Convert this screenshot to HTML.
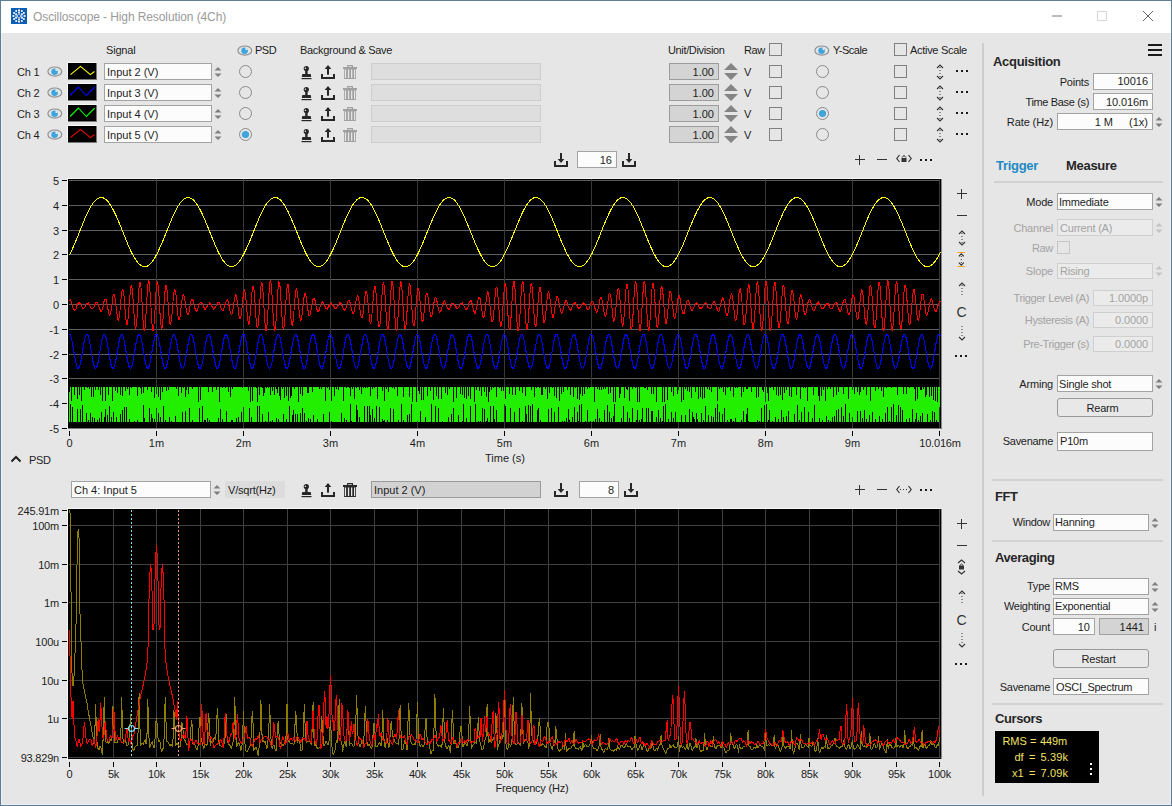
<!DOCTYPE html><html><head><meta charset="utf-8"><style>
html,body{margin:0;padding:0;}
body{width:1172px;height:806px;position:relative;overflow:hidden;background:#e6e6e6;font-family:"Liberation Sans",sans-serif;}
.t{position:absolute;white-space:pre;font-family:"Liberation Sans",sans-serif;}
svg{overflow:visible;}
</style></head><body>
<div style="position:absolute;left:0px;top:0px;width:1172px;height:33px;background:#ffffff;"></div>
<div style="position:absolute;left:1px;top:33px;width:1px;height:772px;background:#efefef;"></div>
<div style="position:absolute;left:1170px;top:33px;width:1px;height:772px;background:#efefef;"></div>
<div style="position:absolute;left:1px;top:804px;width:1170px;height:1px;background:#efefef;"></div>
<div style="position:absolute;left:0px;top:0px;width:1172px;height:806px;box-sizing:border-box;border:1px solid #5e7f9c;"></div>
<svg style="position:absolute;left:11px;top:8px;" width="16" height="16" viewBox="0 0 16 16"><rect width="16" height="16" fill="#0c5db4"/><circle cx="8" cy="2.2" r="1.0" fill="#ffffff"/><circle cx="5.2" cy="2.9" r="1.0" fill="#ffffff"/><circle cx="10.8" cy="2.9" r="1.0" fill="#ffffff"/><circle cx="3.1" cy="4.9" r="1.0" fill="#ffffff"/><circle cx="12.9" cy="4.9" r="1.0" fill="#ffffff"/><circle cx="2.3" cy="8" r="1.0" fill="#ffffff"/><circle cx="13.7" cy="8" r="1.0" fill="#ffffff"/><circle cx="3.1" cy="11.1" r="1.0" fill="#ffffff"/><circle cx="12.9" cy="11.1" r="1.0" fill="#ffffff"/><circle cx="5.2" cy="13.1" r="1.0" fill="#ffffff"/><circle cx="10.8" cy="13.1" r="1.0" fill="#ffffff"/><circle cx="8" cy="13.8" r="1.0" fill="#ffffff"/><circle cx="8" cy="4.6" r="1.0" fill="#ffffff"/><circle cx="5.1" cy="6.2" r="1.0" fill="#ffffff"/><circle cx="10.9" cy="6.2" r="1.0" fill="#ffffff"/><circle cx="5.1" cy="9.8" r="1.0" fill="#ffffff"/><circle cx="10.9" cy="9.8" r="1.0" fill="#ffffff"/><circle cx="8" cy="11.4" r="1.0" fill="#ffffff"/><circle cx="6.5" cy="8" r="1.0" fill="#ffffff"/><circle cx="9.5" cy="8" r="1.0" fill="#ffffff"/><circle cx="8" cy="6.7" r="1.0" fill="#ffffff"/><circle cx="8" cy="9.3" r="1.0" fill="#ffffff"/><path d="M8 2.2 V13.8 M2.3 8 H13.7 M3.1 4.9 L12.9 11.1 M12.9 4.9 L3.1 11.1" stroke="#cfe0f4" stroke-width="0.6"/><circle cx="8" cy="8" r="1.4" fill="#0c5db4"/></svg>
<div class="t" style="left:33px;top:10.84px;font-size:12px;line-height:12px;color:#9a9a9a;font-weight:normal;letter-spacing:-0.1px;">Oscilloscope - High Resolution (4Ch)</div>
<svg style="position:absolute;left:1052px;top:15px;" width="10" height="2" viewBox="0 0 10 2"><path d="M0 1 H10" stroke="#7a7a7a" stroke-width="1"/></svg>
<svg style="position:absolute;left:1097px;top:11px;" width="10" height="10" viewBox="0 0 10 10"><rect x="0.5" y="0.5" width="9" height="9" fill="none" stroke="#d6d6d6" stroke-width="1"/></svg>
<svg style="position:absolute;left:1143px;top:11px;" width="10" height="10" viewBox="0 0 10 10"><path d="M0 0 L10 10 M10 0 L0 10" stroke="#666" stroke-width="1"/></svg>
<div class="t" style="left:106px;top:44.69px;font-size:11px;line-height:11px;color:#1e1e1e;font-weight:normal;letter-spacing:-0.2px;">Signal</div>
<svg style="position:absolute;left:236.5px;top:44.5px;" width="16" height="11" viewBox="0 0 16 11"><ellipse cx="7.8" cy="5.6" rx="6.9" ry="4.6" fill="none" stroke="#8f8f8f" stroke-width="1.2"/><circle cx="7.6" cy="5.8" r="3.3" fill="#3ea4dc"/><path d="M8.4 2.6 A3.3 3.3 0 0 1 10.8 5.0 L8.6 5.0 Z" fill="#dfeef6"/></svg>
<div class="t" style="left:255px;top:44.69px;font-size:11px;line-height:11px;color:#1e1e1e;font-weight:normal;letter-spacing:-0.5px;">PSD</div>
<div class="t" style="left:300px;top:44.69px;font-size:11px;line-height:11px;color:#1e1e1e;font-weight:normal;letter-spacing:-0.3px;">Background &amp; Save</div>
<div class="t" style="left:668px;top:44.69px;font-size:11px;line-height:11px;color:#1e1e1e;font-weight:normal;letter-spacing:-0.35px;">Unit/Division</div>
<div class="t" style="left:744px;top:44.69px;font-size:11px;line-height:11px;color:#1e1e1e;font-weight:normal;letter-spacing:-0.4px;">Raw</div>
<div style="position:absolute;left:769px;top:43px;width:13px;height:13px;box-sizing:border-box;border:1px solid #808080;background:transparent;"></div>
<svg style="position:absolute;left:813.5px;top:44.5px;" width="16" height="11" viewBox="0 0 16 11"><ellipse cx="7.8" cy="5.6" rx="6.9" ry="4.6" fill="none" stroke="#8f8f8f" stroke-width="1.2"/><circle cx="7.6" cy="5.8" r="3.3" fill="#3ea4dc"/><path d="M8.4 2.6 A3.3 3.3 0 0 1 10.8 5.0 L8.6 5.0 Z" fill="#dfeef6"/></svg>
<div class="t" style="left:833px;top:44.69px;font-size:11px;line-height:11px;color:#1e1e1e;font-weight:normal;letter-spacing:-0.5px;">Y-Scale</div>
<div style="position:absolute;left:894px;top:43px;width:13px;height:13px;box-sizing:border-box;border:1px solid #808080;background:transparent;"></div>
<div class="t" style="left:910px;top:44.69px;font-size:11px;line-height:11px;color:#1e1e1e;font-weight:normal;letter-spacing:-0.3px;">Active Scale</div>
<div class="t" style="left:17px;top:66.69px;font-size:11px;line-height:11px;color:#1e1e1e;font-weight:normal;letter-spacing:-0.2px;">Ch 1</div>
<svg style="position:absolute;left:46.5px;top:65.7px;" width="16" height="11" viewBox="0 0 16 11"><ellipse cx="7.8" cy="5.6" rx="6.9" ry="4.6" fill="none" stroke="#8f8f8f" stroke-width="1.2"/><circle cx="7.6" cy="5.8" r="3.3" fill="#3ea4dc"/><path d="M8.4 2.6 A3.3 3.3 0 0 1 10.8 5.0 L8.6 5.0 Z" fill="#dfeef6"/></svg>
<div style="position:absolute;left:67px;top:62px;width:30px;height:17px;background:#f8f8f8;"></div>
<div style="position:absolute;left:68px;top:63px;width:29px;height:17px;background:#7a7a7a;"></div>
<div style="position:absolute;left:68px;top:63px;width:28px;height:16px;background:#000;"></div>
<svg style="position:absolute;left:68px;top:63px;" width="29" height="17" viewBox="0 0 29 17"><polyline points="2.5,11.6 12.5,3.4 22.4,11.6 26.5,8.5" fill="none" stroke="#ffff00" stroke-width="1.1"/></svg>
<div style="position:absolute;left:104px;top:63px;width:108px;height:17px;box-sizing:border-box;background:#fcfcfc;border:1px solid #a3a3a3;"></div>
<div class="t" style="left:107px;top:66.69px;font-size:11px;line-height:11px;color:#1e1e1e;font-weight:normal;letter-spacing:0px;">Input 2 (V)</div>
<svg style="position:absolute;left:214px;top:65.5px;" width="8" height="12" viewBox="0 0 8 12"><path d="M0.5 4.5 L4 1 L7.5 4.5 Z M0.5 7.5 L4 11 L7.5 7.5 Z" fill="#7f7f7f"/></svg>
<svg style="position:absolute;left:238.5px;top:64.7px;" width="13" height="13" viewBox="0 0 13 13"><circle cx="6.5" cy="6.5" r="6" fill="none" stroke="#8a8a8a" stroke-width="1"/></svg>
<svg style="position:absolute;left:301px;top:66px;" width="12" height="14" viewBox="0 0 12 14"><circle cx="5.3" cy="2.6" r="2.6" fill="#262626"/><rect x="4.2" y="4" width="2.4" height="4" fill="#262626"/><path d="M1.3 8 H9.7 L10.2 11 H0.8 Z" fill="#262626"/><rect x="0.5" y="12" width="10" height="1.2" fill="#262626"/><circle cx="4.4" cy="2.3" r="0.8" fill="#e6e6e6"/></svg>
<svg style="position:absolute;left:321px;top:65px;" width="15" height="14" viewBox="0 0 15 14"><path d="M7 0 L10.3 4 H3.7 Z" fill="#262626"/><rect x="6" y="3.5" width="2" height="6.2" fill="#262626"/><path d="M1 9 V12.9 H13 V9" fill="none" stroke="#262626" stroke-width="2"/></svg>
<svg style="position:absolute;left:343px;top:65px;" width="14" height="15" viewBox="0 0 14 15"><path d="M4.7 2 V0.6 H9.4 V2" fill="none" stroke="#a0a0a0" stroke-width="1.2"/><rect x="0" y="2" width="14" height="2" fill="#a0a0a0"/><path d="M1.1 4 V13.9 H12.9 V4 Z M1.9 4.5 V13 H3.1 V4.5 Z M4.9 4.5 V13 H6.2 V4.5 Z M8 4.5 V13 H9.3 V4.5 Z M11 4.5 V13 H12.1 V4.5 Z" fill="#a0a0a0" fill-rule="evenodd"/></svg>
<div style="position:absolute;left:371px;top:63px;width:170px;height:17px;box-sizing:border-box;background:#dedede;border:1px solid #cdcdcd;"></div>
<div style="position:absolute;left:669px;top:63px;width:50px;height:17px;box-sizing:border-box;background:#d4d4d4;border:1px solid #9c9c9c;"></div>
<div class="t" style="right:458px;text-align:right;top:66.69px;font-size:11px;line-height:11px;color:#1e1e1e;font-weight:normal;letter-spacing:0px;">1.00</div>
<svg style="position:absolute;left:724px;top:62.5px;" width="14" height="18" viewBox="0 0 14 18"><path d="M0 7 L7 0 L14 7 Z M0 10 L7 17 L14 10 Z" fill="#858585"/></svg>
<div class="t" style="left:744px;top:66.69px;font-size:11px;line-height:11px;color:#1e1e1e;font-weight:normal;letter-spacing:0px;">V</div>
<div style="position:absolute;left:769px;top:65px;width:13px;height:13px;box-sizing:border-box;border:1px solid #808080;background:transparent;"></div>
<svg style="position:absolute;left:815.5px;top:64.7px;" width="13" height="13" viewBox="0 0 13 13"><circle cx="6.5" cy="6.5" r="6" fill="none" stroke="#8a8a8a" stroke-width="1"/></svg>
<div style="position:absolute;left:894px;top:65px;width:13px;height:13px;box-sizing:border-box;border:1px solid #808080;background:transparent;"></div>
<svg style="position:absolute;left:935.5px;top:64px;" width="8" height="16" viewBox="0 0 8 16"><path d="M1 4 L4 1 L7 4 M1 12 L4 15 L7 12" fill="none" stroke="#333" stroke-width="1.1"/><path d="M4 3 V13" stroke="#333" stroke-width="1" stroke-dasharray="1 2"/></svg>
<div style="position:absolute;left:956px;top:70px;width:2px;height:2px;background:#1a1a1a;"></div>
<div style="position:absolute;left:961px;top:70px;width:2px;height:2px;background:#1a1a1a;"></div>
<div style="position:absolute;left:966px;top:70px;width:2px;height:2px;background:#1a1a1a;"></div>
<div class="t" style="left:17px;top:87.69px;font-size:11px;line-height:11px;color:#1e1e1e;font-weight:normal;letter-spacing:-0.2px;">Ch 2</div>
<svg style="position:absolute;left:46.5px;top:86.7px;" width="16" height="11" viewBox="0 0 16 11"><ellipse cx="7.8" cy="5.6" rx="6.9" ry="4.6" fill="none" stroke="#8f8f8f" stroke-width="1.2"/><circle cx="7.6" cy="5.8" r="3.3" fill="#3ea4dc"/><path d="M8.4 2.6 A3.3 3.3 0 0 1 10.8 5.0 L8.6 5.0 Z" fill="#dfeef6"/></svg>
<div style="position:absolute;left:67px;top:83px;width:30px;height:17px;background:#f8f8f8;"></div>
<div style="position:absolute;left:68px;top:84px;width:29px;height:17px;background:#7a7a7a;"></div>
<div style="position:absolute;left:68px;top:84px;width:28px;height:16px;background:#000;"></div>
<svg style="position:absolute;left:68px;top:84px;" width="29" height="17" viewBox="0 0 29 17"><polyline points="2.0,11.5 10.4,3.0 18.3,11.5 26.8,3.0" fill="none" stroke="#0000ff" stroke-width="1.1"/></svg>
<div style="position:absolute;left:104px;top:84px;width:108px;height:17px;box-sizing:border-box;background:#fcfcfc;border:1px solid #a3a3a3;"></div>
<div class="t" style="left:107px;top:87.69px;font-size:11px;line-height:11px;color:#1e1e1e;font-weight:normal;letter-spacing:0px;">Input 3 (V)</div>
<svg style="position:absolute;left:214px;top:86.5px;" width="8" height="12" viewBox="0 0 8 12"><path d="M0.5 4.5 L4 1 L7.5 4.5 Z M0.5 7.5 L4 11 L7.5 7.5 Z" fill="#7f7f7f"/></svg>
<svg style="position:absolute;left:238.5px;top:85.7px;" width="13" height="13" viewBox="0 0 13 13"><circle cx="6.5" cy="6.5" r="6" fill="none" stroke="#8a8a8a" stroke-width="1"/></svg>
<svg style="position:absolute;left:301px;top:87px;" width="12" height="14" viewBox="0 0 12 14"><circle cx="5.3" cy="2.6" r="2.6" fill="#262626"/><rect x="4.2" y="4" width="2.4" height="4" fill="#262626"/><path d="M1.3 8 H9.7 L10.2 11 H0.8 Z" fill="#262626"/><rect x="0.5" y="12" width="10" height="1.2" fill="#262626"/><circle cx="4.4" cy="2.3" r="0.8" fill="#e6e6e6"/></svg>
<svg style="position:absolute;left:321px;top:86px;" width="15" height="14" viewBox="0 0 15 14"><path d="M7 0 L10.3 4 H3.7 Z" fill="#262626"/><rect x="6" y="3.5" width="2" height="6.2" fill="#262626"/><path d="M1 9 V12.9 H13 V9" fill="none" stroke="#262626" stroke-width="2"/></svg>
<svg style="position:absolute;left:343px;top:86px;" width="14" height="15" viewBox="0 0 14 15"><path d="M4.7 2 V0.6 H9.4 V2" fill="none" stroke="#a0a0a0" stroke-width="1.2"/><rect x="0" y="2" width="14" height="2" fill="#a0a0a0"/><path d="M1.1 4 V13.9 H12.9 V4 Z M1.9 4.5 V13 H3.1 V4.5 Z M4.9 4.5 V13 H6.2 V4.5 Z M8 4.5 V13 H9.3 V4.5 Z M11 4.5 V13 H12.1 V4.5 Z" fill="#a0a0a0" fill-rule="evenodd"/></svg>
<div style="position:absolute;left:371px;top:84px;width:170px;height:17px;box-sizing:border-box;background:#dedede;border:1px solid #cdcdcd;"></div>
<div style="position:absolute;left:669px;top:84px;width:50px;height:17px;box-sizing:border-box;background:#d4d4d4;border:1px solid #9c9c9c;"></div>
<div class="t" style="right:458px;text-align:right;top:87.69px;font-size:11px;line-height:11px;color:#1e1e1e;font-weight:normal;letter-spacing:0px;">1.00</div>
<svg style="position:absolute;left:724px;top:83.5px;" width="14" height="18" viewBox="0 0 14 18"><path d="M0 7 L7 0 L14 7 Z M0 10 L7 17 L14 10 Z" fill="#858585"/></svg>
<div class="t" style="left:744px;top:87.69px;font-size:11px;line-height:11px;color:#1e1e1e;font-weight:normal;letter-spacing:0px;">V</div>
<div style="position:absolute;left:769px;top:86px;width:13px;height:13px;box-sizing:border-box;border:1px solid #808080;background:transparent;"></div>
<svg style="position:absolute;left:815.5px;top:85.7px;" width="13" height="13" viewBox="0 0 13 13"><circle cx="6.5" cy="6.5" r="6" fill="none" stroke="#8a8a8a" stroke-width="1"/></svg>
<div style="position:absolute;left:894px;top:86px;width:13px;height:13px;box-sizing:border-box;border:1px solid #808080;background:transparent;"></div>
<svg style="position:absolute;left:935.5px;top:85px;" width="8" height="16" viewBox="0 0 8 16"><path d="M1 4 L4 1 L7 4 M1 12 L4 15 L7 12" fill="none" stroke="#333" stroke-width="1.1"/><path d="M4 3 V13" stroke="#333" stroke-width="1" stroke-dasharray="1 2"/></svg>
<div style="position:absolute;left:956px;top:91px;width:2px;height:2px;background:#1a1a1a;"></div>
<div style="position:absolute;left:961px;top:91px;width:2px;height:2px;background:#1a1a1a;"></div>
<div style="position:absolute;left:966px;top:91px;width:2px;height:2px;background:#1a1a1a;"></div>
<div class="t" style="left:17px;top:108.69px;font-size:11px;line-height:11px;color:#1e1e1e;font-weight:normal;letter-spacing:-0.2px;">Ch 3</div>
<svg style="position:absolute;left:46.5px;top:107.7px;" width="16" height="11" viewBox="0 0 16 11"><ellipse cx="7.8" cy="5.6" rx="6.9" ry="4.6" fill="none" stroke="#8f8f8f" stroke-width="1.2"/><circle cx="7.6" cy="5.8" r="3.3" fill="#3ea4dc"/><path d="M8.4 2.6 A3.3 3.3 0 0 1 10.8 5.0 L8.6 5.0 Z" fill="#dfeef6"/></svg>
<div style="position:absolute;left:67px;top:104px;width:30px;height:17px;background:#f8f8f8;"></div>
<div style="position:absolute;left:68px;top:105px;width:29px;height:17px;background:#7a7a7a;"></div>
<div style="position:absolute;left:68px;top:105px;width:28px;height:16px;background:#000;"></div>
<svg style="position:absolute;left:68px;top:105px;" width="29" height="17" viewBox="0 0 29 17"><polyline points="2.0,11.5 10.4,3.0 18.3,11.5 26.8,3.0" fill="none" stroke="#00ff00" stroke-width="1.1"/></svg>
<div style="position:absolute;left:104px;top:105px;width:108px;height:17px;box-sizing:border-box;background:#fcfcfc;border:1px solid #a3a3a3;"></div>
<div class="t" style="left:107px;top:108.69px;font-size:11px;line-height:11px;color:#1e1e1e;font-weight:normal;letter-spacing:0px;">Input 4 (V)</div>
<svg style="position:absolute;left:214px;top:107.5px;" width="8" height="12" viewBox="0 0 8 12"><path d="M0.5 4.5 L4 1 L7.5 4.5 Z M0.5 7.5 L4 11 L7.5 7.5 Z" fill="#7f7f7f"/></svg>
<svg style="position:absolute;left:238.5px;top:106.7px;" width="13" height="13" viewBox="0 0 13 13"><circle cx="6.5" cy="6.5" r="6" fill="none" stroke="#8a8a8a" stroke-width="1"/></svg>
<svg style="position:absolute;left:301px;top:108px;" width="12" height="14" viewBox="0 0 12 14"><circle cx="5.3" cy="2.6" r="2.6" fill="#262626"/><rect x="4.2" y="4" width="2.4" height="4" fill="#262626"/><path d="M1.3 8 H9.7 L10.2 11 H0.8 Z" fill="#262626"/><rect x="0.5" y="12" width="10" height="1.2" fill="#262626"/><circle cx="4.4" cy="2.3" r="0.8" fill="#e6e6e6"/></svg>
<svg style="position:absolute;left:321px;top:107px;" width="15" height="14" viewBox="0 0 15 14"><path d="M7 0 L10.3 4 H3.7 Z" fill="#262626"/><rect x="6" y="3.5" width="2" height="6.2" fill="#262626"/><path d="M1 9 V12.9 H13 V9" fill="none" stroke="#262626" stroke-width="2"/></svg>
<svg style="position:absolute;left:343px;top:107px;" width="14" height="15" viewBox="0 0 14 15"><path d="M4.7 2 V0.6 H9.4 V2" fill="none" stroke="#a0a0a0" stroke-width="1.2"/><rect x="0" y="2" width="14" height="2" fill="#a0a0a0"/><path d="M1.1 4 V13.9 H12.9 V4 Z M1.9 4.5 V13 H3.1 V4.5 Z M4.9 4.5 V13 H6.2 V4.5 Z M8 4.5 V13 H9.3 V4.5 Z M11 4.5 V13 H12.1 V4.5 Z" fill="#a0a0a0" fill-rule="evenodd"/></svg>
<div style="position:absolute;left:371px;top:105px;width:170px;height:17px;box-sizing:border-box;background:#dedede;border:1px solid #cdcdcd;"></div>
<div style="position:absolute;left:669px;top:105px;width:50px;height:17px;box-sizing:border-box;background:#d4d4d4;border:1px solid #9c9c9c;"></div>
<div class="t" style="right:458px;text-align:right;top:108.69px;font-size:11px;line-height:11px;color:#1e1e1e;font-weight:normal;letter-spacing:0px;">1.00</div>
<svg style="position:absolute;left:724px;top:104.5px;" width="14" height="18" viewBox="0 0 14 18"><path d="M0 7 L7 0 L14 7 Z M0 10 L7 17 L14 10 Z" fill="#858585"/></svg>
<div class="t" style="left:744px;top:108.69px;font-size:11px;line-height:11px;color:#1e1e1e;font-weight:normal;letter-spacing:0px;">V</div>
<div style="position:absolute;left:769px;top:107px;width:13px;height:13px;box-sizing:border-box;border:1px solid #808080;background:transparent;"></div>
<svg style="position:absolute;left:815.5px;top:106.7px;" width="13" height="13" viewBox="0 0 13 13"><circle cx="6.5" cy="6.5" r="6" fill="none" stroke="#8a8a8a" stroke-width="1"/><circle cx="6.5" cy="6.5" r="3.6" fill="#3ea4dc"/></svg>
<div style="position:absolute;left:894px;top:107px;width:13px;height:13px;box-sizing:border-box;border:1px solid #808080;background:transparent;"></div>
<svg style="position:absolute;left:935.5px;top:106px;" width="8" height="16" viewBox="0 0 8 16"><path d="M1 4 L4 1 L7 4 M1 12 L4 15 L7 12" fill="none" stroke="#333" stroke-width="1.1"/><path d="M4 3 V13" stroke="#333" stroke-width="1" stroke-dasharray="1 2"/></svg>
<div style="position:absolute;left:956px;top:112px;width:2px;height:2px;background:#1a1a1a;"></div>
<div style="position:absolute;left:961px;top:112px;width:2px;height:2px;background:#1a1a1a;"></div>
<div style="position:absolute;left:966px;top:112px;width:2px;height:2px;background:#1a1a1a;"></div>
<div class="t" style="left:17px;top:129.69px;font-size:11px;line-height:11px;color:#1e1e1e;font-weight:normal;letter-spacing:-0.2px;">Ch 4</div>
<svg style="position:absolute;left:46.5px;top:128.7px;" width="16" height="11" viewBox="0 0 16 11"><ellipse cx="7.8" cy="5.6" rx="6.9" ry="4.6" fill="none" stroke="#8f8f8f" stroke-width="1.2"/><circle cx="7.6" cy="5.8" r="3.3" fill="#3ea4dc"/><path d="M8.4 2.6 A3.3 3.3 0 0 1 10.8 5.0 L8.6 5.0 Z" fill="#dfeef6"/></svg>
<div style="position:absolute;left:67px;top:125px;width:30px;height:17px;background:#f8f8f8;"></div>
<div style="position:absolute;left:68px;top:126px;width:29px;height:17px;background:#7a7a7a;"></div>
<div style="position:absolute;left:68px;top:126px;width:28px;height:16px;background:#000;"></div>
<svg style="position:absolute;left:68px;top:126px;" width="29" height="17" viewBox="0 0 29 17"><polyline points="2.5,11.6 12.5,3.4 22.4,11.6 26.5,8.5" fill="none" stroke="#ff0000" stroke-width="1.1"/></svg>
<div style="position:absolute;left:104px;top:126px;width:108px;height:17px;box-sizing:border-box;background:#fcfcfc;border:1px solid #a3a3a3;"></div>
<div class="t" style="left:107px;top:129.69px;font-size:11px;line-height:11px;color:#1e1e1e;font-weight:normal;letter-spacing:0px;">Input 5 (V)</div>
<svg style="position:absolute;left:214px;top:128.5px;" width="8" height="12" viewBox="0 0 8 12"><path d="M0.5 4.5 L4 1 L7.5 4.5 Z M0.5 7.5 L4 11 L7.5 7.5 Z" fill="#7f7f7f"/></svg>
<svg style="position:absolute;left:238.5px;top:127.69999999999999px;" width="13" height="13" viewBox="0 0 13 13"><circle cx="6.5" cy="6.5" r="6" fill="none" stroke="#8a8a8a" stroke-width="1"/><circle cx="6.5" cy="6.5" r="3.6" fill="#3ea4dc"/></svg>
<svg style="position:absolute;left:301px;top:129px;" width="12" height="14" viewBox="0 0 12 14"><circle cx="5.3" cy="2.6" r="2.6" fill="#262626"/><rect x="4.2" y="4" width="2.4" height="4" fill="#262626"/><path d="M1.3 8 H9.7 L10.2 11 H0.8 Z" fill="#262626"/><rect x="0.5" y="12" width="10" height="1.2" fill="#262626"/><circle cx="4.4" cy="2.3" r="0.8" fill="#e6e6e6"/></svg>
<svg style="position:absolute;left:321px;top:128px;" width="15" height="14" viewBox="0 0 15 14"><path d="M7 0 L10.3 4 H3.7 Z" fill="#262626"/><rect x="6" y="3.5" width="2" height="6.2" fill="#262626"/><path d="M1 9 V12.9 H13 V9" fill="none" stroke="#262626" stroke-width="2"/></svg>
<svg style="position:absolute;left:343px;top:128px;" width="14" height="15" viewBox="0 0 14 15"><path d="M4.7 2 V0.6 H9.4 V2" fill="none" stroke="#a0a0a0" stroke-width="1.2"/><rect x="0" y="2" width="14" height="2" fill="#a0a0a0"/><path d="M1.1 4 V13.9 H12.9 V4 Z M1.9 4.5 V13 H3.1 V4.5 Z M4.9 4.5 V13 H6.2 V4.5 Z M8 4.5 V13 H9.3 V4.5 Z M11 4.5 V13 H12.1 V4.5 Z" fill="#a0a0a0" fill-rule="evenodd"/></svg>
<div style="position:absolute;left:371px;top:126px;width:170px;height:17px;box-sizing:border-box;background:#dedede;border:1px solid #cdcdcd;"></div>
<div style="position:absolute;left:669px;top:126px;width:50px;height:17px;box-sizing:border-box;background:#d4d4d4;border:1px solid #9c9c9c;"></div>
<div class="t" style="right:458px;text-align:right;top:129.69px;font-size:11px;line-height:11px;color:#1e1e1e;font-weight:normal;letter-spacing:0px;">1.00</div>
<svg style="position:absolute;left:724px;top:125.5px;" width="14" height="18" viewBox="0 0 14 18"><path d="M0 7 L7 0 L14 7 Z M0 10 L7 17 L14 10 Z" fill="#858585"/></svg>
<div class="t" style="left:744px;top:129.69px;font-size:11px;line-height:11px;color:#1e1e1e;font-weight:normal;letter-spacing:0px;">V</div>
<div style="position:absolute;left:769px;top:128px;width:13px;height:13px;box-sizing:border-box;border:1px solid #808080;background:transparent;"></div>
<svg style="position:absolute;left:815.5px;top:127.69999999999999px;" width="13" height="13" viewBox="0 0 13 13"><circle cx="6.5" cy="6.5" r="6" fill="none" stroke="#8a8a8a" stroke-width="1"/></svg>
<div style="position:absolute;left:894px;top:128px;width:13px;height:13px;box-sizing:border-box;border:1px solid #808080;background:transparent;"></div>
<svg style="position:absolute;left:935.5px;top:127px;" width="8" height="16" viewBox="0 0 8 16"><path d="M1 4 L4 1 L7 4 M1 12 L4 15 L7 12" fill="none" stroke="#333" stroke-width="1.1"/><path d="M4 3 V13" stroke="#333" stroke-width="1" stroke-dasharray="1 2"/></svg>
<div style="position:absolute;left:956px;top:133px;width:2px;height:2px;background:#1a1a1a;"></div>
<div style="position:absolute;left:961px;top:133px;width:2px;height:2px;background:#1a1a1a;"></div>
<div style="position:absolute;left:966px;top:133px;width:2px;height:2px;background:#1a1a1a;"></div>
<svg style="position:absolute;left:554px;top:153px;" width="14" height="14" viewBox="0 0 14 14"><rect x="6" y="0" width="2" height="6.5" fill="#262626"/><path d="M3.7 6 H10.3 L7 10 Z" fill="#262626"/><path d="M1 8 V12.9 H13 V8" fill="none" stroke="#262626" stroke-width="2"/></svg>
<div style="position:absolute;left:577px;top:151px;width:40px;height:17px;box-sizing:border-box;background:#fcfcfc;border:1px solid #a3a3a3;"></div>
<div class="t" style="right:560px;text-align:right;top:154.69px;font-size:11px;line-height:11px;color:#1e1e1e;font-weight:normal;letter-spacing:0px;">16</div>
<svg style="position:absolute;left:622px;top:153px;" width="14" height="14" viewBox="0 0 14 14"><rect x="6" y="0" width="2" height="6.5" fill="#262626"/><path d="M3.7 6 H10.3 L7 10 Z" fill="#262626"/><path d="M1 8 V12.9 H13 V8" fill="none" stroke="#262626" stroke-width="2"/></svg>
<div style="position:absolute;left:855px;top:159px;width:10px;height:1px;background:#333;"></div>
<div style="position:absolute;left:859px;top:155px;width:1px;height:10px;background:#333;"></div>
<div style="position:absolute;left:877px;top:159px;width:10px;height:1px;background:#333;"></div>
<svg style="position:absolute;left:896px;top:154px;" width="16" height="9" viewBox="0 0 16 9"><path d="M3.5 1 L0.8 4.5 L3.5 8 M12.5 1 L15.2 4.5 L12.5 8" fill="none" stroke="#333" stroke-width="1.2"/><path d="M6 3.5 Q8 0 10 3.5" fill="none" stroke="#333" stroke-width="1"/><rect x="5.5" y="4" width="5" height="4" fill="#333"/></svg>
<div style="position:absolute;left:920px;top:159px;width:2px;height:2px;background:#1a1a1a;"></div>
<div style="position:absolute;left:925px;top:159px;width:2px;height:2px;background:#1a1a1a;"></div>
<div style="position:absolute;left:930px;top:159px;width:2px;height:2px;background:#1a1a1a;"></div>
<div style="position:absolute;left:67px;top:178px;width:875px;height:1px;background:#f6f6f6;"></div>
<div style="position:absolute;left:67px;top:178px;width:1px;height:251px;background:#f6f6f6;"></div>
<div style="position:absolute;left:68px;top:179px;width:873px;height:249px;background:#000;"></div>
<div style="position:absolute;left:68px;top:428px;width:874px;height:1px;background:#7a7a7a;"></div>
<div style="position:absolute;left:941px;top:179px;width:1px;height:250px;background:#888;"></div>
<svg style="position:absolute;left:68px;top:179px;" width="873" height="249" viewBox="0 0 873 249"><path d="M1 1.5 H872" stroke="#5e5e5e" stroke-width="1"/><path d="M1 26.5 H872" stroke="#5e5e5e" stroke-width="1"/><path d="M1 51.5 H872" stroke="#5e5e5e" stroke-width="1"/><path d="M1 75.5 H872" stroke="#5e5e5e" stroke-width="1"/><path d="M1 100.5 H872" stroke="#5e5e5e" stroke-width="1"/><path d="M1 125.5 H872" stroke="#5e5e5e" stroke-width="1"/><path d="M1 150.5 H872" stroke="#5e5e5e" stroke-width="1"/><path d="M1 175.5 H872" stroke="#5e5e5e" stroke-width="1"/><path d="M1 199.5 H872" stroke="#5e5e5e" stroke-width="1"/><path d="M1 224.5 H872" stroke="#5e5e5e" stroke-width="1"/><path d="M88.5 0 V249" stroke="#383838" stroke-width="1"/><path d="M175.5 0 V249" stroke="#383838" stroke-width="1"/><path d="M262.5 0 V249" stroke="#383838" stroke-width="1"/><path d="M349.5 0 V249" stroke="#383838" stroke-width="1"/><path d="M436.5 0 V249" stroke="#383838" stroke-width="1"/><path d="M523.5 0 V249" stroke="#383838" stroke-width="1"/><path d="M610.5 0 V249" stroke="#383838" stroke-width="1"/><path d="M697.5 0 V249" stroke="#383838" stroke-width="1"/><path d="M784.5 0 V249" stroke="#383838" stroke-width="1"/><path d="M871.5 0 V249" stroke="#383838" stroke-width="1"/><path d="M1.5 75.8 L1.8 75.2 L2.2 74.5 L2.5 73.8 L2.8 73.2 L3.2 72.5 L3.5 71.8 L3.8 71.1 L4.2 70.3 L4.5 69.6 L4.8 68.9 L5.2 68.1 L5.5 67.4 L5.9 66.6 L6.2 65.8 L6.5 65.0 L6.9 64.2 L7.2 63.4 L7.5 62.6 L7.9 61.8 L8.2 61.0 L8.5 60.2 L8.9 59.4 L9.2 58.6 L9.5 57.7 L9.9 56.9 L10.2 56.1 L10.5 55.2 L10.9 54.4 L11.2 53.6 L11.5 52.7 L11.9 51.9 L12.2 51.0 L12.6 50.2 L12.9 49.4 L13.2 48.5 L13.6 47.7 L13.9 46.9 L14.2 46.1 L14.6 45.3 L14.9 44.4 L15.2 43.6 L15.6 42.8 L15.9 42.0 L16.2 41.2 L16.6 40.5 L16.9 39.7 L17.2 38.9 L17.6 38.2 L17.9 37.4 L18.2 36.7 L18.6 35.9 L18.9 35.2 L19.3 34.5 L19.6 33.8 L19.9 33.1 L20.3 32.4 L20.6 31.8 L20.9 31.1 L21.3 30.5 L21.6 29.8 L21.9 29.2 L22.3 28.6 L22.6 28.1 L22.9 27.5 L23.3 26.9 L23.6 26.4 L23.9 25.9 L24.3 25.4 L24.6 24.9 L24.9 24.4 L25.3 23.9 L25.6 23.5 L26.0 23.1 L26.3 22.7 L26.6 22.3 L27.0 21.9 L27.3 21.5 L27.6 21.2 L28.0 20.9 L28.3 20.6 L28.6 20.3 L29.0 20.1 L29.3 19.8 L29.6 19.6 L30.0 19.4 L30.3 19.2 L30.6 19.1 L31.0 18.9 L31.3 18.8 L31.6 18.7 L32.0 18.6 L32.3 18.6 L32.7 18.5 L33.0 18.5 L33.3 18.5 L33.7 18.5 L34.0 18.6 L34.3 18.6 L34.7 18.7 L35.0 18.8 L35.3 18.9 L35.7 19.1 L36.0 19.3 L36.3 19.4 L36.7 19.6 L37.0 19.9 L37.3 20.1 L37.7 20.4 L38.0 20.6 L38.3 20.9 L38.7 21.3 L39.0 21.6 L39.4 21.9 L39.7 22.3 L40.0 22.7 L40.4 23.1 L40.7 23.5 L41.0 24.0 L41.4 24.4 L41.7 24.9 L42.0 25.4 L42.4 25.9 L42.7 26.5 L43.0 27.0 L43.4 27.6 L43.7 28.1 L44.0 28.7 L44.4 29.3 L44.7 29.9 L45.0 30.6 L45.4 31.2 L45.7 31.9 L46.1 32.5 L46.4 33.2 L46.7 33.9 L47.1 34.6 L47.4 35.3 L47.7 36.0 L48.1 36.8 L48.4 37.5 L48.7 38.3 L49.1 39.0 L49.4 39.8 L49.7 40.6 L50.1 41.3 L50.4 42.1 L50.7 42.9 L51.1 43.7 L51.4 44.5 L51.7 45.4 L52.1 46.2 L52.4 47.0 L52.8 47.8 L53.1 48.7 L53.4 49.5 L53.8 50.3 L54.1 51.2 L54.4 52.0 L54.8 52.8 L55.1 53.7 L55.4 54.5 L55.8 55.3 L56.1 56.2 L56.4 57.0 L56.8 57.8 L57.1 58.7 L57.4 59.5 L57.8 60.3 L58.1 61.1 L58.4 61.9 L58.8 62.7 L59.1 63.6 L59.5 64.3 L59.8 65.1 L60.1 65.9 L60.5 66.7 L60.8 67.5 L61.1 68.2 L61.5 69.0 L61.8 69.7 L62.1 70.4 L62.5 71.2 L62.8 71.9 L63.1 72.6 L63.5 73.2 L63.8 73.9 L64.1 74.6 L64.5 75.2 L64.8 75.9 L65.1 76.5 L65.5 77.1 L65.8 77.7 L66.2 78.3 L66.5 78.8 L66.8 79.4 L67.2 79.9 L67.5 80.5 L67.8 81.0 L68.2 81.5 L68.5 81.9 L68.8 82.4 L69.2 82.8 L69.5 83.2 L69.8 83.6 L70.2 84.0 L70.5 84.4 L70.8 84.7 L71.2 85.1 L71.5 85.4 L71.8 85.7 L72.2 85.9 L72.5 86.2 L72.9 86.4 L73.2 86.6 L73.5 86.8 L73.9 87.0 L74.2 87.2 L74.5 87.3 L74.9 87.4 L75.2 87.5 L75.5 87.6 L75.9 87.7 L76.2 87.7 L76.5 87.7 L76.9 87.7 L77.2 87.7 L77.5 87.6 L77.9 87.6 L78.2 87.5 L78.5 87.4 L78.9 87.2 L79.2 87.1 L79.6 86.9 L79.9 86.7 L80.2 86.5 L80.6 86.3 L80.9 86.1 L81.2 85.8 L81.6 85.5 L81.9 85.2 L82.2 84.9 L82.6 84.6 L82.9 84.2 L83.2 83.8 L83.6 83.4 L83.9 83.0 L84.2 82.6 L84.6 82.1 L84.9 81.7 L85.2 81.2 L85.6 80.7 L85.9 80.2 L86.3 79.6 L86.6 79.1 L86.9 78.5 L87.3 78.0 L87.6 77.4 L87.9 76.8 L88.3 76.2 L88.6 75.5 L88.9 74.9 L89.3 74.2 L89.6 73.6 L89.9 72.9 L90.3 72.2 L90.6 71.5 L90.9 70.8 L91.3 70.0 L91.6 69.3 L91.9 68.6 L92.3 67.8 L92.6 67.0 L93.0 66.3 L93.3 65.5 L93.6 64.7 L94.0 63.9 L94.3 63.1 L94.6 62.3 L95.0 61.5 L95.3 60.7 L95.6 59.9 L96.0 59.0 L96.3 58.2 L96.6 57.4 L97.0 56.6 L97.3 55.7 L97.6 54.9 L98.0 54.0 L98.3 53.2 L98.6 52.4 L99.0 51.5 L99.3 50.7 L99.7 49.9 L100.0 49.0 L100.3 48.2 L100.7 47.4 L101.0 46.6 L101.3 45.7 L101.7 44.9 L102.0 44.1 L102.3 43.3 L102.7 42.5 L103.0 41.7 L103.3 40.9 L103.7 40.1 L104.0 39.4 L104.3 38.6 L104.7 37.8 L105.0 37.1 L105.3 36.4 L105.7 35.6 L106.0 34.9 L106.4 34.2 L106.7 33.5 L107.0 32.8 L107.4 32.2 L107.7 31.5 L108.0 30.8 L108.4 30.2 L108.7 29.6 L109.0 29.0 L109.4 28.4 L109.7 27.8 L110.0 27.3 L110.4 26.7 L110.7 26.2 L111.0 25.7 L111.4 25.1 L111.7 24.7 L112.0 24.2 L112.4 23.7 L112.7 23.3 L113.1 22.9 L113.4 22.5 L113.7 22.1 L114.1 21.8 L114.4 21.4 L114.7 21.1 L115.1 20.8 L115.4 20.5 L115.7 20.2 L116.1 20.0 L116.4 19.7 L116.7 19.5 L117.1 19.3 L117.4 19.2 L117.7 19.0 L118.1 18.9 L118.4 18.8 L118.7 18.7 L119.1 18.6 L119.4 18.6 L119.8 18.5 L120.1 18.5 L120.4 18.5 L120.8 18.6 L121.1 18.6 L121.4 18.7 L121.8 18.8 L122.1 18.9 L122.4 19.0 L122.8 19.2 L123.1 19.3 L123.4 19.5 L123.8 19.7 L124.1 20.0 L124.4 20.2 L124.8 20.5 L125.1 20.8 L125.4 21.1 L125.8 21.4 L126.1 21.7 L126.5 22.1 L126.8 22.5 L127.1 22.9 L127.5 23.3 L127.8 23.7 L128.1 24.2 L128.5 24.6 L128.8 25.1 L129.1 25.6 L129.5 26.1 L129.8 26.7 L130.1 27.2 L130.5 27.8 L130.8 28.4 L131.1 29.0 L131.5 29.6 L131.8 30.2 L132.1 30.8 L132.5 31.5 L132.8 32.1 L133.2 32.8 L133.5 33.5 L133.8 34.2 L134.2 34.9 L134.5 35.6 L134.8 36.3 L135.2 37.1 L135.5 37.8 L135.8 38.6 L136.2 39.3 L136.5 40.1 L136.8 40.9 L137.2 41.7 L137.5 42.5 L137.8 43.3 L138.2 44.1 L138.5 44.9 L138.8 45.7 L139.2 46.5 L139.5 47.3 L139.9 48.2 L140.2 49.0 L140.5 49.8 L140.9 50.7 L141.2 51.5 L141.5 52.3 L141.9 53.2 L142.2 54.0 L142.5 54.9 L142.9 55.7 L143.2 56.5 L143.5 57.4 L143.9 58.2 L144.2 59.0 L144.5 59.8 L144.9 60.7 L145.2 61.5 L145.5 62.3 L145.9 63.1 L146.2 63.9 L146.6 64.7 L146.9 65.5 L147.2 66.2 L147.6 67.0 L147.9 67.8 L148.2 68.5 L148.6 69.3 L148.9 70.0 L149.2 70.7 L149.6 71.4 L149.9 72.2 L150.2 72.8 L150.6 73.5 L150.9 74.2 L151.2 74.9 L151.6 75.5 L151.9 76.1 L152.2 76.7 L152.6 77.4 L152.9 77.9 L153.3 78.5 L153.6 79.1 L153.9 79.6 L154.3 80.2 L154.6 80.7 L154.9 81.2 L155.3 81.6 L155.6 82.1 L155.9 82.6 L156.3 83.0 L156.6 83.4 L156.9 83.8 L157.3 84.2 L157.6 84.5 L157.9 84.9 L158.3 85.2 L158.6 85.5 L158.9 85.8 L159.3 86.1 L159.6 86.3 L160.0 86.5 L160.3 86.7 L160.6 86.9 L161.0 87.1 L161.3 87.2 L161.6 87.4 L162.0 87.5 L162.3 87.6 L162.6 87.6 L163.0 87.7 L163.3 87.7 L163.6 87.7 L164.0 87.7 L164.3 87.7 L164.6 87.6 L165.0 87.5 L165.3 87.4 L165.6 87.3 L166.0 87.2 L166.3 87.0 L166.7 86.9 L167.0 86.7 L167.3 86.4 L167.7 86.2 L168.0 86.0 L168.3 85.7 L168.7 85.4 L169.0 85.1 L169.3 84.8 L169.7 84.4 L170.0 84.0 L170.3 83.7 L170.7 83.3 L171.0 82.8 L171.3 82.4 L171.7 81.9 L172.0 81.5 L172.3 81.0 L172.7 80.5 L173.0 80.0 L173.4 79.4 L173.7 78.9 L174.0 78.3 L174.4 77.7 L174.7 77.1 L175.0 76.5 L175.4 75.9 L175.7 75.3 L176.0 74.6 L176.4 73.9 L176.7 73.3 L177.0 72.6 L177.4 71.9 L177.7 71.2 L178.0 70.5 L178.4 69.7 L178.7 69.0 L179.0 68.2 L179.4 67.5 L179.7 66.7 L180.1 65.9 L180.4 65.2 L180.7 64.4 L181.1 63.6 L181.4 62.8 L181.7 62.0 L182.1 61.2 L182.4 60.3 L182.7 59.5 L183.1 58.7 L183.4 57.9 L183.7 57.0 L184.1 56.2 L184.4 55.4 L184.7 54.5 L185.1 53.7 L185.4 52.9 L185.7 52.0 L186.1 51.2 L186.4 50.4 L186.8 49.5 L187.1 48.7 L187.4 47.9 L187.8 47.0 L188.1 46.2 L188.4 45.4 L188.8 44.6 L189.1 43.8 L189.4 43.0 L189.8 42.2 L190.1 41.4 L190.4 40.6 L190.8 39.8 L191.1 39.0 L191.4 38.3 L191.8 37.5 L192.1 36.8 L192.4 36.1 L192.8 35.3 L193.1 34.6 L193.5 33.9 L193.8 33.2 L194.1 32.5 L194.5 31.9 L194.8 31.2 L195.1 30.6 L195.5 30.0 L195.8 29.3 L196.1 28.7 L196.5 28.2 L196.8 27.6 L197.1 27.0 L197.5 26.5 L197.8 26.0 L198.1 25.4 L198.5 24.9 L198.8 24.5 L199.1 24.0 L199.5 23.6 L199.8 23.1 L200.2 22.7 L200.5 22.3 L200.8 22.0 L201.2 21.6 L201.5 21.3 L201.8 21.0 L202.2 20.7 L202.5 20.4 L202.8 20.1 L203.2 19.9 L203.5 19.6 L203.8 19.4 L204.2 19.3 L204.5 19.1 L204.8 19.0 L205.2 18.8 L205.5 18.7 L205.8 18.6 L206.2 18.6 L206.5 18.5 L206.9 18.5 L207.2 18.5 L207.5 18.5 L207.9 18.6 L208.2 18.6 L208.5 18.7 L208.9 18.8 L209.2 18.9 L209.5 19.1 L209.9 19.2 L210.2 19.4 L210.5 19.6 L210.9 19.8 L211.2 20.1 L211.5 20.3 L211.9 20.6 L212.2 20.9 L212.5 21.2 L212.9 21.5 L213.2 21.9 L213.6 22.3 L213.9 22.6 L214.2 23.0 L214.6 23.5 L214.9 23.9 L215.2 24.4 L215.6 24.8 L215.9 25.3 L216.2 25.8 L216.6 26.4 L216.9 26.9 L217.2 27.5 L217.6 28.0 L217.9 28.6 L218.2 29.2 L218.6 29.8 L218.9 30.5 L219.2 31.1 L219.6 31.7 L219.9 32.4 L220.3 33.1 L220.6 33.8 L220.9 34.5 L221.3 35.2 L221.6 35.9 L221.9 36.6 L222.3 37.4 L222.6 38.1 L222.9 38.9 L223.3 39.7 L223.6 40.4 L223.9 41.2 L224.3 42.0 L224.6 42.8 L224.9 43.6 L225.3 44.4 L225.6 45.2 L225.9 46.0 L226.3 46.9 L226.6 47.7 L227.0 48.5 L227.3 49.3 L227.6 50.2 L228.0 51.0 L228.3 51.9 L228.6 52.7 L229.0 53.5 L229.3 54.4 L229.6 55.2 L230.0 56.0 L230.3 56.9 L230.6 57.7 L231.0 58.5 L231.3 59.4 L231.6 60.2 L232.0 61.0 L232.3 61.8 L232.6 62.6 L233.0 63.4 L233.3 64.2 L233.7 65.0 L234.0 65.8 L234.3 66.6 L234.7 67.3 L235.0 68.1 L235.3 68.8 L235.7 69.6 L236.0 70.3 L236.3 71.0 L236.7 71.7 L237.0 72.4 L237.3 73.1 L237.7 73.8 L238.0 74.5 L238.3 75.1 L238.7 75.8 L239.0 76.4 L239.3 77.0 L239.7 77.6 L240.0 78.2 L240.4 78.8 L240.7 79.3 L241.0 79.8 L241.4 80.4 L241.7 80.9 L242.0 81.4 L242.4 81.8 L242.7 82.3 L243.0 82.7 L243.4 83.2 L243.7 83.6 L244.0 84.0 L244.4 84.3 L244.7 84.7 L245.0 85.0 L245.4 85.3 L245.7 85.6 L246.0 85.9 L246.4 86.2 L246.7 86.4 L247.1 86.6 L247.4 86.8 L247.7 87.0 L248.1 87.2 L248.4 87.3 L248.7 87.4 L249.1 87.5 L249.4 87.6 L249.7 87.6 L250.1 87.7 L250.4 87.7 L250.7 87.7 L251.1 87.7 L251.4 87.6 L251.7 87.6 L252.1 87.5 L252.4 87.4 L252.7 87.3 L253.1 87.1 L253.4 87.0 L253.8 86.8 L254.1 86.6 L254.4 86.3 L254.8 86.1 L255.1 85.8 L255.4 85.6 L255.8 85.3 L256.1 84.9 L256.4 84.6 L256.8 84.3 L257.1 83.9 L257.4 83.5 L257.8 83.1 L258.1 82.7 L258.4 82.2 L258.8 81.7 L259.1 81.3 L259.4 80.8 L259.8 80.3 L260.1 79.7 L260.5 79.2 L260.8 78.6 L261.1 78.1 L261.5 77.5 L261.8 76.9 L262.1 76.3 L262.5 75.6 L262.8 75.0 L263.1 74.3 L263.5 73.7 L263.8 73.0 L264.1 72.3 L264.5 71.6 L264.8 70.9 L265.1 70.2 L265.5 69.4 L265.8 68.7 L266.1 67.9 L266.5 67.2 L266.8 66.4 L267.2 65.6 L267.5 64.8 L267.8 64.0 L268.2 63.3 L268.5 62.4 L268.8 61.6 L269.2 60.8 L269.5 60.0 L269.8 59.2 L270.2 58.4 L270.5 57.5 L270.8 56.7 L271.2 55.9 L271.5 55.0 L271.8 54.2 L272.2 53.4 L272.5 52.5 L272.8 51.7 L273.2 50.8 L273.5 50.0 L273.9 49.2 L274.2 48.3 L274.5 47.5 L274.9 46.7 L275.2 45.9 L275.5 45.1 L275.9 44.2 L276.2 43.4 L276.5 42.6 L276.9 41.8 L277.2 41.1 L277.5 40.3 L277.9 39.5 L278.2 38.7 L278.5 38.0 L278.9 37.2 L279.2 36.5 L279.5 35.8 L279.9 35.0 L280.2 34.3 L280.6 33.6 L280.9 32.9 L281.2 32.3 L281.6 31.6 L281.9 31.0 L282.2 30.3 L282.6 29.7 L282.9 29.1 L283.2 28.5 L283.6 27.9 L283.9 27.3 L284.2 26.8 L284.6 26.3 L284.9 25.7 L285.2 25.2 L285.6 24.7 L285.9 24.3 L286.2 23.8 L286.6 23.4 L286.9 23.0 L287.3 22.6 L287.6 22.2 L287.9 21.8 L288.3 21.5 L288.6 21.1 L288.9 20.8 L289.3 20.5 L289.6 20.3 L289.9 20.0 L290.3 19.8 L290.6 19.6 L290.9 19.4 L291.3 19.2 L291.6 19.0 L291.9 18.9 L292.3 18.8 L292.6 18.7 L292.9 18.6 L293.3 18.6 L293.6 18.5 L294.0 18.5 L294.3 18.5 L294.6 18.5 L295.0 18.6 L295.3 18.7 L295.6 18.7 L296.0 18.9 L296.3 19.0 L296.6 19.1 L297.0 19.3 L297.3 19.5 L297.6 19.7 L298.0 19.9 L298.3 20.2 L298.6 20.4 L299.0 20.7 L299.3 21.0 L299.6 21.3 L300.0 21.7 L300.3 22.0 L300.7 22.4 L301.0 22.8 L301.3 23.2 L301.7 23.7 L302.0 24.1 L302.3 24.6 L302.7 25.0 L303.0 25.5 L303.3 26.1 L303.7 26.6 L304.0 27.1 L304.3 27.7 L304.7 28.3 L305.0 28.9 L305.3 29.5 L305.7 30.1 L306.0 30.7 L306.3 31.4 L306.7 32.0 L307.0 32.7 L307.4 33.4 L307.7 34.1 L308.0 34.8 L308.4 35.5 L308.7 36.2 L309.0 36.9 L309.4 37.7 L309.7 38.4 L310.0 39.2 L310.4 40.0 L310.7 40.8 L311.0 41.5 L311.4 42.3 L311.7 43.1 L312.0 43.9 L312.4 44.7 L312.7 45.6 L313.0 46.4 L313.4 47.2 L313.7 48.0 L314.1 48.9 L314.4 49.7 L314.7 50.5 L315.1 51.4 L315.4 52.2 L315.7 53.0 L316.1 53.9 L316.4 54.7 L316.7 55.5 L317.1 56.4 L317.4 57.2 L317.7 58.0 L318.1 58.9 L318.4 59.7 L318.7 60.5 L319.1 61.3 L319.4 62.1 L319.7 62.9 L320.1 63.7 L320.4 64.5 L320.8 65.3 L321.1 66.1 L321.4 66.9 L321.8 67.6 L322.1 68.4 L322.4 69.1 L322.8 69.9 L323.1 70.6 L323.4 71.3 L323.8 72.0 L324.1 72.7 L324.4 73.4 L324.8 74.1 L325.1 74.7 L325.4 75.4 L325.8 76.0 L326.1 76.6 L326.4 77.3 L326.8 77.8 L327.1 78.4 L327.5 79.0 L327.8 79.5 L328.1 80.1 L328.5 80.6 L328.8 81.1 L329.1 81.6 L329.5 82.0 L329.8 82.5 L330.1 82.9 L330.5 83.3 L330.8 83.7 L331.1 84.1 L331.5 84.5 L331.8 84.8 L332.1 85.1 L332.5 85.5 L332.8 85.7 L333.1 86.0 L333.5 86.3 L333.8 86.5 L334.2 86.7 L334.5 86.9 L334.8 87.1 L335.2 87.2 L335.5 87.3 L335.8 87.5 L336.2 87.5 L336.5 87.6 L336.8 87.7 L337.2 87.7 L337.5 87.7 L337.8 87.7 L338.2 87.7 L338.5 87.6 L338.8 87.5 L339.2 87.4 L339.5 87.3 L339.8 87.2 L340.2 87.1 L340.5 86.9 L340.9 86.7 L341.2 86.5 L341.5 86.3 L341.9 86.0 L342.2 85.7 L342.5 85.4 L342.9 85.1 L343.2 84.8 L343.5 84.5 L343.9 84.1 L344.2 83.7 L344.5 83.3 L344.9 82.9 L345.2 82.5 L345.5 82.0 L345.9 81.6 L346.2 81.1 L346.5 80.6 L346.9 80.0 L347.2 79.5 L347.6 79.0 L347.9 78.4 L348.2 77.8 L348.6 77.2 L348.9 76.6 L349.2 76.0 L349.6 75.4 L349.9 74.7 L350.2 74.1 L350.6 73.4 L350.9 72.7 L351.2 72.0 L351.6 71.3 L351.9 70.6 L352.2 69.9 L352.6 69.1 L352.9 68.4 L353.2 67.6 L353.6 66.9 L353.9 66.1 L354.3 65.3 L354.6 64.5 L354.9 63.7 L355.3 62.9 L355.6 62.1 L355.9 61.3 L356.3 60.5 L356.6 59.7 L356.9 58.8 L357.3 58.0 L357.6 57.2 L357.9 56.4 L358.3 55.5 L358.6 54.7 L358.9 53.8 L359.3 53.0 L359.6 52.2 L359.9 51.3 L360.3 50.5 L360.6 49.7 L361.0 48.8 L361.3 48.0 L361.6 47.2 L362.0 46.4 L362.3 45.5 L362.6 44.7 L363.0 43.9 L363.3 43.1 L363.6 42.3 L364.0 41.5 L364.3 40.7 L364.6 39.9 L365.0 39.2 L365.3 38.4 L365.6 37.7 L366.0 36.9 L366.3 36.2 L366.6 35.5 L367.0 34.7 L367.3 34.0 L367.7 33.3 L368.0 32.7 L368.3 32.0 L368.7 31.3 L369.0 30.7 L369.3 30.1 L369.7 29.4 L370.0 28.8 L370.3 28.2 L370.7 27.7 L371.0 27.1 L371.3 26.6 L371.7 26.0 L372.0 25.5 L372.3 25.0 L372.7 24.5 L373.0 24.1 L373.3 23.6 L373.7 23.2 L374.0 22.8 L374.4 22.4 L374.7 22.0 L375.0 21.7 L375.4 21.3 L375.7 21.0 L376.0 20.7 L376.4 20.4 L376.7 20.2 L377.0 19.9 L377.4 19.7 L377.7 19.5 L378.0 19.3 L378.4 19.1 L378.7 19.0 L379.0 18.8 L379.4 18.7 L379.7 18.7 L380.0 18.6 L380.4 18.5 L380.7 18.5 L381.1 18.5 L381.4 18.5 L381.7 18.6 L382.1 18.6 L382.4 18.7 L382.7 18.8 L383.1 18.9 L383.4 19.0 L383.7 19.2 L384.1 19.4 L384.4 19.6 L384.7 19.8 L385.1 20.0 L385.4 20.3 L385.7 20.5 L386.1 20.8 L386.4 21.1 L386.7 21.5 L387.1 21.8 L387.4 22.2 L387.8 22.6 L388.1 23.0 L388.4 23.4 L388.8 23.8 L389.1 24.3 L389.4 24.8 L389.8 25.3 L390.1 25.8 L390.4 26.3 L390.8 26.8 L391.1 27.4 L391.4 27.9 L391.8 28.5 L392.1 29.1 L392.4 29.7 L392.8 30.3 L393.1 31.0 L393.4 31.6 L393.8 32.3 L394.1 33.0 L394.5 33.7 L394.8 34.4 L395.1 35.1 L395.5 35.8 L395.8 36.5 L396.1 37.3 L396.5 38.0 L396.8 38.8 L397.1 39.5 L397.5 40.3 L397.8 41.1 L398.1 41.9 L398.5 42.7 L398.8 43.5 L399.1 44.3 L399.5 45.1 L399.8 45.9 L400.1 46.7 L400.5 47.5 L400.8 48.4 L401.2 49.2 L401.5 50.0 L401.8 50.9 L402.2 51.7 L402.5 52.5 L402.8 53.4 L403.2 54.2 L403.5 55.1 L403.8 55.9 L404.2 56.7 L404.5 57.6 L404.8 58.4 L405.2 59.2 L405.5 60.0 L405.8 60.9 L406.2 61.7 L406.5 62.5 L406.8 63.3 L407.2 64.1 L407.5 64.9 L407.9 65.7 L408.2 66.4 L408.5 67.2 L408.9 68.0 L409.2 68.7 L409.5 69.5 L409.9 70.2 L410.2 70.9 L410.5 71.6 L410.9 72.3 L411.2 73.0 L411.5 73.7 L411.9 74.4 L412.2 75.0 L412.5 75.7 L412.9 76.3 L413.2 76.9 L413.5 77.5 L413.9 78.1 L414.2 78.7 L414.6 79.2 L414.9 79.8 L415.2 80.3 L415.6 80.8 L415.9 81.3 L416.2 81.8 L416.6 82.2 L416.9 82.7 L417.2 83.1 L417.6 83.5 L417.9 83.9 L418.2 84.3 L418.6 84.6 L418.9 85.0 L419.2 85.3 L419.6 85.6 L419.9 85.9 L420.2 86.1 L420.6 86.4 L420.9 86.6 L421.3 86.8 L421.6 87.0 L421.9 87.1 L422.3 87.3 L422.6 87.4 L422.9 87.5 L423.3 87.6 L423.6 87.6 L423.9 87.7 L424.3 87.7 L424.6 87.7 L424.9 87.7 L425.3 87.6 L425.6 87.6 L425.9 87.5 L426.3 87.4 L426.6 87.3 L426.9 87.1 L427.3 87.0 L427.6 86.8 L428.0 86.6 L428.3 86.4 L428.6 86.1 L429.0 85.9 L429.3 85.6 L429.6 85.3 L430.0 85.0 L430.3 84.7 L430.6 84.3 L431.0 83.9 L431.3 83.6 L431.6 83.2 L432.0 82.7 L432.3 82.3 L432.6 81.8 L433.0 81.4 L433.3 80.9 L433.6 80.4 L434.0 79.8 L434.3 79.3 L434.7 78.7 L435.0 78.2 L435.3 77.6 L435.7 77.0 L436.0 76.4 L436.3 75.7 L436.7 75.1 L437.0 74.4 L437.3 73.8 L437.7 73.1 L438.0 72.4 L438.3 71.7 L438.7 71.0 L439.0 70.3 L439.3 69.6 L439.7 68.8 L440.0 68.1 L440.3 67.3 L440.7 66.5 L441.0 65.8 L441.4 65.0 L441.7 64.2 L442.0 63.4 L442.4 62.6 L442.7 61.8 L443.0 61.0 L443.4 60.1 L443.7 59.3 L444.0 58.5 L444.4 57.7 L444.7 56.8 L445.0 56.0 L445.4 55.2 L445.7 54.3 L446.0 53.5 L446.4 52.7 L446.7 51.8 L447.0 51.0 L447.4 50.1 L447.7 49.3 L448.1 48.5 L448.4 47.7 L448.7 46.8 L449.1 46.0 L449.4 45.2 L449.7 44.4 L450.1 43.6 L450.4 42.8 L450.7 42.0 L451.1 41.2 L451.4 40.4 L451.7 39.6 L452.1 38.9 L452.4 38.1 L452.7 37.4 L453.1 36.6 L453.4 35.9 L453.7 35.2 L454.1 34.4 L454.4 33.7 L454.8 33.1 L455.1 32.4 L455.4 31.7 L455.8 31.1 L456.1 30.4 L456.4 29.8 L456.8 29.2 L457.1 28.6 L457.4 28.0 L457.8 27.4 L458.1 26.9 L458.4 26.3 L458.8 25.8 L459.1 25.3 L459.4 24.8 L459.8 24.4 L460.1 23.9 L460.4 23.5 L460.8 23.0 L461.1 22.6 L461.5 22.2 L461.8 21.9 L462.1 21.5 L462.5 21.2 L462.8 20.9 L463.1 20.6 L463.5 20.3 L463.8 20.0 L464.1 19.8 L464.5 19.6 L464.8 19.4 L465.1 19.2 L465.5 19.1 L465.8 18.9 L466.1 18.8 L466.5 18.7 L466.8 18.6 L467.1 18.6 L467.5 18.5 L467.8 18.5 L468.2 18.5 L468.5 18.5 L468.8 18.6 L469.2 18.6 L469.5 18.7 L469.8 18.8 L470.2 19.0 L470.5 19.1 L470.8 19.3 L471.2 19.4 L471.5 19.7 L471.8 19.9 L472.2 20.1 L472.5 20.4 L472.8 20.7 L473.2 21.0 L473.5 21.3 L473.8 21.6 L474.2 22.0 L474.5 22.3 L474.9 22.7 L475.2 23.2 L475.5 23.6 L475.9 24.0 L476.2 24.5 L476.5 25.0 L476.9 25.5 L477.2 26.0 L477.5 26.5 L477.9 27.0 L478.2 27.6 L478.5 28.2 L478.9 28.8 L479.2 29.4 L479.5 30.0 L479.9 30.6 L480.2 31.2 L480.5 31.9 L480.9 32.6 L481.2 33.3 L481.6 33.9 L481.9 34.6 L482.2 35.4 L482.6 36.1 L482.9 36.8 L483.2 37.6 L483.6 38.3 L483.9 39.1 L484.2 39.8 L484.6 40.6 L484.9 41.4 L485.2 42.2 L485.6 43.0 L485.9 43.8 L486.2 44.6 L486.6 45.4 L486.9 46.2 L487.2 47.1 L487.6 47.9 L487.9 48.7 L488.3 49.6 L488.6 50.4 L488.9 51.2 L489.3 52.1 L489.6 52.9 L489.9 53.7 L490.3 54.6 L490.6 55.4 L490.9 56.2 L491.3 57.1 L491.6 57.9 L491.9 58.7 L492.3 59.6 L492.6 60.4 L492.9 61.2 L493.3 62.0 L493.6 62.8 L493.9 63.6 L494.3 64.4 L494.6 65.2 L495.0 66.0 L495.3 66.7 L495.6 67.5 L496.0 68.3 L496.3 69.0 L496.6 69.8 L497.0 70.5 L497.3 71.2 L497.6 71.9 L498.0 72.6 L498.3 73.3 L498.6 74.0 L499.0 74.6 L499.3 75.3 L499.6 75.9 L500.0 76.5 L500.3 77.2 L500.6 77.7 L501.0 78.3 L501.3 78.9 L501.7 79.4 L502.0 80.0 L502.3 80.5 L502.7 81.0 L503.0 81.5 L503.3 82.0 L503.7 82.4 L504.0 82.8 L504.3 83.3 L504.7 83.7 L505.0 84.1 L505.3 84.4 L505.7 84.8 L506.0 85.1 L506.3 85.4 L506.7 85.7 L507.0 86.0 L507.3 86.2 L507.7 86.5 L508.0 86.7 L508.3 86.9 L508.7 87.0 L509.0 87.2 L509.4 87.3 L509.7 87.4 L510.0 87.5 L510.4 87.6 L510.7 87.7 L511.0 87.7 L511.4 87.7 L511.7 87.7 L512.0 87.7 L512.4 87.6 L512.7 87.6 L513.0 87.5 L513.4 87.4 L513.7 87.2 L514.0 87.1 L514.4 86.9 L514.7 86.7 L515.0 86.5 L515.4 86.3 L515.7 86.0 L516.1 85.8 L516.4 85.5 L516.7 85.2 L517.1 84.9 L517.4 84.5 L517.7 84.2 L518.1 83.8 L518.4 83.4 L518.7 83.0 L519.1 82.5 L519.4 82.1 L519.7 81.6 L520.1 81.2 L520.4 80.7 L520.7 80.1 L521.1 79.6 L521.4 79.1 L521.7 78.5 L522.1 77.9 L522.4 77.3 L522.8 76.7 L523.1 76.1 L523.4 75.5 L523.8 74.8 L524.1 74.2 L524.4 73.5 L524.8 72.8 L525.1 72.1 L525.4 71.4 L525.8 70.7 L526.1 70.0 L526.4 69.2 L526.8 68.5 L527.1 67.7 L527.4 67.0 L527.8 66.2 L528.1 65.4 L528.4 64.6 L528.8 63.9 L529.1 63.1 L529.5 62.2 L529.8 61.4 L530.1 60.6 L530.5 59.8 L530.8 59.0 L531.1 58.2 L531.5 57.3 L531.8 56.5 L532.1 55.7 L532.5 54.8 L532.8 54.0 L533.1 53.1 L533.5 52.3 L533.8 51.5 L534.1 50.6 L534.5 49.8 L534.8 49.0 L535.1 48.1 L535.5 47.3 L535.8 46.5 L536.2 45.7 L536.5 44.9 L536.8 44.0 L537.2 43.2 L537.5 42.4 L537.8 41.6 L538.2 40.9 L538.5 40.1 L538.8 39.3 L539.2 38.5 L539.5 37.8 L539.8 37.0 L540.2 36.3 L540.5 35.6 L540.8 34.9 L541.2 34.2 L541.5 33.5 L541.8 32.8 L542.2 32.1 L542.5 31.4 L542.9 30.8 L543.2 30.2 L543.5 29.5 L543.9 28.9 L544.2 28.3 L544.5 27.8 L544.9 27.2 L545.2 26.7 L545.5 26.1 L545.9 25.6 L546.2 25.1 L546.5 24.6 L546.9 24.2 L547.2 23.7 L547.5 23.3 L547.9 22.9 L548.2 22.5 L548.5 22.1 L548.9 21.7 L549.2 21.4 L549.6 21.1 L549.9 20.8 L550.2 20.5 L550.6 20.2 L550.9 19.9 L551.2 19.7 L551.6 19.5 L551.9 19.3 L552.2 19.1 L552.6 19.0 L552.9 18.9 L553.2 18.8 L553.6 18.7 L553.9 18.6 L554.2 18.6 L554.6 18.5 L554.9 18.5 L555.2 18.5 L555.6 18.6 L555.9 18.6 L556.3 18.7 L556.6 18.8 L556.9 18.9 L557.3 19.0 L557.6 19.2 L557.9 19.3 L558.3 19.5 L558.6 19.7 L558.9 20.0 L559.3 20.2 L559.6 20.5 L559.9 20.8 L560.3 21.1 L560.6 21.4 L560.9 21.8 L561.3 22.1 L561.6 22.5 L561.9 22.9 L562.3 23.3 L562.6 23.8 L563.0 24.2 L563.3 24.7 L563.6 25.2 L564.0 25.7 L564.3 26.2 L564.6 26.7 L565.0 27.3 L565.3 27.8 L565.6 28.4 L566.0 29.0 L566.3 29.6 L566.6 30.2 L567.0 30.9 L567.3 31.5 L567.6 32.2 L568.0 32.9 L568.3 33.5 L568.6 34.2 L569.0 34.9 L569.3 35.7 L569.7 36.4 L570.0 37.1 L570.3 37.9 L570.7 38.6 L571.0 39.4 L571.3 40.2 L571.7 40.9 L572.0 41.7 L572.3 42.5 L572.7 43.3 L573.0 44.1 L573.3 44.9 L573.7 45.8 L574.0 46.6 L574.3 47.4 L574.7 48.2 L575.0 49.1 L575.3 49.9 L575.7 50.7 L576.0 51.6 L576.4 52.4 L576.7 53.2 L577.0 54.1 L577.4 54.9 L577.7 55.8 L578.0 56.6 L578.4 57.4 L578.7 58.2 L579.0 59.1 L579.4 59.9 L579.7 60.7 L580.0 61.5 L580.4 62.3 L580.7 63.1 L581.0 63.9 L581.4 64.7 L581.7 65.5 L582.0 66.3 L582.4 67.1 L582.7 67.8 L583.1 68.6 L583.4 69.3 L583.7 70.1 L584.1 70.8 L584.4 71.5 L584.7 72.2 L585.1 72.9 L585.4 73.6 L585.7 74.2 L586.1 74.9 L586.4 75.5 L586.7 76.2 L587.1 76.8 L587.4 77.4 L587.7 78.0 L588.1 78.6 L588.4 79.1 L588.7 79.7 L589.1 80.2 L589.4 80.7 L589.8 81.2 L590.1 81.7 L590.4 82.1 L590.8 82.6 L591.1 83.0 L591.4 83.4 L591.8 83.8 L592.1 84.2 L592.4 84.6 L592.8 84.9 L593.1 85.2 L593.4 85.5 L593.8 85.8 L594.1 86.1 L594.4 86.3 L594.8 86.5 L595.1 86.7 L595.4 86.9 L595.8 87.1 L596.1 87.2 L596.5 87.4 L596.8 87.5 L597.1 87.6 L597.5 87.6 L597.8 87.7 L598.1 87.7 L598.5 87.7 L598.8 87.7 L599.1 87.7 L599.5 87.6 L599.8 87.5 L600.1 87.4 L600.5 87.3 L600.8 87.2 L601.1 87.0 L601.5 86.8 L601.8 86.6 L602.1 86.4 L602.5 86.2 L602.8 85.9 L603.2 85.7 L603.5 85.4 L603.8 85.1 L604.2 84.7 L604.5 84.4 L604.8 84.0 L605.2 83.6 L605.5 83.2 L605.8 82.8 L606.2 82.4 L606.5 81.9 L606.8 81.4 L607.2 80.9 L607.5 80.4 L607.8 79.9 L608.2 79.4 L608.5 78.8 L608.8 78.3 L609.2 77.7 L609.5 77.1 L609.9 76.5 L610.2 75.8 L610.5 75.2 L610.9 74.6 L611.2 73.9 L611.5 73.2 L611.9 72.5 L612.2 71.8 L612.5 71.1 L612.9 70.4 L613.2 69.7 L613.5 68.9 L613.9 68.2 L614.2 67.4 L614.5 66.7 L614.9 65.9 L615.2 65.1 L615.5 64.3 L615.9 63.5 L616.2 62.7 L616.6 61.9 L616.9 61.1 L617.2 60.3 L617.6 59.5 L617.9 58.6 L618.2 57.8 L618.6 57.0 L618.9 56.1 L619.2 55.3 L619.6 54.5 L619.9 53.6 L620.2 52.8 L620.6 52.0 L620.9 51.1 L621.2 50.3 L621.6 49.5 L621.9 48.6 L622.2 47.8 L622.6 47.0 L622.9 46.1 L623.3 45.3 L623.6 44.5 L623.9 43.7 L624.3 42.9 L624.6 42.1 L624.9 41.3 L625.3 40.5 L625.6 39.8 L625.9 39.0 L626.3 38.2 L626.6 37.5 L626.9 36.7 L627.3 36.0 L627.6 35.3 L627.9 34.6 L628.3 33.9 L628.6 33.2 L628.9 32.5 L629.3 31.8 L629.6 31.2 L630.0 30.5 L630.3 29.9 L630.6 29.3 L631.0 28.7 L631.3 28.1 L631.6 27.5 L632.0 27.0 L632.3 26.4 L632.6 25.9 L633.0 25.4 L633.3 24.9 L633.6 24.4 L634.0 24.0 L634.3 23.5 L634.6 23.1 L635.0 22.7 L635.3 22.3 L635.6 21.9 L636.0 21.6 L636.3 21.2 L636.7 20.9 L637.0 20.6 L637.3 20.4 L637.7 20.1 L638.0 19.9 L638.3 19.6 L638.7 19.4 L639.0 19.2 L639.3 19.1 L639.7 18.9 L640.0 18.8 L640.3 18.7 L640.7 18.6 L641.0 18.6 L641.3 18.5 L641.7 18.5 L642.0 18.5 L642.3 18.5 L642.7 18.6 L643.0 18.6 L643.4 18.7 L643.7 18.8 L644.0 18.9 L644.4 19.1 L644.7 19.2 L645.0 19.4 L645.4 19.6 L645.7 19.8 L646.0 20.1 L646.4 20.3 L646.7 20.6 L647.0 20.9 L647.4 21.2 L647.7 21.6 L648.0 21.9 L648.4 22.3 L648.7 22.7 L649.0 23.1 L649.4 23.5 L649.7 23.9 L650.1 24.4 L650.4 24.9 L650.7 25.4 L651.1 25.9 L651.4 26.4 L651.7 26.9 L652.1 27.5 L652.4 28.1 L652.7 28.7 L653.1 29.3 L653.4 29.9 L653.7 30.5 L654.1 31.1 L654.4 31.8 L654.7 32.5 L655.1 33.1 L655.4 33.8 L655.7 34.5 L656.1 35.2 L656.4 36.0 L656.8 36.7 L657.1 37.4 L657.4 38.2 L657.8 38.9 L658.1 39.7 L658.4 40.5 L658.8 41.3 L659.1 42.1 L659.4 42.9 L659.8 43.7 L660.1 44.5 L660.4 45.3 L660.8 46.1 L661.1 46.9 L661.4 47.7 L661.8 48.6 L662.1 49.4 L662.4 50.2 L662.8 51.1 L663.1 51.9 L663.5 52.8 L663.8 53.6 L664.1 54.4 L664.5 55.3 L664.8 56.1 L665.1 56.9 L665.5 57.8 L665.8 58.6 L666.1 59.4 L666.5 60.2 L666.8 61.1 L667.1 61.9 L667.5 62.7 L667.8 63.5 L668.1 64.3 L668.5 65.1 L668.8 65.8 L669.1 66.6 L669.5 67.4 L669.8 68.1 L670.2 68.9 L670.5 69.6 L670.8 70.4 L671.2 71.1 L671.5 71.8 L671.8 72.5 L672.2 73.2 L672.5 73.9 L672.8 74.5 L673.2 75.2 L673.5 75.8 L673.8 76.4 L674.2 77.0 L674.5 77.6 L674.8 78.2 L675.2 78.8 L675.5 79.4 L675.8 79.9 L676.2 80.4 L676.5 80.9 L676.9 81.4 L677.2 81.9 L677.5 82.3 L677.9 82.8 L678.2 83.2 L678.5 83.6 L678.9 84.0 L679.2 84.4 L679.5 84.7 L679.9 85.0 L680.2 85.4 L680.5 85.6 L680.9 85.9 L681.2 86.2 L681.5 86.4 L681.9 86.6 L682.2 86.8 L682.5 87.0 L682.9 87.2 L683.2 87.3 L683.6 87.4 L683.9 87.5 L684.2 87.6 L684.6 87.6 L684.9 87.7 L685.2 87.7 L685.6 87.7 L685.9 87.7 L686.2 87.6 L686.6 87.6 L686.9 87.5 L687.2 87.4 L687.6 87.3 L687.9 87.1 L688.2 86.9 L688.6 86.8 L688.9 86.6 L689.2 86.3 L689.6 86.1 L689.9 85.8 L690.3 85.5 L690.6 85.2 L690.9 84.9 L691.3 84.6 L691.6 84.2 L691.9 83.9 L692.3 83.5 L692.6 83.0 L692.9 82.6 L693.3 82.2 L693.6 81.7 L693.9 81.2 L694.3 80.7 L694.6 80.2 L694.9 79.7 L695.3 79.2 L695.6 78.6 L695.9 78.0 L696.3 77.4 L696.6 76.8 L697.0 76.2 L697.3 75.6 L697.6 74.9 L698.0 74.3 L698.3 73.6 L698.6 72.9 L699.0 72.2 L699.3 71.5 L699.6 70.8 L700.0 70.1 L700.3 69.4 L700.6 68.6 L701.0 67.9 L701.3 67.1 L701.6 66.3 L702.0 65.6 L702.3 64.8 L702.6 64.0 L703.0 63.2 L703.3 62.4 L703.7 61.6 L704.0 60.8 L704.3 59.9 L704.7 59.1 L705.0 58.3 L705.3 57.5 L705.7 56.6 L706.0 55.8 L706.3 55.0 L706.7 54.1 L707.0 53.3 L707.3 52.5 L707.7 51.6 L708.0 50.8 L708.3 49.9 L708.7 49.1 L709.0 48.3 L709.3 47.5 L709.7 46.6 L710.0 45.8 L710.4 45.0 L710.7 44.2 L711.0 43.4 L711.4 42.6 L711.7 41.8 L712.0 41.0 L712.4 40.2 L712.7 39.4 L713.0 38.7 L713.4 37.9 L713.7 37.2 L714.0 36.4 L714.4 35.7 L714.7 35.0 L715.0 34.3 L715.4 33.6 L715.7 32.9 L716.0 32.2 L716.4 31.6 L716.7 30.9 L717.1 30.3 L717.4 29.7 L717.7 29.0 L718.1 28.4 L718.4 27.9 L718.7 27.3 L719.1 26.8 L719.4 26.2 L719.7 25.7 L720.1 25.2 L720.4 24.7 L720.7 24.2 L721.1 23.8 L721.4 23.4 L721.7 22.9 L722.1 22.5 L722.4 22.1 L722.7 21.8 L723.1 21.4 L723.4 21.1 L723.8 20.8 L724.1 20.5 L724.4 20.2 L724.8 20.0 L725.1 19.8 L725.4 19.5 L725.8 19.4 L726.1 19.2 L726.4 19.0 L726.8 18.9 L727.1 18.8 L727.4 18.7 L727.8 18.6 L728.1 18.6 L728.4 18.5 L728.8 18.5 L729.1 18.5 L729.4 18.5 L729.8 18.6 L730.1 18.7 L730.5 18.8 L730.8 18.9 L731.1 19.0 L731.5 19.1 L731.8 19.3 L732.1 19.5 L732.5 19.7 L732.8 19.9 L733.1 20.2 L733.5 20.4 L733.8 20.7 L734.1 21.0 L734.5 21.4 L734.8 21.7 L735.1 22.1 L735.5 22.4 L735.8 22.8 L736.1 23.3 L736.5 23.7 L736.8 24.1 L737.2 24.6 L737.5 25.1 L737.8 25.6 L738.2 26.1 L738.5 26.6 L738.8 27.2 L739.2 27.7 L739.5 28.3 L739.8 28.9 L740.2 29.5 L740.5 30.1 L740.8 30.8 L741.2 31.4 L741.5 32.1 L741.8 32.7 L742.2 33.4 L742.5 34.1 L742.8 34.8 L743.2 35.5 L743.5 36.3 L743.9 37.0 L744.2 37.7 L744.5 38.5 L744.9 39.3 L745.2 40.0 L745.5 40.8 L745.9 41.6 L746.2 42.4 L746.5 43.2 L746.9 44.0 L747.2 44.8 L747.5 45.6 L747.9 46.4 L748.2 47.3 L748.5 48.1 L748.9 48.9 L749.2 49.8 L749.5 50.6 L749.9 51.4 L750.2 52.3 L750.6 53.1 L750.9 53.9 L751.2 54.8 L751.6 55.6 L751.9 56.4 L752.2 57.3 L752.6 58.1 L752.9 58.9 L753.2 59.8 L753.6 60.6 L753.9 61.4 L754.2 62.2 L754.6 63.0 L754.9 63.8 L755.2 64.6 L755.6 65.4 L755.9 66.2 L756.2 66.9 L756.6 67.7 L756.9 68.5 L757.3 69.2 L757.6 69.9 L757.9 70.7 L758.3 71.4 L758.6 72.1 L758.9 72.8 L759.3 73.5 L759.6 74.1 L759.9 74.8 L760.3 75.4 L760.6 76.1 L760.9 76.7 L761.3 77.3 L761.6 77.9 L761.9 78.5 L762.3 79.0 L762.6 79.6 L762.9 80.1 L763.3 80.6 L763.6 81.1 L764.0 81.6 L764.3 82.1 L764.6 82.5 L765.0 83.0 L765.3 83.4 L765.6 83.8 L766.0 84.1 L766.3 84.5 L766.6 84.8 L767.0 85.2 L767.3 85.5 L767.6 85.8 L768.0 86.0 L768.3 86.3 L768.6 86.5 L769.0 86.7 L769.3 86.9 L769.6 87.1 L770.0 87.2 L770.3 87.4 L770.7 87.5 L771.0 87.5 L771.3 87.6 L771.7 87.7 L772.0 87.7 L772.3 87.7 L772.7 87.7 L773.0 87.7 L773.3 87.6 L773.7 87.5 L774.0 87.4 L774.3 87.3 L774.7 87.2 L775.0 87.0 L775.3 86.9 L775.7 86.7 L776.0 86.5 L776.3 86.2 L776.7 86.0 L777.0 85.7 L777.4 85.4 L777.7 85.1 L778.0 84.8 L778.4 84.4 L778.7 84.1 L779.0 83.7 L779.4 83.3 L779.7 82.9 L780.0 82.4 L780.4 82.0 L780.7 81.5 L781.0 81.0 L781.4 80.5 L781.7 80.0 L782.0 79.5 L782.4 78.9 L782.7 78.4 L783.0 77.8 L783.4 77.2 L783.7 76.6 L784.1 76.0 L784.4 75.3 L784.7 74.7 L785.1 74.0 L785.4 73.3 L785.7 72.7 L786.1 72.0 L786.4 71.2 L786.7 70.5 L787.1 69.8 L787.4 69.1 L787.7 68.3 L788.1 67.6 L788.4 66.8 L788.7 66.0 L789.1 65.2 L789.4 64.5 L789.7 63.7 L790.1 62.9 L790.4 62.1 L790.8 61.2 L791.1 60.4 L791.4 59.6 L791.8 58.8 L792.1 58.0 L792.4 57.1 L792.8 56.3 L793.1 55.5 L793.4 54.6 L793.8 53.8 L794.1 52.9 L794.4 52.1 L794.8 51.3 L795.1 50.4 L795.4 49.6 L795.8 48.8 L796.1 47.9 L796.4 47.1 L796.8 46.3 L797.1 45.5 L797.5 44.7 L797.8 43.8 L798.1 43.0 L798.5 42.2 L798.8 41.5 L799.1 40.7 L799.5 39.9 L799.8 39.1 L800.1 38.4 L800.5 37.6 L800.8 36.9 L801.1 36.1 L801.5 35.4 L801.8 34.7 L802.1 34.0 L802.5 33.3 L802.8 32.6 L803.1 31.9 L803.5 31.3 L803.8 30.6 L804.2 30.0 L804.5 29.4 L804.8 28.8 L805.2 28.2 L805.5 27.6 L805.8 27.1 L806.2 26.5 L806.5 26.0 L806.8 25.5 L807.2 25.0 L807.5 24.5 L807.8 24.0 L808.2 23.6 L808.5 23.2 L808.8 22.8 L809.2 22.4 L809.5 22.0 L809.8 21.6 L810.2 21.3 L810.5 21.0 L810.9 20.7 L811.2 20.4 L811.5 20.1 L811.9 19.9 L812.2 19.7 L812.5 19.5 L812.9 19.3 L813.2 19.1 L813.5 19.0 L813.9 18.8 L814.2 18.7 L814.5 18.7 L814.9 18.6 L815.2 18.5 L815.5 18.5 L815.9 18.5 L816.2 18.5 L816.5 18.6 L816.9 18.6 L817.2 18.7 L817.6 18.8 L817.9 18.9 L818.2 19.1 L818.6 19.2 L818.9 19.4 L819.2 19.6 L819.6 19.8 L819.9 20.0 L820.2 20.3 L820.6 20.6 L820.9 20.9 L821.2 21.2 L821.6 21.5 L821.9 21.9 L822.2 22.2 L822.6 22.6 L822.9 23.0 L823.2 23.4 L823.6 23.9 L823.9 24.3 L824.3 24.8 L824.6 25.3 L824.9 25.8 L825.3 26.3 L825.6 26.9 L825.9 27.4 L826.3 28.0 L826.6 28.6 L826.9 29.2 L827.3 29.8 L827.6 30.4 L827.9 31.0 L828.3 31.7 L828.6 32.3 L828.9 33.0 L829.3 33.7 L829.6 34.4 L829.9 35.1 L830.3 35.8 L830.6 36.6 L831.0 37.3 L831.3 38.1 L831.6 38.8 L832.0 39.6 L832.3 40.4 L832.6 41.1 L833.0 41.9 L833.3 42.7 L833.6 43.5 L834.0 44.3 L834.3 45.1 L834.6 46.0 L835.0 46.8 L835.3 47.6 L835.6 48.4 L836.0 49.3 L836.3 50.1 L836.6 50.9 L837.0 51.8 L837.3 52.6 L837.7 53.4 L838.0 54.3 L838.3 55.1 L838.7 56.0 L839.0 56.8 L839.3 57.6 L839.7 58.5 L840.0 59.3 L840.3 60.1 L840.7 60.9 L841.0 61.7 L841.3 62.5 L841.7 63.3 L842.0 64.1 L842.3 64.9 L842.7 65.7 L843.0 66.5 L843.3 67.3 L843.7 68.0 L844.0 68.8 L844.4 69.5 L844.7 70.2 L845.0 71.0 L845.4 71.7 L845.7 72.4 L846.0 73.1 L846.4 73.7 L846.7 74.4 L847.0 75.1 L847.4 75.7 L847.7 76.3 L848.0 76.9 L848.4 77.5 L848.7 78.1 L849.0 78.7 L849.4 79.3 L849.7 79.8 L850.0 80.3 L850.4 80.8 L850.7 81.3 L851.1 81.8 L851.4 82.3 L851.7 82.7 L852.1 83.1 L852.4 83.5 L852.7 83.9 L853.1 84.3 L853.4 84.6 L853.7 85.0 L854.1 85.3 L854.4 85.6 L854.7 85.9 L855.1 86.1 L855.4 86.4 L855.7 86.6 L856.1 86.8 L856.4 87.0 L856.7 87.1 L857.1 87.3 L857.4 87.4 L857.8 87.5 L858.1 87.6 L858.4 87.6 L858.8 87.7 L859.1 87.7 L859.4 87.7 L859.8 87.7 L860.1 87.6 L860.4 87.6 L860.8 87.5 L861.1 87.4 L861.4 87.3 L861.8 87.1 L862.1 87.0 L862.4 86.8 L862.8 86.6 L863.1 86.4 L863.4 86.1 L863.8 85.9 L864.1 85.6 L864.5 85.3 L864.8 85.0 L865.1 84.6 L865.5 84.3 L865.8 83.9 L866.1 83.5 L866.5 83.1 L866.8 82.7 L867.1 82.3 L867.5 81.8 L867.8 81.3 L868.1 80.8 L868.5 80.3 L868.8 79.8 L869.1 79.2 L869.5 78.7 L869.8 78.1 L870.1 77.5 L870.5 76.9 L870.8 76.3 L871.2 75.7 L871.5 75.1 L871.8 74.4 L872.2 73.7 L872.5 73.1" fill="none" stroke="#ffff00" stroke-width="1.0" stroke-linejoin="round" shape-rendering="crispEdges"/><path d="M1.5 122.0 L1.8 121.6 L2.0 120.7 L2.3 121.2 L2.5 120.8 L2.8 121.3 L3.0 122.1 L3.3 122.2 L3.5 123.5 L3.8 123.9 L4.1 125.3 L4.3 126.3 L4.6 126.9 L4.8 127.3 L5.1 129.1 L5.3 129.8 L5.6 130.0 L5.9 130.1 L6.1 131.0 L6.4 131.5 L6.6 130.8 L6.9 131.9 L7.1 130.7 L7.4 131.0 L7.6 130.8 L7.9 130.2 L8.2 129.3 L8.4 128.0 L8.7 128.1 L8.9 126.8 L9.2 126.1 L9.4 125.8 L9.7 124.9 L10.0 125.0 L10.2 124.6 L10.5 124.2 L10.7 123.4 L11.0 123.6 L11.2 123.8 L11.5 123.6 L11.7 124.1 L12.0 124.6 L12.3 124.4 L12.5 125.0 L12.8 126.1 L13.0 126.2 L13.3 126.8 L13.5 126.9 L13.8 127.6 L14.1 128.6 L14.3 128.1 L14.6 129.5 L14.8 129.4 L15.1 129.1 L15.3 130.0 L15.6 129.5 L15.8 130.0 L16.1 129.0 L16.4 128.6 L16.6 128.5 L16.9 127.8 L17.1 128.0 L17.4 127.1 L17.6 126.8 L17.9 126.3 L18.2 126.1 L18.4 125.2 L18.7 124.7 L18.9 124.9 L19.2 124.5 L19.4 125.0 L19.7 124.2 L19.9 124.2 L20.2 123.9 L20.5 124.2 L20.7 125.1 L21.0 125.3 L21.2 125.3 L21.5 126.5 L21.7 126.5 L22.0 127.3 L22.3 127.8 L22.5 128.4 L22.8 128.0 L23.0 129.2 L23.3 129.4 L23.5 129.5 L23.8 129.2 L24.0 130.3 L24.3 129.9 L24.6 129.7 L24.8 129.1 L25.1 128.9 L25.3 128.5 L25.6 128.8 L25.8 128.1 L26.1 127.6 L26.3 126.4 L26.6 125.7 L26.9 126.1 L27.1 125.4 L27.4 124.8 L27.6 124.3 L27.9 123.6 L28.1 123.2 L28.4 123.4 L28.7 123.7 L28.9 123.2 L29.2 123.5 L29.4 123.6 L29.7 123.6 L29.9 124.5 L30.2 125.3 L30.4 126.0 L30.7 126.7 L31.0 128.3 L31.2 128.1 L31.5 129.1 L31.7 129.7 L32.0 130.5 L32.2 131.5 L32.5 131.9 L32.8 132.5 L33.0 132.0 L33.3 132.6 L33.5 132.3 L33.8 131.7 L34.0 131.1 L34.3 130.1 L34.5 129.5 L34.8 128.5 L35.1 127.2 L35.3 126.2 L35.6 124.7 L35.8 124.0 L36.1 121.9 L36.3 121.4 L36.6 121.2 L36.9 120.6 L37.1 120.1 L37.4 120.0 L37.6 120.4 L37.9 119.9 L38.1 120.4 L38.4 121.9 L38.6 123.0 L38.9 124.7 L39.2 126.1 L39.4 127.2 L39.7 128.9 L39.9 129.7 L40.2 131.9 L40.4 133.4 L40.7 133.4 L41.0 134.9 L41.2 136.0 L41.5 135.9 L41.7 136.7 L42.0 135.8 L42.2 134.7 L42.5 134.0 L42.7 133.1 L43.0 132.2 L43.3 130.5 L43.5 128.9 L43.8 126.3 L44.0 124.7 L44.3 122.4 L44.5 121.2 L44.8 119.7 L45.0 117.5 L45.3 116.1 L45.6 115.5 L45.8 115.0 L46.1 114.9 L46.3 115.4 L46.6 116.7 L46.8 117.5 L47.1 119.1 L47.4 121.3 L47.6 123.3 L47.9 125.2 L48.1 127.6 L48.4 129.4 L48.6 131.4 L48.9 134.3 L49.1 135.7 L49.4 137.3 L49.7 138.7 L49.9 140.4 L50.2 141.2 L50.4 141.2 L50.7 140.8 L50.9 139.9 L51.2 138.0 L51.5 135.9 L51.7 133.8 L52.0 131.8 L52.2 129.0 L52.5 126.0 L52.7 124.0 L53.0 120.6 L53.2 117.7 L53.5 115.5 L53.8 113.5 L54.0 112.2 L54.3 111.5 L54.5 110.2 L54.8 110.7 L55.0 110.7 L55.3 111.5 L55.6 113.9 L55.8 116.0 L56.1 117.8 L56.3 121.0 L56.6 124.8 L56.8 128.1 L57.1 131.3 L57.3 133.5 L57.6 136.6 L57.9 140.1 L58.1 141.5 L58.4 143.1 L58.6 144.8 L58.9 145.8 L59.1 145.5 L59.4 145.3 L59.7 144.2 L59.9 141.1 L60.2 139.1 L60.4 136.4 L60.7 132.6 L60.9 129.7 L61.2 125.5 L61.4 121.9 L61.7 119.1 L62.0 115.8 L62.2 112.8 L62.5 110.4 L62.7 108.0 L63.0 107.1 L63.2 106.2 L63.5 106.7 L63.8 106.5 L64.0 108.7 L64.3 110.7 L64.5 113.2 L64.8 116.0 L65.0 120.2 L65.3 123.5 L65.5 128.0 L65.8 131.9 L66.1 135.8 L66.3 140.0 L66.6 142.7 L66.8 145.7 L67.1 148.0 L67.3 148.3 L67.6 149.8 L67.8 149.3 L68.1 148.0 L68.4 146.6 L68.6 144.6 L68.9 141.4 L69.1 137.8 L69.4 133.7 L69.6 130.4 L69.9 125.5 L70.2 121.7 L70.4 117.5 L70.7 113.1 L70.9 110.1 L71.2 107.2 L71.4 104.8 L71.7 103.2 L71.9 103.2 L72.2 103.2 L72.5 104.3 L72.7 106.1 L73.0 108.4 L73.2 111.8 L73.5 115.4 L73.7 119.5 L74.0 123.3 L74.3 128.1 L74.5 132.3 L74.8 136.5 L75.0 141.3 L75.3 144.3 L75.5 146.7 L75.8 149.0 L76.0 151.3 L76.3 151.9 L76.6 151.2 L76.8 150.6 L77.1 148.5 L77.3 146.1 L77.6 142.1 L77.8 138.2 L78.1 133.8 L78.4 130.3 L78.6 125.0 L78.9 120.6 L79.1 116.9 L79.4 112.0 L79.6 108.4 L79.9 106.5 L80.1 103.4 L80.4 102.8 L80.7 102.1 L80.9 101.8 L81.2 103.1 L81.4 105.9 L81.7 108.3 L81.9 111.5 L82.2 115.5 L82.5 119.9 L82.7 124.3 L83.0 128.3 L83.2 133.7 L83.5 137.3 L83.7 141.4 L84.0 145.3 L84.2 147.7 L84.5 149.5 L84.8 150.9 L85.0 151.9 L85.3 150.4 L85.5 149.5 L85.8 147.3 L86.0 145.7 L86.3 142.2 L86.5 138.7 L86.8 133.6 L87.1 129.8 L87.3 125.5 L87.6 120.8 L87.8 116.0 L88.1 112.4 L88.3 109.8 L88.6 107.2 L88.9 104.3 L89.1 103.5 L89.4 103.0 L89.6 104.1 L89.9 105.4 L90.1 106.5 L90.4 109.5 L90.6 113.1 L90.9 115.7 L91.2 120.1 L91.4 124.1 L91.7 129.2 L91.9 132.5 L92.2 137.4 L92.4 140.0 L92.7 143.5 L93.0 146.2 L93.2 147.7 L93.5 148.4 L93.7 149.5 L94.0 149.3 L94.2 147.6 L94.5 146.1 L94.7 143.7 L95.0 140.6 L95.3 137.3 L95.5 133.4 L95.8 129.3 L96.0 125.3 L96.3 120.9 L96.5 117.8 L96.8 114.2 L97.1 111.8 L97.3 109.3 L97.6 108.1 L97.8 106.9 L98.1 106.9 L98.3 106.4 L98.6 107.8 L98.8 110.0 L99.1 112.0 L99.4 114.2 L99.6 118.5 L99.9 121.0 L100.1 125.1 L100.4 128.7 L100.6 131.7 L100.9 135.6 L101.2 138.4 L101.4 140.7 L101.7 142.3 L101.9 144.6 L102.2 144.8 L102.4 145.1 L102.7 144.8 L102.9 144.0 L103.2 142.5 L103.5 140.7 L103.7 138.1 L104.0 135.3 L104.2 131.4 L104.5 128.8 L104.7 125.7 L105.0 122.7 L105.3 118.8 L105.5 116.2 L105.8 114.3 L106.0 113.0 L106.3 111.8 L106.5 111.1 L106.8 110.8 L107.0 111.6 L107.3 112.2 L107.6 113.8 L107.8 114.8 L108.1 117.1 L108.3 120.1 L108.6 123.2 L108.8 125.0 L109.1 128.6 L109.3 131.2 L109.6 134.1 L109.9 135.8 L110.1 137.6 L110.4 139.0 L110.6 140.4 L110.9 140.5 L111.1 141.2 L111.4 140.5 L111.7 139.9 L111.9 138.2 L112.2 137.1 L112.4 135.2 L112.7 132.7 L112.9 130.5 L113.2 127.8 L113.4 125.5 L113.7 123.1 L114.0 121.1 L114.2 119.3 L114.5 117.6 L114.7 117.0 L115.0 116.3 L115.2 115.0 L115.5 116.1 L115.8 115.7 L116.0 116.5 L116.3 118.3 L116.5 118.7 L116.8 120.2 L117.0 122.2 L117.3 124.0 L117.5 125.7 L117.8 128.4 L118.1 129.7 L118.3 131.4 L118.6 132.4 L118.8 133.6 L119.1 134.5 L119.3 135.4 L119.6 135.3 L119.9 135.6 L120.1 135.3 L120.4 135.2 L120.6 134.6 L120.9 133.4 L121.1 131.9 L121.4 130.8 L121.6 128.5 L121.9 127.4 L122.2 125.8 L122.4 124.5 L122.7 123.2 L122.9 122.3 L123.2 122.0 L123.4 120.3 L123.7 120.0 L124.0 120.0 L124.2 120.0 L124.5 120.1 L124.7 121.4 L125.0 121.2 L125.2 122.6 L125.5 123.8 L125.7 124.6 L126.0 125.1 L126.3 126.9 L126.5 127.3 L126.8 128.0 L127.0 129.5 L127.3 130.5 L127.5 131.0 L127.8 131.3 L128.0 131.5 L128.3 131.8 L128.6 131.7 L128.8 132.2 L129.1 131.8 L129.3 131.2 L129.6 129.9 L129.8 129.8 L130.1 128.7 L130.4 128.6 L130.6 127.7 L130.9 126.6 L131.1 125.4 L131.4 124.7 L131.6 124.1 L131.9 124.1 L132.1 123.5 L132.4 123.3 L132.7 123.2 L132.9 123.7 L133.2 122.9 L133.4 124.0 L133.7 123.4 L133.9 123.9 L134.2 125.6 L134.5 125.6 L134.7 125.7 L135.0 126.1 L135.2 127.4 L135.5 128.1 L135.7 128.7 L136.0 128.2 L136.2 129.5 L136.5 129.3 L136.8 130.1 L137.0 129.7 L137.3 129.1 L137.5 130.1 L137.8 129.0 L138.0 129.1 L138.3 128.3 L138.6 128.2 L138.8 128.3 L139.1 127.0 L139.3 127.0 L139.6 127.1 L139.8 126.7 L140.1 125.7 L140.3 125.3 L140.6 125.2 L140.9 125.1 L141.1 124.7 L141.4 124.7 L141.6 124.0 L141.9 125.1 L142.1 124.3 L142.4 124.4 L142.7 125.6 L142.9 125.0 L143.2 125.6 L143.4 125.8 L143.7 127.0 L143.9 127.4 L144.2 127.8 L144.4 127.5 L144.7 128.4 L145.0 129.1 L145.2 129.3 L145.5 129.7 L145.7 130.1 L146.0 130.1 L146.2 129.1 L146.5 129.7 L146.8 128.6 L147.0 129.2 L147.3 128.8 L147.5 128.0 L147.8 127.9 L148.0 127.2 L148.3 125.9 L148.5 125.4 L148.8 125.0 L149.1 124.7 L149.3 123.9 L149.6 123.5 L149.8 123.7 L150.1 123.3 L150.3 124.0 L150.6 123.2 L150.8 123.7 L151.1 123.6 L151.4 124.1 L151.6 125.1 L151.9 125.9 L152.1 125.5 L152.4 127.2 L152.6 127.5 L152.9 128.4 L153.2 129.2 L153.4 129.4 L153.7 129.7 L153.9 131.1 L154.2 131.0 L154.4 131.7 L154.7 131.5 L154.9 131.7 L155.2 131.7 L155.5 131.4 L155.7 130.8 L156.0 129.2 L156.2 128.9 L156.5 128.4 L156.7 126.5 L157.0 125.4 L157.3 125.1 L157.5 124.5 L157.8 123.5 L158.0 122.8 L158.3 121.7 L158.5 121.5 L158.8 121.0 L159.0 120.8 L159.3 120.5 L159.6 120.4 L159.8 121.1 L160.1 122.3 L160.3 123.2 L160.6 124.1 L160.8 125.5 L161.1 126.9 L161.4 128.6 L161.6 129.7 L161.9 130.2 L162.1 132.5 L162.4 133.1 L162.6 133.8 L162.9 134.2 L163.1 135.5 L163.4 135.6 L163.7 135.5 L163.9 134.9 L164.2 134.1 L164.4 132.5 L164.7 131.4 L164.9 129.9 L165.2 129.4 L165.5 127.7 L165.7 125.0 L166.0 123.0 L166.2 121.9 L166.5 120.2 L166.7 119.5 L167.0 117.9 L167.2 116.4 L167.5 116.0 L167.8 115.8 L168.0 115.8 L168.3 117.3 L168.5 118.4 L168.8 119.6 L169.0 120.7 L169.3 122.3 L169.6 124.0 L169.8 126.4 L170.1 128.7 L170.3 130.8 L170.6 133.3 L170.8 135.1 L171.1 137.4 L171.3 137.9 L171.6 139.6 L171.9 139.3 L172.1 139.8 L172.4 140.0 L172.6 139.5 L172.9 138.1 L173.1 136.1 L173.4 134.1 L173.6 132.6 L173.9 130.2 L174.2 127.0 L174.4 124.3 L174.7 121.9 L174.9 119.6 L175.2 116.8 L175.4 115.6 L175.7 113.6 L176.0 112.2 L176.2 110.9 L176.5 111.1 L176.7 111.2 L177.0 112.6 L177.2 114.3 L177.5 116.2 L177.7 117.6 L178.0 120.6 L178.3 124.0 L178.5 127.4 L178.8 129.9 L179.0 132.8 L179.3 136.0 L179.5 138.8 L179.8 140.6 L180.1 142.1 L180.3 144.3 L180.6 145.3 L180.8 145.0 L181.1 144.4 L181.3 143.0 L181.6 142.0 L181.8 139.0 L182.1 136.4 L182.4 133.7 L182.6 130.7 L182.9 126.3 L183.1 123.6 L183.4 119.5 L183.6 117.0 L183.9 114.0 L184.2 110.8 L184.4 109.4 L184.7 107.2 L184.9 106.9 L185.2 107.2 L185.4 107.8 L185.7 108.8 L185.9 110.4 L186.2 112.5 L186.5 116.5 L186.7 119.6 L187.0 123.5 L187.2 126.4 L187.5 131.3 L187.7 135.3 L188.0 138.8 L188.3 141.6 L188.5 143.7 L188.8 145.9 L189.0 147.6 L189.3 148.1 L189.5 148.2 L189.8 148.3 L190.0 147.0 L190.3 144.0 L190.6 141.5 L190.8 139.1 L191.1 134.6 L191.3 131.0 L191.6 126.8 L191.8 122.7 L192.1 118.8 L192.3 115.2 L192.6 111.4 L192.9 108.5 L193.1 105.4 L193.4 104.9 L193.6 103.0 L193.9 104.0 L194.1 104.6 L194.4 105.6 L194.7 107.8 L194.9 111.3 L195.2 115.2 L195.4 118.7 L195.7 123.0 L195.9 126.7 L196.2 132.0 L196.4 136.1 L196.7 139.4 L197.0 144.0 L197.2 146.5 L197.5 148.4 L197.7 150.0 L198.0 151.7 L198.2 151.7 L198.5 150.8 L198.8 148.0 L199.0 146.4 L199.3 142.7 L199.5 138.9 L199.8 135.5 L200.0 131.2 L200.3 125.8 L200.5 121.7 L200.8 117.8 L201.1 113.2 L201.3 110.1 L201.6 107.1 L201.8 105.1 L202.1 102.6 L202.3 101.7 L202.6 102.1 L202.9 102.7 L203.1 105.6 L203.4 107.8 L203.6 110.7 L203.9 113.8 L204.1 117.9 L204.4 123.1 L204.6 127.8 L204.9 132.2 L205.2 136.4 L205.4 139.9 L205.7 144.4 L205.9 146.6 L206.2 149.0 L206.4 150.4 L206.7 151.2 L207.0 151.2 L207.2 150.6 L207.5 148.8 L207.7 146.2 L208.0 142.5 L208.2 139.7 L208.5 135.4 L208.7 130.3 L209.0 126.5 L209.3 122.2 L209.5 118.0 L209.8 113.4 L210.0 110.2 L210.3 106.5 L210.5 104.5 L210.8 102.9 L211.1 103.2 L211.3 103.6 L211.6 104.6 L211.8 105.9 L212.1 108.1 L212.3 111.6 L212.6 115.5 L212.8 119.2 L213.1 123.2 L213.4 127.5 L213.6 131.7 L213.9 135.7 L214.1 139.7 L214.4 143.6 L214.6 145.4 L214.9 148.2 L215.1 149.1 L215.4 149.9 L215.7 149.2 L215.9 148.9 L216.2 147.1 L216.4 144.7 L216.7 141.8 L216.9 137.4 L217.2 134.0 L217.5 130.3 L217.7 126.1 L218.0 121.3 L218.2 118.1 L218.5 115.0 L218.7 111.2 L219.0 108.9 L219.2 106.6 L219.5 106.6 L219.8 105.6 L220.0 105.5 L220.3 106.5 L220.5 108.0 L220.8 111.4 L221.0 113.9 L221.3 117.3 L221.6 120.7 L221.8 123.5 L222.1 127.7 L222.3 131.0 L222.6 135.2 L222.8 137.7 L223.1 141.0 L223.3 143.4 L223.6 144.5 L223.9 145.3 L224.1 146.7 L224.4 145.8 L224.6 144.8 L224.9 143.8 L225.1 141.5 L225.4 139.2 L225.7 136.2 L225.9 133.0 L226.2 129.2 L226.4 125.8 L226.7 123.0 L226.9 120.2 L227.2 117.0 L227.4 114.1 L227.7 112.8 L228.0 111.2 L228.2 110.5 L228.5 109.5 L228.7 110.1 L229.0 111.6 L229.2 112.9 L229.5 114.4 L229.8 116.5 L230.0 118.9 L230.3 122.4 L230.5 125.3 L230.8 127.5 L231.0 130.7 L231.3 133.6 L231.5 135.9 L231.8 137.2 L232.1 139.7 L232.3 140.5 L232.6 141.5 L232.8 141.6 L233.1 140.8 L233.3 139.8 L233.6 139.4 L233.8 138.0 L234.1 135.4 L234.4 133.8 L234.6 131.6 L234.9 128.1 L235.1 126.2 L235.4 123.3 L235.6 121.6 L235.9 119.0 L236.2 117.8 L236.4 116.8 L236.7 116.0 L236.9 114.8 L237.2 114.5 L237.4 114.5 L237.7 116.2 L237.9 116.6 L238.2 118.3 L238.5 119.7 L238.7 122.0 L239.0 123.8 L239.2 125.6 L239.5 127.1 L239.7 130.0 L240.0 131.4 L240.3 132.6 L240.5 133.8 L240.8 135.8 L241.0 136.6 L241.3 136.0 L241.5 136.1 L241.8 136.4 L242.0 136.4 L242.3 134.4 L242.6 134.0 L242.8 132.0 L243.1 130.9 L243.3 129.1 L243.6 128.3 L243.8 125.9 L244.1 125.1 L244.4 123.5 L244.6 121.7 L244.9 120.6 L245.1 120.6 L245.4 120.0 L245.6 119.5 L245.9 119.3 L246.1 119.7 L246.4 120.5 L246.7 121.0 L246.9 121.3 L247.2 122.1 L247.4 124.3 L247.7 124.9 L247.9 125.8 L248.2 128.0 L248.5 128.1 L248.7 130.1 L249.0 130.4 L249.2 131.3 L249.5 131.8 L249.7 132.6 L250.0 132.6 L250.2 132.4 L250.5 132.5 L250.8 131.8 L251.0 131.5 L251.3 130.9 L251.5 130.6 L251.8 129.1 L252.0 128.3 L252.3 127.7 L252.6 126.2 L252.8 125.3 L253.1 124.9 L253.3 124.6 L253.6 123.7 L253.8 123.7 L254.1 123.4 L254.3 122.8 L254.6 123.3 L254.9 123.0 L255.1 123.1 L255.4 124.1 L255.6 123.9 L255.9 125.1 L256.1 124.9 L256.4 125.5 L256.6 126.5 L256.9 127.7 L257.2 127.8 L257.4 128.5 L257.7 128.3 L257.9 129.8 L258.2 129.2 L258.4 129.2 L258.7 129.7 L259.0 129.6 L259.2 130.3 L259.5 129.1 L259.7 129.4 L260.0 128.5 L260.2 128.1 L260.5 128.6 L260.7 127.3 L261.0 126.6 L261.3 127.2 L261.5 126.3 L261.8 125.4 L262.0 125.7 L262.3 124.5 L262.5 125.0 L262.8 124.1 L263.1 124.8 L263.3 124.3 L263.6 123.9 L263.8 124.9 L264.1 125.1 L264.3 125.0 L264.6 125.6 L264.8 126.4 L265.1 126.6 L265.4 127.1 L265.6 126.6 L265.9 127.4 L266.1 127.5 L266.4 128.8 L266.6 128.4 L266.9 129.5 L267.2 129.2 L267.4 129.2 L267.7 129.6 L267.9 128.9 L268.2 129.2 L268.4 129.0 L268.7 128.3 L268.9 129.0 L269.2 127.5 L269.5 127.4 L269.7 127.2 L270.0 126.2 L270.2 126.4 L270.5 125.0 L270.7 125.0 L271.0 124.9 L271.3 124.0 L271.5 124.1 L271.8 124.3 L272.0 123.5 L272.3 124.4 L272.5 123.5 L272.8 124.4 L273.0 124.3 L273.3 124.3 L273.6 125.3 L273.8 125.8 L274.1 126.8 L274.3 127.9 L274.6 128.5 L274.8 129.0 L275.1 129.1 L275.3 129.9 L275.6 130.3 L275.9 130.2 L276.1 131.4 L276.4 131.4 L276.6 130.9 L276.9 131.5 L277.1 131.2 L277.4 130.3 L277.7 130.1 L277.9 129.1 L278.2 128.4 L278.4 127.1 L278.7 126.2 L278.9 125.8 L279.2 124.4 L279.4 123.7 L279.7 123.3 L280.0 121.7 L280.2 122.0 L280.5 121.8 L280.7 121.7 L281.0 121.0 L281.2 121.0 L281.5 121.5 L281.8 122.6 L282.0 123.5 L282.3 124.8 L282.5 125.1 L282.8 126.4 L283.0 127.8 L283.3 128.7 L283.5 130.2 L283.8 130.7 L284.1 132.0 L284.3 133.5 L284.6 133.3 L284.8 134.9 L285.1 134.5 L285.3 134.6 L285.6 134.5 L285.9 134.1 L286.1 132.4 L286.4 132.3 L286.6 130.4 L286.9 128.4 L287.1 127.9 L287.4 126.2 L287.6 124.1 L287.9 122.6 L288.2 121.0 L288.4 119.4 L288.7 119.1 L288.9 118.1 L289.2 117.5 L289.4 117.6 L289.7 116.7 L290.0 117.2 L290.2 118.1 L290.5 120.0 L290.7 120.4 L291.0 122.1 L291.2 124.3 L291.5 125.9 L291.7 128.3 L292.0 130.7 L292.3 132.8 L292.5 134.5 L292.8 136.4 L293.0 137.3 L293.3 137.9 L293.5 138.6 L293.8 138.7 L294.1 138.7 L294.3 138.7 L294.6 137.3 L294.8 136.1 L295.1 134.0 L295.3 132.3 L295.6 130.3 L295.8 127.4 L296.1 124.5 L296.4 123.0 L296.6 119.8 L296.9 118.6 L297.1 116.4 L297.4 114.8 L297.6 112.9 L297.9 111.9 L298.1 111.9 L298.4 112.6 L298.7 112.7 L298.9 114.6 L299.2 116.4 L299.4 117.6 L299.7 120.4 L299.9 123.0 L300.2 125.9 L300.5 128.5 L300.7 132.0 L301.0 134.4 L301.2 137.1 L301.5 139.2 L301.7 141.6 L302.0 142.6 L302.2 143.6 L302.5 144.2 L302.8 144.1 L303.0 142.7 L303.3 141.9 L303.5 138.9 L303.8 137.4 L304.0 134.7 L304.3 131.5 L304.6 127.2 L304.8 124.5 L305.1 121.4 L305.3 118.4 L305.6 115.4 L305.8 112.1 L306.1 110.1 L306.3 108.5 L306.6 107.5 L306.9 108.1 L307.1 107.8 L307.4 109.1 L307.6 110.3 L307.9 112.5 L308.1 115.2 L308.4 119.4 L308.7 121.9 L308.9 125.6 L309.2 129.3 L309.4 134.1 L309.7 137.5 L309.9 140.8 L310.2 143.7 L310.4 144.9 L310.7 146.6 L311.0 147.8 L311.2 147.8 L311.5 147.6 L311.7 146.8 L312.0 145.1 L312.2 142.6 L312.5 138.7 L312.8 135.9 L313.0 131.9 L313.3 127.7 L313.5 124.1 L313.8 119.8 L314.0 116.0 L314.3 112.0 L314.5 109.5 L314.8 107.1 L315.1 104.6 L315.3 104.2 L315.6 103.6 L315.8 104.4 L316.1 106.5 L316.3 108.1 L316.6 110.8 L316.9 113.7 L317.1 118.0 L317.4 121.7 L317.6 126.2 L317.9 130.9 L318.1 134.4 L318.4 139.3 L318.6 142.0 L318.9 145.9 L319.2 148.6 L319.4 150.1 L319.7 150.4 L319.9 150.3 L320.2 150.9 L320.4 148.8 L320.7 146.6 L320.9 143.3 L321.2 140.6 L321.5 136.2 L321.7 132.1 L322.0 127.1 L322.2 123.3 L322.5 118.0 L322.7 114.7 L323.0 111.1 L323.3 107.4 L323.5 105.1 L323.8 103.8 L324.0 102.2 L324.3 102.8 L324.5 102.6 L324.8 104.3 L325.0 106.5 L325.3 109.7 L325.6 113.6 L325.8 117.6 L326.1 122.0 L326.3 125.9 L326.6 131.5 L326.8 134.9 L327.1 140.2 L327.4 143.6 L327.6 146.7 L327.9 148.4 L328.1 150.6 L328.4 151.7 L328.6 151.1 L328.9 151.1 L329.1 149.2 L329.4 146.8 L329.7 143.5 L329.9 139.9 L330.2 135.9 L330.4 131.9 L330.7 127.4 L330.9 123.1 L331.2 117.9 L331.5 114.0 L331.7 110.3 L332.0 108.0 L332.2 105.2 L332.5 103.2 L332.7 102.6 L333.0 103.1 L333.2 103.5 L333.5 104.6 L333.8 107.8 L334.0 110.9 L334.3 114.3 L334.5 117.8 L334.8 121.9 L335.0 127.1 L335.3 131.5 L335.6 135.6 L335.8 139.4 L336.1 142.7 L336.3 146.0 L336.6 148.1 L336.8 149.8 L337.1 149.6 L337.3 149.8 L337.6 149.8 L337.9 147.1 L338.1 145.9 L338.4 142.6 L338.6 138.4 L338.9 134.9 L339.1 130.9 L339.4 127.1 L339.6 123.2 L339.9 118.7 L340.2 115.6 L340.4 112.3 L340.7 109.3 L340.9 107.7 L341.2 105.8 L341.4 104.7 L341.7 104.9 L342.0 106.0 L342.2 107.3 L342.5 109.7 L342.7 112.9 L343.0 115.5 L343.2 119.4 L343.5 122.7 L343.7 126.4 L344.0 130.9 L344.3 134.3 L344.5 137.5 L344.8 140.9 L345.0 143.6 L345.3 144.8 L345.5 145.9 L345.8 146.6 L346.1 146.5 L346.3 145.5 L346.6 144.3 L346.8 142.3 L347.1 140.0 L347.3 137.2 L347.6 133.6 L347.8 130.8 L348.1 126.9 L348.4 122.9 L348.6 119.7 L348.9 116.8 L349.1 114.7 L349.4 112.3 L349.6 110.6 L349.9 109.3 L350.2 109.1 L350.4 109.0 L350.7 109.4 L350.9 111.7 L351.2 112.9 L351.4 115.1 L351.7 118.2 L351.9 120.9 L352.2 123.4 L352.5 127.7 L352.7 130.1 L353.0 133.4 L353.2 135.3 L353.5 137.4 L353.7 139.7 L354.0 141.7 L354.3 142.0 L354.5 142.4 L354.8 142.0 L355.0 141.5 L355.3 140.2 L355.5 138.3 L355.8 136.7 L356.0 134.5 L356.3 131.4 L356.6 129.7 L356.8 126.4 L357.1 124.2 L357.3 121.3 L357.6 119.9 L357.8 116.9 L358.1 116.1 L358.4 115.3 L358.6 114.4 L358.9 114.0 L359.1 114.6 L359.4 114.7 L359.6 115.8 L359.9 116.8 L360.1 118.9 L360.4 121.0 L360.7 123.1 L360.9 124.6 L361.2 126.6 L361.4 129.2 L361.7 131.6 L361.9 132.7 L362.2 134.8 L362.4 136.2 L362.7 137.2 L363.0 137.0 L363.2 137.1 L363.5 137.2 L363.7 136.8 L364.0 135.9 L364.2 135.1 L364.5 132.8 L364.8 132.0 L365.0 130.0 L365.3 128.0 L365.5 126.2 L365.8 125.0 L366.0 123.6 L366.3 121.9 L366.5 121.2 L366.8 119.3 L367.1 119.2 L367.3 118.2 L367.6 118.8 L367.8 118.9 L368.1 119.5 L368.3 119.9 L368.6 121.2 L368.9 122.5 L369.1 122.8 L369.4 124.7 L369.6 126.1 L369.9 127.4 L370.1 128.4 L370.4 129.7 L370.6 130.5 L370.9 131.4 L371.2 132.5 L371.4 132.3 L371.7 132.7 L371.9 133.8 L372.2 132.6 L372.4 132.2 L372.7 131.8 L373.0 131.9 L373.2 130.2 L373.5 129.5 L373.7 129.3 L374.0 128.3 L374.2 126.1 L374.5 125.5 L374.7 125.1 L375.0 124.5 L375.3 123.8 L375.5 123.2 L375.8 122.1 L376.0 122.5 L376.3 122.7 L376.5 121.9 L376.8 122.3 L377.1 123.4 L377.3 123.1 L377.6 124.0 L377.8 124.5 L378.1 125.4 L378.3 125.8 L378.6 126.7 L378.8 127.3 L379.1 128.8 L379.4 128.7 L379.6 129.4 L379.9 129.6 L380.1 130.2 L380.4 129.8 L380.6 130.2 L380.9 130.5 L381.1 130.4 L381.4 130.2 L381.7 129.4 L381.9 129.4 L382.2 128.4 L382.4 128.3 L382.7 127.3 L382.9 126.8 L383.2 126.2 L383.5 125.3 L383.7 125.9 L384.0 124.5 L384.2 124.6 L384.5 124.3 L384.7 124.0 L385.0 123.8 L385.2 124.4 L385.5 124.5 L385.8 124.0 L386.0 125.4 L386.3 125.1 L386.5 125.5 L386.8 126.7 L387.0 126.4 L387.3 126.8 L387.6 126.9 L387.8 128.1 L388.1 127.7 L388.3 128.6 L388.6 129.0 L388.8 128.7 L389.1 129.9 L389.3 129.1 L389.6 129.2 L389.9 129.5 L390.1 128.6 L390.4 129.0 L390.6 128.5 L390.9 128.1 L391.1 127.3 L391.4 127.6 L391.7 126.8 L391.9 126.4 L392.2 125.7 L392.4 124.9 L392.7 125.2 L392.9 124.2 L393.2 124.5 L393.4 124.1 L393.7 124.3 L394.0 124.0 L394.2 123.6 L394.5 124.1 L394.7 124.2 L395.0 125.2 L395.2 125.7 L395.5 126.2 L395.8 126.4 L396.0 126.9 L396.3 127.3 L396.5 128.9 L396.8 128.6 L397.0 128.9 L397.3 129.8 L397.5 130.8 L397.8 130.7 L398.1 131.2 L398.3 131.0 L398.6 130.0 L398.8 130.1 L399.1 129.7 L399.3 129.1 L399.6 128.3 L399.9 128.0 L400.1 127.3 L400.4 126.4 L400.6 125.5 L400.9 124.8 L401.1 124.0 L401.4 123.8 L401.6 122.7 L401.9 122.4 L402.2 121.7 L402.4 122.3 L402.7 122.2 L402.9 122.5 L403.2 121.9 L403.4 122.3 L403.7 123.2 L403.9 124.4 L404.2 124.8 L404.5 125.9 L404.7 127.2 L405.0 128.7 L405.2 129.8 L405.5 130.7 L405.7 131.8 L406.0 132.5 L406.3 132.9 L406.5 133.0 L406.8 134.3 L407.0 133.7 L407.3 134.1 L407.5 133.6 L407.8 132.0 L408.0 131.4 L408.3 129.9 L408.6 129.2 L408.8 128.3 L409.1 126.4 L409.3 124.7 L409.6 122.8 L409.8 121.4 L410.1 120.7 L410.4 119.8 L410.6 119.3 L410.9 118.0 L411.1 118.3 L411.4 118.3 L411.6 118.8 L411.9 119.5 L412.1 119.5 L412.4 121.4 L412.7 121.8 L412.9 124.6 L413.2 125.4 L413.4 128.2 L413.7 130.2 L413.9 131.2 L414.2 133.5 L414.5 134.5 L414.7 136.5 L415.0 137.7 L415.2 137.5 L415.5 138.0 L415.7 137.7 L416.0 137.5 L416.2 137.5 L416.5 135.6 L416.8 134.0 L417.0 132.4 L417.3 129.8 L417.5 128.4 L417.8 125.2 L418.0 123.2 L418.3 121.8 L418.6 119.7 L418.8 117.0 L419.1 115.2 L419.3 114.8 L419.6 113.7 L419.8 112.8 L420.1 113.6 L420.3 113.3 L420.6 114.8 L420.9 116.8 L421.1 118.3 L421.4 120.2 L421.6 122.9 L421.9 125.3 L422.1 128.7 L422.4 130.7 L422.6 133.9 L422.9 136.1 L423.2 138.3 L423.4 140.4 L423.7 141.9 L423.9 142.4 L424.2 142.6 L424.4 142.6 L424.7 142.2 L425.0 141.3 L425.2 139.8 L425.5 136.5 L425.7 134.2 L426.0 131.1 L426.2 128.6 L426.5 125.1 L426.7 121.4 L427.0 118.5 L427.3 115.9 L427.5 113.7 L427.8 111.5 L428.0 109.3 L428.3 108.9 L428.5 108.1 L428.8 108.4 L429.1 108.9 L429.3 110.5 L429.6 113.2 L429.8 116.1 L430.1 118.7 L430.3 121.8 L430.6 125.2 L430.8 128.5 L431.1 132.0 L431.4 136.5 L431.6 138.7 L431.9 141.6 L432.1 143.8 L432.4 145.9 L432.6 147.4 L432.9 147.1 L433.2 146.9 L433.4 146.0 L433.7 144.1 L433.9 142.5 L434.2 140.0 L434.4 136.1 L434.7 132.1 L434.9 128.9 L435.2 124.3 L435.5 120.1 L435.7 117.2 L436.0 113.3 L436.2 110.2 L436.5 107.9 L436.7 106.4 L437.0 105.2 L437.3 104.2 L437.5 104.5 L437.8 106.0 L438.0 108.4 L438.3 110.0 L438.5 113.1 L438.8 117.4 L439.0 120.9 L439.3 124.7 L439.6 129.0 L439.8 133.7 L440.1 137.7 L440.3 141.2 L440.6 144.9 L440.8 147.5 L441.1 149.4 L441.4 150.0 L441.6 150.8 L441.9 150.1 L442.1 149.0 L442.4 146.9 L442.6 144.6 L442.9 141.5 L443.1 136.5 L443.4 133.1 L443.7 129.0 L443.9 123.9 L444.2 119.3 L444.4 115.9 L444.7 111.6 L444.9 108.7 L445.2 105.8 L445.4 104.5 L445.7 103.3 L446.0 101.8 L446.2 102.4 L446.5 104.2 L446.7 106.3 L447.0 109.5 L447.2 112.2 L447.5 116.6 L447.8 120.3 L448.0 125.0 L448.3 129.5 L448.5 133.8 L448.8 138.9 L449.0 143.0 L449.3 146.1 L449.5 148.8 L449.8 150.8 L450.1 152.0 L450.3 151.6 L450.6 150.6 L450.8 149.8 L451.1 147.0 L451.3 144.1 L451.6 141.7 L451.9 137.1 L452.1 133.0 L452.4 128.8 L452.6 123.2 L452.9 119.6 L453.1 115.0 L453.4 111.2 L453.6 107.5 L453.9 105.3 L454.2 103.8 L454.4 102.7 L454.7 102.8 L454.9 102.4 L455.2 103.8 L455.4 107.0 L455.7 110.1 L456.0 113.3 L456.2 117.1 L456.5 120.7 L456.7 125.1 L457.0 129.7 L457.2 135.0 L457.5 138.1 L457.7 141.9 L458.0 145.1 L458.3 147.1 L458.5 150.0 L458.8 150.9 L459.0 150.3 L459.3 149.4 L459.5 148.3 L459.8 146.6 L460.1 143.4 L460.3 139.8 L460.6 136.9 L460.8 132.5 L461.1 128.3 L461.3 124.2 L461.6 119.6 L461.8 116.1 L462.1 112.6 L462.4 109.8 L462.6 106.8 L462.9 106.0 L463.1 104.3 L463.4 104.8 L463.6 105.7 L463.9 106.0 L464.2 109.0 L464.4 110.8 L464.7 114.1 L464.9 117.6 L465.2 122.4 L465.4 126.0 L465.7 130.4 L465.9 133.3 L466.2 136.9 L466.5 140.4 L466.7 143.3 L467.0 145.5 L467.2 146.4 L467.5 147.6 L467.7 147.4 L468.0 147.4 L468.2 145.9 L468.5 144.2 L468.8 140.8 L469.0 138.1 L469.3 135.3 L469.5 130.8 L469.8 127.9 L470.0 124.1 L470.3 120.9 L470.6 117.6 L470.8 114.0 L471.1 112.2 L471.3 110.6 L471.6 108.9 L471.8 108.5 L472.1 107.8 L472.3 109.4 L472.6 109.6 L472.9 112.5 L473.1 113.7 L473.4 116.7 L473.6 120.2 L473.9 123.1 L474.1 126.6 L474.4 129.8 L474.7 133.0 L474.9 135.6 L475.2 137.3 L475.4 139.4 L475.7 141.1 L475.9 143.2 L476.2 143.5 L476.4 142.7 L476.7 143.1 L477.0 141.2 L477.2 140.1 L477.5 137.2 L477.7 136.1 L478.0 132.5 L478.2 130.3 L478.5 127.8 L478.8 125.2 L479.0 121.5 L479.3 119.4 L479.5 117.7 L479.8 115.7 L480.0 113.7 L480.3 113.7 L480.5 112.9 L480.8 113.5 L481.1 114.0 L481.3 114.2 L481.6 115.7 L481.8 118.1 L482.1 120.2 L482.3 122.4 L482.6 124.1 L482.9 126.6 L483.1 129.2 L483.4 131.5 L483.6 133.0 L483.9 134.6 L484.1 135.9 L484.4 137.3 L484.6 138.4 L484.9 138.9 L485.2 138.0 L485.4 137.9 L485.7 136.7 L485.9 136.3 L486.2 134.0 L486.4 132.9 L486.7 130.5 L486.9 128.5 L487.2 127.1 L487.5 125.8 L487.7 122.9 L488.0 121.9 L488.2 120.0 L488.5 119.6 L488.7 118.9 L489.0 117.5 L489.3 117.9 L489.5 118.3 L489.8 118.4 L490.0 118.8 L490.3 120.5 L490.5 121.0 L490.8 122.4 L491.0 123.8 L491.3 125.8 L491.6 126.5 L491.8 127.9 L492.1 129.2 L492.3 131.1 L492.6 131.6 L492.8 132.9 L493.1 133.1 L493.4 134.3 L493.6 133.4 L493.9 133.2 L494.1 133.5 L494.4 132.9 L494.6 132.1 L494.9 131.2 L495.1 130.9 L495.4 128.6 L495.7 128.4 L495.9 127.3 L496.2 126.3 L496.4 125.1 L496.7 123.5 L496.9 123.7 L497.2 123.0 L497.5 121.8 L497.7 122.2 L498.0 122.3 L498.2 121.6 L498.5 121.9 L498.7 122.4 L499.0 122.7 L499.2 124.2 L499.5 124.0 L499.8 124.9 L500.0 126.6 L500.3 127.3 L500.5 127.7 L500.8 128.4 L501.0 129.4 L501.3 130.1 L501.6 130.2 L501.8 130.9 L502.1 130.5 L502.3 130.2 L502.6 131.1 L502.8 130.3 L503.1 129.8 L503.3 130.1 L503.6 128.8 L503.9 128.2 L504.1 128.2 L504.4 127.6 L504.6 126.5 L504.9 126.3 L505.1 125.9 L505.4 124.7 L505.7 124.5 L505.9 124.7 L506.2 124.5 L506.4 124.3 L506.7 124.1 L506.9 123.4 L507.2 123.8 L507.4 123.9 L507.7 124.3 L508.0 124.6 L508.2 126.0 L508.5 125.9 L508.7 125.9 L509.0 126.4 L509.2 127.7 L509.5 127.9 L509.7 128.1 L510.0 128.8 L510.3 128.9 L510.5 129.7 L510.8 129.4 L511.0 129.4 L511.3 130.0 L511.5 129.7 L511.8 128.5 L512.1 128.5 L512.3 128.0 L512.6 128.0 L512.8 127.4 L513.1 126.8 L513.3 126.4 L513.6 127.0 L513.8 125.8 L514.1 125.8 L514.4 124.9 L514.6 125.1 L514.9 124.5 L515.1 123.8 L515.4 124.1 L515.6 124.5 L515.9 124.3 L516.2 124.6 L516.4 124.2 L516.7 125.3 L516.9 125.7 L517.2 125.7 L517.4 126.9 L517.7 126.8 L517.9 126.9 L518.2 128.0 L518.5 128.8 L518.7 129.1 L519.0 129.4 L519.2 130.2 L519.5 130.5 L519.7 130.7 L520.0 130.5 L520.3 130.3 L520.5 130.3 L520.8 130.0 L521.0 129.8 L521.3 128.7 L521.5 127.7 L521.8 127.4 L522.0 126.7 L522.3 125.9 L522.6 125.7 L522.8 124.4 L523.1 124.0 L523.3 123.4 L523.6 122.8 L523.8 122.6 L524.1 122.6 L524.4 122.6 L524.6 122.8 L524.9 122.7 L525.1 123.2 L525.4 123.5 L525.6 124.9 L525.9 125.3 L526.1 125.6 L526.4 127.4 L526.7 128.0 L526.9 129.0 L527.2 130.3 L527.4 130.3 L527.7 131.9 L527.9 131.9 L528.2 133.2 L528.4 133.6 L528.7 132.6 L529.0 133.0 L529.2 133.1 L529.5 132.2 L529.7 131.3 L530.0 130.0 L530.2 129.7 L530.5 128.3 L530.8 126.1 L531.0 125.0 L531.3 124.4 L531.5 122.9 L531.8 121.7 L532.0 120.3 L532.3 119.5 L532.5 118.7 L532.8 118.3 L533.1 118.6 L533.3 118.6 L533.6 119.1 L533.8 119.8 L534.1 121.2 L534.3 122.1 L534.6 123.7 L534.9 125.0 L535.1 127.7 L535.4 128.5 L535.6 131.3 L535.9 132.0 L536.1 133.7 L536.4 135.1 L536.6 135.6 L536.9 136.8 L537.2 137.4 L537.4 137.0 L537.7 136.6 L537.9 136.3 L538.2 135.5 L538.4 134.1 L538.7 132.5 L539.0 130.3 L539.2 128.8 L539.5 126.5 L539.7 124.1 L540.0 122.2 L540.2 120.3 L540.5 117.9 L540.7 116.2 L541.0 115.4 L541.3 114.6 L541.5 114.4 L541.8 114.2 L542.0 114.8 L542.3 115.2 L542.5 116.4 L542.8 118.7 L543.1 119.7 L543.3 122.7 L543.6 124.5 L543.8 127.1 L544.1 129.6 L544.3 133.1 L544.6 135.3 L544.8 136.8 L545.1 139.8 L545.4 141.2 L545.6 141.6 L545.9 142.2 L546.1 141.7 L546.4 141.3 L546.6 140.6 L546.9 138.5 L547.2 137.1 L547.4 134.7 L547.7 131.8 L547.9 129.2 L548.2 126.2 L548.4 122.8 L548.7 120.1 L548.9 116.6 L549.2 114.4 L549.5 112.5 L549.7 111.4 L550.0 109.9 L550.2 109.3 L550.5 109.1 L550.7 109.8 L551.0 110.7 L551.2 112.4 L551.5 115.3 L551.8 118.1 L552.0 121.0 L552.3 123.9 L552.5 128.2 L552.8 131.4 L553.0 134.4 L553.3 138.4 L553.6 141.0 L553.8 142.6 L554.1 144.6 L554.3 146.2 L554.6 147.3 L554.8 146.2 L555.1 145.7 L555.3 144.1 L555.6 141.8 L555.9 139.3 L556.1 136.7 L556.4 133.6 L556.6 129.7 L556.9 125.6 L557.1 121.7 L557.4 118.4 L557.7 115.0 L557.9 111.3 L558.2 108.8 L558.4 107.2 L558.7 105.1 L558.9 104.9 L559.2 105.8 L559.4 106.3 L559.7 107.5 L560.0 110.4 L560.2 112.8 L560.5 117.0 L560.7 120.4 L561.0 123.8 L561.2 128.3 L561.5 132.4 L561.8 136.9 L562.0 140.2 L562.3 143.4 L562.5 146.5 L562.8 148.1 L563.0 149.5 L563.3 149.5 L563.5 149.8 L563.8 149.0 L564.1 147.6 L564.3 145.0 L564.6 141.2 L564.8 138.4 L565.1 134.3 L565.3 130.0 L565.6 125.1 L565.9 120.4 L566.1 116.5 L566.4 112.4 L566.6 109.9 L566.9 107.2 L567.1 104.2 L567.4 103.4 L567.6 102.4 L567.9 103.1 L568.2 104.4 L568.4 106.2 L568.7 109.1 L568.9 111.3 L569.2 115.5 L569.4 120.0 L569.7 124.3 L569.9 128.9 L570.2 133.8 L570.5 137.1 L570.7 141.4 L571.0 144.3 L571.2 147.8 L571.5 149.7 L571.7 151.5 L572.0 152.2 L572.3 150.8 L572.5 149.7 L572.8 148.3 L573.0 144.9 L573.3 141.7 L573.5 138.4 L573.8 133.8 L574.0 128.9 L574.3 124.8 L574.6 119.8 L574.8 116.4 L575.1 112.3 L575.3 108.5 L575.6 106.3 L575.8 104.1 L576.1 102.2 L576.4 102.2 L576.6 102.2 L576.9 104.2 L577.1 106.3 L577.4 108.8 L577.6 112.4 L577.9 115.2 L578.1 120.3 L578.4 124.4 L578.7 129.5 L578.9 133.4 L579.2 137.8 L579.4 141.6 L579.7 145.3 L579.9 147.9 L580.2 149.0 L580.5 150.8 L580.7 151.3 L581.0 150.9 L581.2 149.5 L581.5 147.6 L581.7 145.1 L582.0 141.1 L582.2 137.7 L582.5 133.8 L582.8 128.8 L583.0 125.2 L583.3 120.7 L583.5 116.0 L583.8 113.2 L584.0 109.7 L584.3 106.7 L584.6 104.9 L584.8 104.6 L585.1 104.1 L585.3 104.1 L585.6 105.8 L585.8 107.0 L586.1 110.6 L586.3 112.8 L586.6 117.0 L586.9 121.2 L587.1 125.0 L587.4 129.5 L587.6 132.8 L587.9 137.1 L588.1 139.7 L588.4 143.0 L588.7 145.6 L588.9 147.4 L589.2 147.9 L589.4 148.7 L589.7 147.3 L589.9 147.1 L590.2 144.7 L590.4 142.2 L590.7 139.6 L591.0 135.6 L591.2 132.5 L591.5 128.4 L591.7 124.7 L592.0 121.4 L592.2 117.8 L592.5 115.1 L592.7 112.4 L593.0 109.5 L593.3 108.7 L593.5 107.4 L593.8 107.9 L594.0 107.9 L594.3 109.2 L594.5 110.8 L594.8 113.3 L595.1 116.3 L595.3 119.0 L595.6 122.4 L595.8 125.9 L596.1 128.6 L596.3 132.4 L596.6 135.3 L596.8 137.4 L597.1 139.9 L597.4 141.6 L597.6 142.9 L597.9 144.5 L598.1 144.4 L598.4 144.2 L598.6 142.3 L598.9 140.8 L599.2 139.2 L599.4 136.7 L599.7 133.7 L599.9 130.8 L600.2 128.4 L600.4 124.7 L600.7 122.4 L600.9 119.5 L601.2 117.7 L601.5 115.8 L601.7 113.3 L602.0 112.4 L602.2 111.9 L602.5 112.7 L602.7 113.1 L603.0 113.9 L603.3 115.2 L603.5 116.9 L603.8 118.8 L604.0 121.6 L604.3 123.7 L604.5 125.8 L604.8 128.9 L605.0 130.4 L605.3 133.0 L605.6 134.8 L605.8 137.0 L606.1 138.0 L606.3 138.5 L606.6 139.4 L606.8 139.8 L607.1 138.4 L607.4 137.6 L607.6 137.1 L607.9 135.9 L608.1 133.2 L608.4 131.6 L608.6 130.2 L608.9 127.9 L609.1 126.0 L609.4 123.2 L609.7 122.2 L609.9 119.7 L610.2 118.6 L610.4 118.4 L610.7 117.0 L610.9 117.1 L611.2 116.7 L611.5 116.9 L611.7 118.3 L612.0 119.5 L612.2 119.6 L612.5 121.7 L612.7 122.6 L613.0 124.5 L613.2 126.1 L613.5 127.6 L613.8 129.4 L614.0 131.0 L614.3 132.7 L614.5 132.9 L614.8 134.0 L615.0 134.4 L615.3 134.1 L615.5 135.0 L615.8 133.9 L616.1 134.3 L616.3 132.7 L616.6 131.6 L616.8 131.2 L617.1 129.7 L617.3 127.9 L617.6 127.1 L617.9 126.0 L618.1 125.2 L618.4 124.3 L618.6 123.1 L618.9 122.3 L619.1 122.0 L619.4 121.5 L619.6 121.5 L619.9 120.9 L620.2 121.2 L620.4 122.1 L620.7 122.7 L620.9 123.1 L621.2 124.0 L621.4 124.3 L621.7 125.9 L622.0 126.9 L622.2 127.1 L622.5 128.9 L622.7 129.1 L623.0 130.1 L623.2 130.0 L623.5 130.7 L623.7 130.7 L624.0 131.6 L624.3 130.9 L624.5 130.8 L624.8 130.6 L625.0 129.8 L625.3 129.2 L625.5 129.5 L625.8 128.7 L626.1 127.9 L626.3 127.4 L626.6 126.9 L626.8 126.0 L627.1 125.6 L627.3 124.5 L627.6 124.4 L627.8 124.5 L628.1 124.0 L628.4 123.8 L628.6 123.9 L628.9 124.3 L629.1 124.7 L629.4 125.0 L629.6 124.2 L629.9 125.0 L630.2 126.3 L630.4 126.0 L630.7 126.2 L630.9 127.2 L631.2 128.3 L631.4 128.2 L631.7 128.7 L631.9 129.3 L632.2 129.1 L632.5 130.0 L632.7 128.9 L633.0 129.3 L633.2 129.2 L633.5 128.7 L633.7 128.8 L634.0 128.9 L634.2 128.6 L634.5 128.3 L634.8 128.0 L635.0 126.6 L635.3 126.1 L635.5 126.3 L635.8 126.0 L636.0 125.1 L636.3 124.5 L636.6 124.2 L636.8 124.9 L637.1 124.0 L637.3 123.9 L637.6 124.1 L637.8 124.8 L638.1 125.2 L638.3 124.7 L638.6 125.7 L638.9 126.0 L639.1 126.3 L639.4 127.0 L639.6 126.9 L639.9 128.1 L640.1 128.9 L640.4 128.7 L640.7 129.0 L640.9 129.1 L641.2 129.5 L641.4 129.4 L641.7 129.4 L641.9 129.9 L642.2 129.7 L642.4 129.9 L642.7 129.4 L643.0 128.6 L643.2 128.7 L643.5 127.4 L643.7 127.4 L644.0 126.4 L644.2 125.1 L644.5 125.5 L644.8 125.0 L645.0 124.0 L645.3 123.8 L645.5 122.8 L645.8 123.5 L646.0 122.4 L646.3 122.4 L646.5 122.7 L646.8 123.5 L647.1 124.1 L647.3 124.3 L647.6 125.1 L647.8 126.1 L648.1 127.0 L648.3 127.8 L648.6 128.4 L648.9 129.1 L649.1 129.8 L649.4 131.4 L649.6 131.9 L649.9 132.1 L650.1 132.3 L650.4 132.7 L650.6 132.8 L650.9 132.6 L651.2 131.9 L651.4 131.0 L651.7 129.6 L651.9 128.7 L652.2 127.7 L652.4 126.4 L652.7 125.2 L653.0 124.4 L653.2 123.0 L653.5 122.8 L653.7 121.1 L654.0 120.4 L654.2 120.2 L654.5 119.5 L654.7 118.9 L655.0 119.6 L655.3 119.7 L655.5 120.8 L655.8 121.6 L656.0 122.1 L656.3 124.4 L656.5 125.7 L656.8 126.6 L657.0 128.5 L657.3 130.5 L657.6 131.3 L657.8 133.1 L658.1 134.1 L658.3 135.3 L658.6 135.9 L658.8 136.3 L659.1 136.7 L659.4 136.8 L659.6 136.2 L659.9 134.5 L660.1 133.8 L660.4 132.9 L660.6 130.3 L660.9 129.2 L661.1 127.4 L661.4 124.9 L661.7 123.2 L661.9 121.0 L662.2 119.2 L662.4 118.0 L662.7 116.4 L662.9 116.0 L663.2 115.0 L663.5 114.7 L663.7 115.6 L664.0 115.9 L664.2 117.4 L664.5 118.4 L664.7 119.7 L665.0 122.2 L665.2 124.3 L665.5 126.6 L665.8 129.9 L666.0 131.2 L666.3 133.9 L666.5 136.7 L666.8 137.7 L667.0 139.7 L667.3 141.0 L667.6 140.7 L667.8 141.3 L668.1 140.7 L668.3 140.6 L668.6 138.5 L668.8 137.6 L669.1 135.2 L669.3 132.5 L669.6 130.2 L669.9 126.6 L670.1 124.2 L670.4 121.2 L670.6 118.0 L670.9 115.9 L671.1 113.2 L671.4 111.8 L671.7 110.3 L671.9 110.0 L672.2 109.5 L672.4 110.0 L672.7 111.9 L672.9 112.8 L673.2 115.4 L673.4 117.4 L673.7 120.4 L674.0 123.4 L674.2 127.6 L674.5 130.6 L674.7 133.5 L675.0 136.3 L675.2 139.3 L675.5 142.6 L675.7 143.8 L676.0 145.7 L676.3 145.9 L676.5 145.7 L676.8 145.9 L677.0 143.7 L677.3 142.1 L677.5 140.2 L677.8 137.4 L678.1 133.8 L678.3 129.8 L678.6 126.4 L678.8 123.3 L679.1 119.7 L679.3 116.2 L679.6 112.3 L679.8 110.4 L680.1 107.9 L680.4 106.8 L680.6 105.6 L680.9 105.9 L681.1 106.9 L681.4 107.4 L681.6 109.9 L681.9 112.4 L682.2 115.5 L682.4 118.9 L682.7 124.0 L682.9 127.6 L683.2 131.9 L683.4 135.4 L683.7 138.6 L683.9 142.0 L684.2 145.8 L684.5 147.8 L684.7 148.5 L685.0 149.4 L685.2 149.7 L685.5 148.8 L685.7 147.6 L686.0 144.5 L686.3 142.2 L686.5 138.1 L686.8 134.6 L687.0 131.1 L687.3 126.4 L687.5 122.3 L687.8 117.2 L688.0 113.7 L688.3 111.0 L688.6 107.9 L688.8 105.4 L689.1 103.8 L689.3 102.9 L689.6 103.2 L689.8 104.1 L690.1 106.3 L690.4 108.0 L690.6 111.4 L690.9 115.4 L691.1 118.9 L691.4 122.6 L691.6 128.3 L691.9 132.6 L692.1 136.3 L692.4 140.8 L692.7 144.3 L692.9 147.0 L693.2 149.6 L693.4 150.7 L693.7 151.5 L693.9 150.8 L694.2 149.8 L694.5 149.2 L694.7 146.0 L695.0 142.5 L695.2 138.7 L695.5 134.6 L695.7 130.3 L696.0 125.8 L696.2 121.6 L696.5 117.3 L696.8 112.6 L697.0 109.0 L697.3 106.0 L697.5 104.0 L697.8 103.0 L698.0 101.8 L698.3 102.0 L698.5 103.4 L698.8 105.0 L699.1 108.0 L699.3 111.0 L699.6 114.9 L699.8 119.5 L700.1 123.6 L700.3 128.2 L700.6 131.9 L700.9 136.8 L701.1 140.9 L701.4 144.5 L701.6 147.4 L701.9 149.4 L702.1 151.1 L702.4 151.9 L702.6 150.5 L702.9 150.0 L703.2 148.1 L703.4 145.4 L703.7 142.5 L703.9 139.0 L704.2 135.0 L704.4 130.4 L704.7 126.0 L705.0 121.1 L705.2 117.1 L705.5 112.8 L705.7 110.3 L706.0 106.8 L706.2 105.2 L706.5 104.5 L706.7 103.9 L707.0 103.6 L707.3 104.2 L707.5 106.8 L707.8 108.8 L708.0 112.3 L708.3 115.4 L708.5 120.3 L708.8 123.9 L709.1 127.6 L709.3 132.5 L709.6 136.5 L709.8 140.3 L710.1 143.3 L710.3 145.7 L710.6 147.1 L710.8 148.8 L711.1 149.0 L711.4 149.0 L711.6 147.4 L711.9 145.3 L712.1 143.2 L712.4 140.8 L712.6 136.8 L712.9 132.9 L713.2 129.4 L713.4 126.2 L713.7 121.4 L713.9 117.7 L714.2 115.1 L714.4 112.5 L714.7 110.1 L714.9 108.0 L715.2 106.6 L715.5 106.5 L715.7 106.5 L716.0 108.4 L716.2 109.9 L716.5 111.6 L716.7 114.4 L717.0 117.8 L717.2 120.8 L717.5 124.8 L717.8 128.7 L718.0 131.7 L718.3 135.4 L718.5 137.6 L718.8 140.5 L719.0 142.3 L719.3 143.7 L719.6 145.0 L719.8 145.0 L720.1 145.2 L720.3 143.1 L720.6 142.1 L720.8 139.5 L721.1 138.3 L721.3 134.8 L721.6 131.7 L721.9 129.1 L722.1 126.2 L722.4 123.1 L722.6 120.3 L722.9 117.0 L723.1 115.6 L723.4 113.0 L723.7 112.2 L723.9 111.3 L724.2 111.1 L724.4 111.5 L724.7 112.2 L724.9 113.6 L725.2 115.7 L725.4 117.3 L725.7 120.3 L726.0 122.3 L726.2 124.9 L726.5 127.6 L726.7 130.8 L727.0 132.6 L727.2 134.5 L727.5 137.0 L727.8 138.7 L728.0 139.4 L728.3 139.5 L728.5 140.6 L728.8 140.4 L729.0 139.1 L729.3 137.7 L729.5 136.0 L729.8 134.8 L730.1 132.0 L730.3 130.7 L730.6 127.9 L730.8 126.5 L731.1 124.4 L731.3 122.3 L731.6 120.6 L731.9 118.6 L732.1 117.3 L732.4 117.0 L732.6 115.6 L732.9 116.3 L733.1 116.8 L733.4 117.4 L733.6 117.7 L733.9 118.7 L734.2 121.1 L734.4 122.9 L734.7 123.8 L734.9 126.2 L735.2 127.1 L735.4 129.4 L735.7 130.8 L736.0 132.5 L736.2 133.1 L736.5 134.5 L736.7 135.3 L737.0 134.9 L737.2 135.9 L737.5 134.8 L737.7 135.1 L738.0 133.6 L738.3 132.9 L738.5 131.2 L738.8 130.9 L739.0 128.9 L739.3 127.7 L739.5 125.7 L739.8 124.4 L740.0 123.6 L740.3 123.0 L740.6 122.1 L740.8 121.4 L741.1 120.8 L741.3 120.8 L741.6 120.8 L741.8 120.3 L742.1 120.9 L742.4 121.9 L742.6 121.8 L742.9 123.7 L743.1 124.2 L743.4 125.8 L743.6 125.9 L743.9 126.9 L744.1 128.7 L744.4 128.9 L744.7 129.6 L744.9 130.9 L745.2 131.4 L745.4 131.5 L745.7 131.2 L745.9 132.1 L746.2 131.2 L746.5 131.0 L746.7 130.7 L747.0 130.0 L747.2 129.0 L747.5 129.1 L747.7 127.5 L748.0 127.4 L748.2 126.1 L748.5 125.3 L748.8 125.5 L749.0 124.1 L749.3 123.5 L749.5 124.0 L749.8 124.1 L750.0 123.9 L750.3 122.8 L750.6 124.1 L750.8 123.3 L751.1 124.5 L751.3 124.2 L751.6 125.5 L751.8 125.9 L752.1 125.8 L752.3 127.1 L752.6 127.4 L752.9 127.2 L753.1 128.0 L753.4 128.2 L753.6 128.4 L753.9 129.9 L754.1 129.8 L754.4 129.2 L754.7 129.4 L754.9 130.1 L755.2 129.3 L755.4 129.4 L755.7 128.9 L755.9 128.9 L756.2 128.6 L756.4 126.9 L756.7 127.3 L757.0 126.1 L757.2 126.6 L757.5 125.8 L757.7 125.8 L758.0 125.1 L758.2 125.2 L758.5 124.3 L758.8 124.9 L759.0 124.1 L759.3 124.5 L759.5 125.1 L759.8 125.0 L760.0 125.1 L760.3 124.9 L760.5 126.0 L760.8 126.6 L761.1 126.1 L761.3 126.7 L761.6 127.4 L761.8 128.4 L762.1 128.9 L762.3 129.2 L762.6 129.8 L762.8 130.0 L763.1 129.6 L763.4 129.8 L763.6 129.6 L763.9 129.7 L764.1 129.9 L764.4 128.8 L764.6 128.4 L764.9 128.1 L765.2 127.6 L765.4 126.9 L765.7 125.9 L765.9 125.5 L766.2 125.1 L766.4 124.9 L766.7 124.5 L766.9 124.0 L767.2 123.0 L767.5 123.5 L767.7 123.4 L768.0 123.4 L768.2 123.8 L768.5 123.1 L768.7 124.7 L769.0 124.4 L769.3 124.7 L769.5 126.2 L769.8 126.5 L770.0 127.6 L770.3 128.5 L770.5 129.4 L770.8 130.2 L771.0 130.0 L771.3 130.6 L771.6 130.9 L771.8 132.3 L772.1 131.6 L772.3 132.1 L772.6 131.5 L772.8 131.2 L773.1 131.0 L773.4 129.4 L773.6 129.8 L773.9 127.9 L774.1 126.8 L774.4 126.1 L774.6 124.9 L774.9 123.4 L775.1 123.3 L775.4 121.9 L775.7 121.0 L775.9 120.9 L776.2 120.1 L776.4 120.3 L776.7 120.2 L776.9 120.3 L777.2 120.8 L777.5 122.0 L777.7 122.5 L778.0 123.8 L778.2 125.5 L778.5 126.4 L778.7 128.2 L779.0 128.9 L779.2 130.8 L779.5 131.8 L779.8 133.3 L780.0 134.3 L780.3 135.4 L780.5 136.0 L780.8 135.2 L781.0 135.6 L781.3 135.2 L781.5 134.5 L781.8 133.1 L782.1 132.6 L782.3 131.2 L782.6 128.7 L782.8 127.4 L783.1 125.3 L783.3 123.2 L783.6 121.4 L783.9 119.7 L784.1 119.3 L784.4 117.6 L784.6 116.1 L784.9 115.6 L785.1 116.2 L785.4 116.3 L785.6 116.7 L785.9 117.8 L786.2 118.8 L786.4 119.8 L786.7 122.0 L786.9 124.2 L787.2 126.9 L787.4 128.8 L787.7 130.4 L788.0 132.9 L788.2 135.3 L788.5 137.0 L788.7 138.1 L789.0 139.3 L789.2 140.7 L789.5 140.3 L789.7 140.4 L790.0 139.6 L790.3 138.8 L790.5 137.0 L790.8 135.1 L791.0 132.8 L791.3 130.7 L791.5 127.8 L791.8 124.6 L792.1 122.5 L792.3 119.7 L792.6 116.7 L792.8 115.1 L793.1 113.3 L793.3 112.2 L793.6 110.6 L793.8 111.3 L794.1 111.0 L794.4 111.5 L794.6 113.8 L794.9 115.4 L795.1 117.2 L795.4 120.1 L795.6 123.4 L795.9 126.9 L796.2 129.6 L796.4 132.9 L796.7 135.4 L796.9 138.7 L797.2 141.0 L797.4 142.6 L797.7 143.8 L797.9 145.2 L798.2 145.4 L798.5 144.8 L798.7 143.3 L799.0 142.6 L799.2 139.4 L799.5 137.1 L799.7 134.5 L800.0 130.7 L800.3 127.6 L800.5 124.3 L800.8 119.9 L801.0 117.0 L801.3 113.8 L801.5 111.2 L801.8 108.5 L802.0 107.2 L802.3 107.2 L802.6 106.3 L802.8 106.9 L803.1 108.1 L803.3 109.5 L803.6 112.5 L803.8 115.4 L804.1 118.3 L804.3 122.6 L804.6 126.4 L804.9 130.4 L805.1 133.9 L805.4 137.7 L805.6 141.0 L805.9 144.2 L806.1 147.0 L806.4 147.8 L806.7 148.9 L806.9 148.8 L807.2 148.2 L807.4 147.7 L807.7 145.5 L807.9 143.0 L808.2 138.8 L808.4 136.0 L808.7 132.0 L809.0 126.9 L809.2 122.9 L809.5 119.4 L809.7 114.7 L810.0 111.2 L810.2 108.5 L810.5 106.6 L810.8 104.1 L811.0 103.6 L811.3 103.2 L811.5 103.4 L811.8 105.1 L812.0 107.2 L812.3 111.0 L812.5 114.3 L812.8 117.9 L813.1 122.8 L813.3 126.0 L813.6 131.4 L813.8 135.7 L814.1 139.7 L814.3 143.4 L814.6 145.7 L814.9 148.5 L815.1 150.3 L815.4 151.3 L815.6 151.8 L815.9 150.8 L816.1 148.5 L816.4 146.2 L816.6 143.2 L816.9 140.3 L817.2 136.3 L817.4 132.1 L817.7 127.0 L817.9 122.6 L818.2 118.1 L818.4 114.0 L818.7 110.2 L819.0 107.4 L819.2 104.4 L819.5 103.4 L819.7 101.7 L820.0 102.1 L820.2 103.6 L820.5 104.9 L820.7 107.0 L821.0 110.3 L821.3 113.7 L821.5 118.1 L821.8 122.6 L822.0 126.5 L822.3 131.7 L822.5 135.6 L822.8 139.5 L823.0 143.4 L823.3 146.6 L823.6 148.4 L823.8 150.6 L824.1 150.9 L824.3 151.9 L824.6 150.6 L824.8 148.6 L825.1 146.9 L825.4 142.8 L825.6 140.2 L825.9 135.5 L826.1 131.7 L826.4 126.3 L826.6 122.3 L826.9 117.7 L827.1 114.1 L827.4 110.4 L827.7 107.4 L827.9 105.6 L828.2 104.2 L828.4 102.7 L828.7 103.6 L828.9 103.6 L829.2 106.1 L829.5 108.6 L829.7 111.7 L830.0 114.3 L830.2 118.1 L830.5 122.9 L830.7 126.9 L831.0 131.7 L831.2 134.9 L831.5 139.0 L831.8 143.0 L832.0 145.8 L832.3 147.2 L832.5 149.4 L832.8 149.0 L833.0 149.6 L833.3 148.7 L833.6 146.7 L833.8 144.7 L834.1 141.5 L834.3 138.7 L834.6 134.0 L834.8 130.8 L835.1 126.2 L835.3 123.0 L835.6 118.4 L835.9 114.7 L836.1 112.4 L836.4 110.3 L836.6 107.9 L836.9 106.4 L837.1 106.3 L837.4 106.1 L837.7 107.6 L837.9 108.6 L838.2 110.5 L838.4 113.5 L838.7 116.3 L838.9 120.4 L839.2 123.2 L839.4 127.7 L839.7 130.4 L840.0 133.7 L840.2 137.0 L840.5 140.2 L840.7 142.8 L841.0 144.4 L841.2 145.0 L841.5 145.8 L841.8 145.0 L842.0 145.2 L842.3 143.3 L842.5 140.9 L842.8 138.8 L843.0 136.0 L843.3 133.5 L843.5 130.2 L843.8 126.7 L844.1 122.7 L844.3 119.8 L844.6 117.7 L844.8 114.5 L845.1 113.6 L845.3 111.5 L845.6 110.1 L845.8 110.5 L846.1 110.0 L846.4 111.1 L846.6 113.2 L846.9 114.6 L847.1 116.6 L847.4 119.3 L847.6 121.4 L847.9 124.9 L848.2 127.0 L848.4 130.4 L848.7 133.3 L848.9 135.0 L849.2 137.7 L849.4 138.7 L849.7 139.7 L849.9 140.7 L850.2 141.1 L850.5 141.4 L850.7 140.1 L851.0 139.5 L851.2 137.3 L851.5 136.1 L851.7 133.4 L852.0 131.4 L852.3 129.0 L852.5 126.2 L852.8 124.5 L853.0 122.4 L853.3 119.4 L853.5 118.5 L853.8 116.5 L854.0 115.5 L854.3 115.4 L854.6 115.6 L854.8 115.9 L855.1 115.6 L855.3 117.5 L855.6 118.3 L855.8 119.8 L856.1 122.0 L856.4 123.4 L856.6 125.8 L856.9 127.3 L857.1 129.2 L857.4 131.1 L857.6 132.9 L857.9 134.0 L858.1 135.3 L858.4 136.1 L858.7 136.4 L858.9 135.8 L859.2 136.0 L859.4 135.0 L859.7 135.3 L859.9 133.1 L860.2 132.5 L860.5 130.7 L860.7 129.5 L861.0 127.8 L861.2 126.9 L861.5 124.8 L861.7 124.1 L862.0 122.8 L862.2 122.1 L862.5 120.8 L862.8 120.1 L863.0 120.0 L863.3 119.2 L863.5 120.4 L863.8 120.2 L864.0 121.3 L864.3 121.6 L864.5 122.3 L864.8 123.5 L865.1 125.4 L865.3 126.4 L865.6 127.1 L865.8 127.7 L866.1 129.9 L866.3 130.1 L866.6 130.7 L866.9 131.2 L867.1 132.2 L867.4 131.8 L867.6 132.3 L867.9 131.5 L868.1 132.4 L868.4 130.7 L868.6 130.8 L868.9 130.1 L869.2 129.7 L869.4 128.7 L869.7 127.2 L869.9 126.4 L870.2 126.3 L870.4 125.3 L870.7 124.9 L871.0 124.3 L871.2 123.8 L871.5 123.4 L871.7 122.4 L872.0 122.4 L872.2 122.7 L872.5 123.4" fill="none" stroke="#ff0000" stroke-width="1.0" stroke-linejoin="round" shape-rendering="crispEdges"/><path d="M1.5 155.3 L1.8 155.4 L2.2 155.8 L2.5 156.4 L2.8 157.3 L3.2 158.3 L3.5 159.6 L3.8 161.1 L4.2 162.7 L4.5 164.5 L4.8 166.3 L5.2 168.3 L5.5 170.3 L5.9 172.4 L6.2 174.4 L6.5 176.5 L6.9 178.4 L7.2 180.3 L7.5 182.1 L7.9 183.7 L8.2 185.1 L8.5 186.4 L8.9 187.5 L9.2 188.3 L9.5 188.9 L9.9 189.3 L10.2 189.4 L10.5 189.2 L10.9 188.9 L11.2 188.2 L11.5 187.4 L11.9 186.3 L12.2 185.0 L12.6 183.6 L12.9 181.9 L13.2 180.2 L13.6 178.3 L13.9 176.3 L14.2 174.3 L14.6 172.2 L14.9 170.2 L15.2 168.1 L15.6 166.2 L15.9 164.3 L16.2 162.5 L16.6 160.9 L16.9 159.5 L17.2 158.2 L17.6 157.2 L17.9 156.4 L18.2 155.8 L18.6 155.4 L18.9 155.3 L19.3 155.5 L19.6 155.8 L19.9 156.5 L20.3 157.3 L20.6 158.4 L20.9 159.7 L21.3 161.2 L21.6 162.8 L21.9 164.6 L22.3 166.5 L22.6 168.5 L22.9 170.5 L23.3 172.6 L23.6 174.6 L23.9 176.6 L24.3 178.6 L24.6 180.5 L24.9 182.2 L25.3 183.8 L25.6 185.3 L26.0 186.5 L26.3 187.5 L26.6 188.4 L27.0 188.9 L27.3 189.3 L27.6 189.4 L28.0 189.2 L28.3 188.8 L28.6 188.2 L29.0 187.3 L29.3 186.2 L29.6 184.9 L30.0 183.4 L30.3 181.8 L30.6 180.0 L31.0 178.1 L31.3 176.1 L31.6 174.1 L32.0 172.0 L32.3 170.0 L32.7 168.0 L33.0 166.0 L33.3 164.2 L33.7 162.4 L34.0 160.8 L34.3 159.4 L34.7 158.1 L35.0 157.1 L35.3 156.3 L35.7 155.7 L36.0 155.4 L36.3 155.3 L36.7 155.5 L37.0 155.9 L37.3 156.5 L37.7 157.4 L38.0 158.5 L38.3 159.8 L38.7 161.3 L39.0 163.0 L39.4 164.8 L39.7 166.7 L40.0 168.6 L40.4 170.7 L40.7 172.7 L41.0 174.8 L41.4 176.8 L41.7 178.8 L42.0 180.6 L42.4 182.4 L42.7 183.9 L43.0 185.4 L43.4 186.6 L43.7 187.6 L44.0 188.4 L44.4 189.0 L44.7 189.3 L45.0 189.4 L45.4 189.2 L45.7 188.8 L46.1 188.1 L46.4 187.2 L46.7 186.1 L47.1 184.8 L47.4 183.3 L47.7 181.6 L48.1 179.9 L48.4 178.0 L48.7 176.0 L49.1 173.9 L49.4 171.9 L49.7 169.8 L50.1 167.8 L50.4 165.9 L50.7 164.0 L51.1 162.3 L51.4 160.7 L51.7 159.3 L52.1 158.0 L52.4 157.0 L52.8 156.2 L53.1 155.7 L53.4 155.4 L53.8 155.3 L54.1 155.5 L54.4 155.9 L54.8 156.6 L55.1 157.5 L55.4 158.6 L55.8 160.0 L56.1 161.5 L56.4 163.1 L56.8 164.9 L57.1 166.8 L57.4 168.8 L57.8 170.8 L58.1 172.9 L58.4 175.0 L58.8 177.0 L59.1 178.9 L59.5 180.8 L59.8 182.5 L60.1 184.1 L60.5 185.5 L60.8 186.7 L61.1 187.7 L61.5 188.5 L61.8 189.0 L62.1 189.3 L62.5 189.4 L62.8 189.2 L63.1 188.7 L63.5 188.1 L63.8 187.1 L64.1 186.0 L64.5 184.7 L64.8 183.2 L65.1 181.5 L65.5 179.7 L65.8 177.8 L66.2 175.8 L66.5 173.8 L66.8 171.7 L67.2 169.7 L67.5 167.6 L67.8 165.7 L68.2 163.9 L68.5 162.1 L68.8 160.6 L69.2 159.2 L69.5 158.0 L69.8 157.0 L70.2 156.2 L70.5 155.7 L70.8 155.4 L71.2 155.3 L71.5 155.5 L71.8 156.0 L72.2 156.7 L72.5 157.6 L72.9 158.7 L73.2 160.1 L73.5 161.6 L73.9 163.3 L74.2 165.1 L74.5 167.0 L74.9 169.0 L75.2 171.0 L75.5 173.1 L75.9 175.1 L76.2 177.1 L76.5 179.1 L76.9 180.9 L77.2 182.6 L77.5 184.2 L77.9 185.6 L78.2 186.8 L78.5 187.8 L78.9 188.5 L79.2 189.1 L79.6 189.3 L79.9 189.4 L80.2 189.1 L80.6 188.7 L80.9 188.0 L81.2 187.1 L81.6 185.9 L81.9 184.6 L82.2 183.0 L82.6 181.4 L82.9 179.5 L83.2 177.6 L83.6 175.6 L83.9 173.6 L84.2 171.5 L84.6 169.5 L84.9 167.5 L85.2 165.5 L85.6 163.7 L85.9 162.0 L86.3 160.4 L86.6 159.1 L86.9 157.9 L87.3 156.9 L87.6 156.1 L87.9 155.6 L88.3 155.4 L88.6 155.3 L88.9 155.6 L89.3 156.0 L89.6 156.7 L89.9 157.7 L90.3 158.8 L90.6 160.2 L90.9 161.7 L91.3 163.4 L91.6 165.2 L91.9 167.1 L92.3 169.1 L92.6 171.2 L93.0 173.2 L93.3 175.3 L93.6 177.3 L94.0 179.2 L94.3 181.1 L94.6 182.8 L95.0 184.3 L95.3 185.7 L95.6 186.9 L96.0 187.8 L96.3 188.6 L96.6 189.1 L97.0 189.3 L97.3 189.4 L97.6 189.1 L98.0 188.6 L98.3 187.9 L98.6 187.0 L99.0 185.8 L99.3 184.4 L99.7 182.9 L100.0 181.2 L100.3 179.4 L100.7 177.5 L101.0 175.5 L101.3 173.4 L101.7 171.4 L102.0 169.3 L102.3 167.3 L102.7 165.4 L103.0 163.6 L103.3 161.9 L103.7 160.3 L104.0 158.9 L104.3 157.8 L104.7 156.8 L105.0 156.1 L105.3 155.6 L105.7 155.3 L106.0 155.3 L106.4 155.6 L106.7 156.1 L107.0 156.8 L107.4 157.8 L107.7 158.9 L108.0 160.3 L108.4 161.9 L108.7 163.6 L109.0 165.4 L109.4 167.3 L109.7 169.3 L110.0 171.4 L110.4 173.4 L110.7 175.5 L111.0 177.5 L111.4 179.4 L111.7 181.2 L112.0 182.9 L112.4 184.4 L112.7 185.8 L113.1 187.0 L113.4 187.9 L113.7 188.6 L114.1 189.1 L114.4 189.4 L114.7 189.3 L115.1 189.1 L115.4 188.6 L115.7 187.8 L116.1 186.9 L116.4 185.7 L116.7 184.3 L117.1 182.8 L117.4 181.1 L117.7 179.2 L118.1 177.3 L118.4 175.3 L118.7 173.3 L119.1 171.2 L119.4 169.1 L119.8 167.2 L120.1 165.2 L120.4 163.4 L120.8 161.7 L121.1 160.2 L121.4 158.8 L121.8 157.7 L122.1 156.7 L122.4 156.0 L122.8 155.6 L123.1 155.3 L123.4 155.4 L123.8 155.6 L124.1 156.1 L124.4 156.9 L124.8 157.9 L125.1 159.1 L125.4 160.4 L125.8 162.0 L126.1 163.7 L126.5 165.5 L126.8 167.5 L127.1 169.5 L127.5 171.5 L127.8 173.6 L128.1 175.6 L128.5 177.6 L128.8 179.5 L129.1 181.4 L129.5 183.0 L129.8 184.6 L130.1 185.9 L130.5 187.0 L130.8 188.0 L131.1 188.7 L131.5 189.1 L131.8 189.4 L132.1 189.3 L132.5 189.1 L132.8 188.5 L133.2 187.8 L133.5 186.8 L133.8 185.6 L134.2 184.2 L134.5 182.6 L134.8 180.9 L135.2 179.1 L135.5 177.1 L135.8 175.1 L136.2 173.1 L136.5 171.0 L136.8 169.0 L137.2 167.0 L137.5 165.1 L137.8 163.3 L138.2 161.6 L138.5 160.1 L138.8 158.7 L139.2 157.6 L139.5 156.7 L139.9 156.0 L140.2 155.5 L140.5 155.3 L140.9 155.4 L141.2 155.7 L141.5 156.2 L141.9 157.0 L142.2 158.0 L142.5 159.2 L142.9 160.6 L143.2 162.1 L143.5 163.8 L143.9 165.7 L144.2 167.6 L144.5 169.6 L144.9 171.7 L145.2 173.8 L145.5 175.8 L145.9 177.8 L146.2 179.7 L146.6 181.5 L146.9 183.2 L147.2 184.7 L147.6 186.0 L147.9 187.1 L148.2 188.0 L148.6 188.7 L148.9 189.2 L149.2 189.4 L149.6 189.3 L149.9 189.0 L150.2 188.5 L150.6 187.7 L150.9 186.7 L151.2 185.5 L151.6 184.1 L151.9 182.5 L152.2 180.8 L152.6 178.9 L152.9 177.0 L153.3 175.0 L153.6 172.9 L153.9 170.8 L154.3 168.8 L154.6 166.8 L154.9 164.9 L155.3 163.1 L155.6 161.5 L155.9 160.0 L156.3 158.6 L156.6 157.5 L156.9 156.6 L157.3 155.9 L157.6 155.5 L157.9 155.3 L158.3 155.4 L158.6 155.7 L158.9 156.2 L159.3 157.0 L159.6 158.0 L160.0 159.3 L160.3 160.7 L160.6 162.3 L161.0 164.0 L161.3 165.9 L161.6 167.8 L162.0 169.8 L162.3 171.9 L162.6 173.9 L163.0 176.0 L163.3 177.9 L163.6 179.9 L164.0 181.6 L164.3 183.3 L164.6 184.8 L165.0 186.1 L165.3 187.2 L165.6 188.1 L166.0 188.8 L166.3 189.2 L166.7 189.4 L167.0 189.3 L167.3 189.0 L167.7 188.4 L168.0 187.6 L168.3 186.6 L168.7 185.4 L169.0 183.9 L169.3 182.4 L169.7 180.6 L170.0 178.8 L170.3 176.8 L170.7 174.8 L171.0 172.7 L171.3 170.7 L171.7 168.6 L172.0 166.7 L172.3 164.8 L172.7 163.0 L173.0 161.3 L173.4 159.8 L173.7 158.5 L174.0 157.4 L174.4 156.5 L174.7 155.9 L175.0 155.5 L175.4 155.3 L175.7 155.4 L176.0 155.7 L176.4 156.3 L176.7 157.1 L177.0 158.1 L177.4 159.4 L177.7 160.8 L178.0 162.4 L178.4 164.1 L178.7 166.0 L179.0 168.0 L179.4 170.0 L179.7 172.0 L180.1 174.1 L180.4 176.1 L180.7 178.1 L181.1 180.0 L181.4 181.8 L181.7 183.4 L182.1 184.9 L182.4 186.2 L182.7 187.3 L183.1 188.2 L183.4 188.8 L183.7 189.2 L184.1 189.4 L184.4 189.3 L184.7 188.9 L185.1 188.4 L185.4 187.5 L185.7 186.5 L186.1 185.3 L186.4 183.8 L186.8 182.2 L187.1 180.5 L187.4 178.6 L187.8 176.6 L188.1 174.6 L188.4 172.6 L188.8 170.5 L189.1 168.5 L189.4 166.5 L189.8 164.6 L190.1 162.8 L190.4 161.2 L190.8 159.7 L191.1 158.4 L191.4 157.4 L191.8 156.5 L192.1 155.8 L192.4 155.5 L192.8 155.3 L193.1 155.4 L193.5 155.8 L193.8 156.4 L194.1 157.2 L194.5 158.2 L194.8 159.5 L195.1 160.9 L195.5 162.5 L195.8 164.3 L196.1 166.2 L196.5 168.1 L196.8 170.2 L197.1 172.2 L197.5 174.3 L197.8 176.3 L198.1 178.3 L198.5 180.2 L198.8 181.9 L199.1 183.6 L199.5 185.0 L199.8 186.3 L200.2 187.4 L200.5 188.2 L200.8 188.9 L201.2 189.2 L201.5 189.4 L201.8 189.3 L202.2 188.9 L202.5 188.3 L202.8 187.5 L203.2 186.4 L203.5 185.1 L203.8 183.7 L204.2 182.1 L204.5 180.3 L204.8 178.4 L205.2 176.5 L205.5 174.5 L205.8 172.4 L206.2 170.3 L206.5 168.3 L206.9 166.3 L207.2 164.5 L207.5 162.7 L207.9 161.1 L208.2 159.6 L208.5 158.3 L208.9 157.3 L209.2 156.4 L209.5 155.8 L209.9 155.4 L210.2 155.3 L210.5 155.4 L210.9 155.8 L211.2 156.4 L211.5 157.3 L211.9 158.3 L212.2 159.6 L212.5 161.1 L212.9 162.7 L213.2 164.4 L213.6 166.3 L213.9 168.3 L214.2 170.3 L214.6 172.4 L214.9 174.4 L215.2 176.5 L215.6 178.4 L215.9 180.3 L216.2 182.1 L216.6 183.7 L216.9 185.1 L217.2 186.4 L217.6 187.5 L217.9 188.3 L218.2 188.9 L218.6 189.3 L218.9 189.4 L219.2 189.2 L219.6 188.9 L219.9 188.2 L220.3 187.4 L220.6 186.3 L220.9 185.0 L221.3 183.6 L221.6 181.9 L221.9 180.2 L222.3 178.3 L222.6 176.3 L222.9 174.3 L223.3 172.2 L223.6 170.2 L223.9 168.1 L224.3 166.2 L224.6 164.3 L224.9 162.6 L225.3 160.9 L225.6 159.5 L225.9 158.2 L226.3 157.2 L226.6 156.4 L227.0 155.8 L227.3 155.4 L227.6 155.3 L228.0 155.5 L228.3 155.8 L228.6 156.5 L229.0 157.3 L229.3 158.4 L229.6 159.7 L230.0 161.2 L230.3 162.8 L230.6 164.6 L231.0 166.5 L231.3 168.5 L231.6 170.5 L232.0 172.6 L232.3 174.6 L232.6 176.6 L233.0 178.6 L233.3 180.5 L233.7 182.2 L234.0 183.8 L234.3 185.3 L234.7 186.5 L235.0 187.5 L235.3 188.4 L235.7 188.9 L236.0 189.3 L236.3 189.4 L236.7 189.2 L237.0 188.8 L237.3 188.2 L237.7 187.3 L238.0 186.2 L238.3 184.9 L238.7 183.4 L239.0 181.8 L239.3 180.0 L239.7 178.1 L240.0 176.1 L240.4 174.1 L240.7 172.1 L241.0 170.0 L241.4 168.0 L241.7 166.0 L242.0 164.2 L242.4 162.4 L242.7 160.8 L243.0 159.4 L243.4 158.1 L243.7 157.1 L244.0 156.3 L244.4 155.7 L244.7 155.4 L245.0 155.3 L245.4 155.5 L245.7 155.9 L246.0 156.5 L246.4 157.4 L246.7 158.5 L247.1 159.8 L247.4 161.3 L247.7 163.0 L248.1 164.8 L248.4 166.7 L248.7 168.6 L249.1 170.7 L249.4 172.7 L249.7 174.8 L250.1 176.8 L250.4 178.7 L250.7 180.6 L251.1 182.3 L251.4 183.9 L251.7 185.4 L252.1 186.6 L252.4 187.6 L252.7 188.4 L253.1 189.0 L253.4 189.3 L253.8 189.4 L254.1 189.2 L254.4 188.8 L254.8 188.1 L255.1 187.2 L255.4 186.1 L255.8 184.8 L256.1 183.3 L256.4 181.7 L256.8 179.9 L257.1 178.0 L257.4 176.0 L257.8 173.9 L258.1 171.9 L258.4 169.8 L258.8 167.8 L259.1 165.9 L259.4 164.0 L259.8 162.3 L260.1 160.7 L260.5 159.3 L260.8 158.1 L261.1 157.0 L261.5 156.2 L261.8 155.7 L262.1 155.4 L262.5 155.3 L262.8 155.5 L263.1 155.9 L263.5 156.6 L263.8 157.5 L264.1 158.6 L264.5 159.9 L264.8 161.5 L265.1 163.1 L265.5 164.9 L265.8 166.8 L266.1 168.8 L266.5 170.8 L266.8 172.9 L267.2 174.9 L267.5 177.0 L267.8 178.9 L268.2 180.8 L268.5 182.5 L268.8 184.1 L269.2 185.5 L269.5 186.7 L269.8 187.7 L270.2 188.5 L270.5 189.0 L270.8 189.3 L271.2 189.4 L271.5 189.2 L271.8 188.7 L272.2 188.1 L272.5 187.1 L272.8 186.0 L273.2 184.7 L273.5 183.2 L273.9 181.5 L274.2 179.7 L274.5 177.8 L274.9 175.8 L275.2 173.8 L275.5 171.7 L275.9 169.7 L276.2 167.6 L276.5 165.7 L276.9 163.9 L277.2 162.1 L277.5 160.6 L277.9 159.2 L278.2 158.0 L278.5 157.0 L278.9 156.2 L279.2 155.7 L279.5 155.4 L279.9 155.3 L280.2 155.5 L280.6 156.0 L280.9 156.7 L281.2 157.6 L281.6 158.7 L281.9 160.1 L282.2 161.6 L282.6 163.3 L282.9 165.1 L283.2 167.0 L283.6 169.0 L283.9 171.0 L284.2 173.1 L284.6 175.1 L284.9 177.1 L285.2 179.1 L285.6 180.9 L285.9 182.6 L286.2 184.2 L286.6 185.6 L286.9 186.8 L287.3 187.8 L287.6 188.5 L287.9 189.1 L288.3 189.3 L288.6 189.4 L288.9 189.2 L289.3 188.7 L289.6 188.0 L289.9 187.1 L290.3 185.9 L290.6 184.6 L290.9 183.0 L291.3 181.4 L291.6 179.6 L291.9 177.6 L292.3 175.6 L292.6 173.6 L292.9 171.5 L293.3 169.5 L293.6 167.5 L294.0 165.5 L294.3 163.7 L294.6 162.0 L295.0 160.4 L295.3 159.1 L295.6 157.9 L296.0 156.9 L296.3 156.1 L296.6 155.6 L297.0 155.4 L297.3 155.3 L297.6 155.6 L298.0 156.0 L298.3 156.7 L298.6 157.7 L299.0 158.8 L299.3 160.2 L299.6 161.7 L300.0 163.4 L300.3 165.2 L300.7 167.1 L301.0 169.1 L301.3 171.2 L301.7 173.2 L302.0 175.3 L302.3 177.3 L302.7 179.2 L303.0 181.1 L303.3 182.8 L303.7 184.3 L304.0 185.7 L304.3 186.9 L304.7 187.8 L305.0 188.6 L305.3 189.1 L305.7 189.3 L306.0 189.4 L306.3 189.1 L306.7 188.6 L307.0 187.9 L307.4 187.0 L307.7 185.8 L308.0 184.4 L308.4 182.9 L308.7 181.2 L309.0 179.4 L309.4 177.5 L309.7 175.5 L310.0 173.4 L310.4 171.4 L310.7 169.3 L311.0 167.3 L311.4 165.4 L311.7 163.6 L312.0 161.9 L312.4 160.3 L312.7 159.0 L313.0 157.8 L313.4 156.8 L313.7 156.1 L314.1 155.6 L314.4 155.3 L314.7 155.3 L315.1 155.6 L315.4 156.1 L315.7 156.8 L316.1 157.8 L316.4 158.9 L316.7 160.3 L317.1 161.9 L317.4 163.5 L317.7 165.4 L318.1 167.3 L318.4 169.3 L318.7 171.3 L319.1 173.4 L319.4 175.5 L319.7 177.5 L320.1 179.4 L320.4 181.2 L320.8 182.9 L321.1 184.4 L321.4 185.8 L321.8 187.0 L322.1 187.9 L322.4 188.6 L322.8 189.1 L323.1 189.4 L323.4 189.3 L323.8 189.1 L324.1 188.6 L324.4 187.8 L324.8 186.9 L325.1 185.7 L325.4 184.3 L325.8 182.8 L326.1 181.1 L326.4 179.2 L326.8 177.3 L327.1 175.3 L327.5 173.3 L327.8 171.2 L328.1 169.2 L328.5 167.2 L328.8 165.2 L329.1 163.4 L329.5 161.7 L329.8 160.2 L330.1 158.8 L330.5 157.7 L330.8 156.7 L331.1 156.0 L331.5 155.6 L331.8 155.3 L332.1 155.4 L332.5 155.6 L332.8 156.1 L333.1 156.9 L333.5 157.9 L333.8 159.0 L334.2 160.4 L334.5 162.0 L334.8 163.7 L335.2 165.5 L335.5 167.5 L335.8 169.5 L336.2 171.5 L336.5 173.6 L336.8 175.6 L337.2 177.6 L337.5 179.5 L337.8 181.3 L338.2 183.0 L338.5 184.6 L338.8 185.9 L339.2 187.0 L339.5 188.0 L339.8 188.7 L340.2 189.1 L340.5 189.4 L340.9 189.3 L341.2 189.1 L341.5 188.5 L341.9 187.8 L342.2 186.8 L342.5 185.6 L342.9 184.2 L343.2 182.6 L343.5 180.9 L343.9 179.1 L344.2 177.1 L344.5 175.1 L344.9 173.1 L345.2 171.0 L345.5 169.0 L345.9 167.0 L346.2 165.1 L346.5 163.3 L346.9 161.6 L347.2 160.1 L347.6 158.7 L347.9 157.6 L348.2 156.7 L348.6 156.0 L348.9 155.5 L349.2 155.3 L349.6 155.4 L349.9 155.7 L350.2 156.2 L350.6 157.0 L350.9 157.9 L351.2 159.2 L351.6 160.6 L351.9 162.1 L352.2 163.8 L352.6 165.7 L352.9 167.6 L353.2 169.6 L353.6 171.7 L353.9 173.8 L354.3 175.8 L354.6 177.8 L354.9 179.7 L355.3 181.5 L355.6 183.2 L355.9 184.7 L356.3 186.0 L356.6 187.1 L356.9 188.0 L357.3 188.7 L357.6 189.2 L357.9 189.4 L358.3 189.3 L358.6 189.0 L358.9 188.5 L359.3 187.7 L359.6 186.7 L359.9 185.5 L360.3 184.1 L360.6 182.5 L361.0 180.8 L361.3 178.9 L361.6 177.0 L362.0 175.0 L362.3 172.9 L362.6 170.9 L363.0 168.8 L363.3 166.8 L363.6 164.9 L364.0 163.1 L364.3 161.5 L364.6 160.0 L365.0 158.6 L365.3 157.5 L365.6 156.6 L366.0 155.9 L366.3 155.5 L366.6 155.3 L367.0 155.4 L367.3 155.7 L367.7 156.2 L368.0 157.0 L368.3 158.0 L368.7 159.3 L369.0 160.7 L369.3 162.3 L369.7 164.0 L370.0 165.8 L370.3 167.8 L370.7 169.8 L371.0 171.9 L371.3 173.9 L371.7 176.0 L372.0 177.9 L372.3 179.8 L372.7 181.6 L373.0 183.3 L373.3 184.8 L373.7 186.1 L374.0 187.2 L374.4 188.1 L374.7 188.8 L375.0 189.2 L375.4 189.4 L375.7 189.3 L376.0 189.0 L376.4 188.4 L376.7 187.6 L377.0 186.6 L377.4 185.4 L377.7 184.0 L378.0 182.4 L378.4 180.6 L378.7 178.8 L379.0 176.8 L379.4 174.8 L379.7 172.7 L380.0 170.7 L380.4 168.7 L380.7 166.7 L381.1 164.8 L381.4 163.0 L381.7 161.3 L382.1 159.8 L382.4 158.5 L382.7 157.4 L383.1 156.5 L383.4 155.9 L383.7 155.5 L384.1 155.3 L384.4 155.4 L384.7 155.7 L385.1 156.3 L385.4 157.1 L385.7 158.1 L386.1 159.4 L386.4 160.8 L386.7 162.4 L387.1 164.1 L387.4 166.0 L387.8 168.0 L388.1 170.0 L388.4 172.0 L388.8 174.1 L389.1 176.1 L389.4 178.1 L389.8 180.0 L390.1 181.8 L390.4 183.4 L390.8 184.9 L391.1 186.2 L391.4 187.3 L391.8 188.2 L392.1 188.8 L392.4 189.2 L392.8 189.4 L393.1 189.3 L393.4 188.9 L393.8 188.4 L394.1 187.6 L394.5 186.5 L394.8 185.3 L395.1 183.8 L395.5 182.2 L395.8 180.5 L396.1 178.6 L396.5 176.7 L396.8 174.6 L397.1 172.6 L397.5 170.5 L397.8 168.5 L398.1 166.5 L398.5 164.6 L398.8 162.8 L399.1 161.2 L399.5 159.7 L399.8 158.4 L400.1 157.4 L400.5 156.5 L400.8 155.9 L401.2 155.5 L401.5 155.3 L401.8 155.4 L402.2 155.8 L402.5 156.4 L402.8 157.2 L403.2 158.2 L403.5 159.5 L403.8 160.9 L404.2 162.5 L404.5 164.3 L404.8 166.2 L405.2 168.1 L405.5 170.1 L405.8 172.2 L406.2 174.3 L406.5 176.3 L406.8 178.3 L407.2 180.2 L407.5 181.9 L407.9 183.6 L408.2 185.0 L408.5 186.3 L408.9 187.4 L409.2 188.2 L409.5 188.9 L409.9 189.2 L410.2 189.4 L410.5 189.3 L410.9 188.9 L411.2 188.3 L411.5 187.5 L411.9 186.4 L412.2 185.2 L412.5 183.7 L412.9 182.1 L413.2 180.3 L413.5 178.4 L413.9 176.5 L414.2 174.5 L414.6 172.4 L414.9 170.3 L415.2 168.3 L415.6 166.3 L415.9 164.5 L416.2 162.7 L416.6 161.1 L416.9 159.6 L417.2 158.3 L417.6 157.3 L417.9 156.4 L418.2 155.8 L418.6 155.4 L418.9 155.3 L419.2 155.4 L419.6 155.8 L419.9 156.4 L420.2 157.3 L420.6 158.3 L420.9 159.6 L421.3 161.1 L421.6 162.7 L421.9 164.4 L422.3 166.3 L422.6 168.3 L422.9 170.3 L423.3 172.4 L423.6 174.4 L423.9 176.5 L424.3 178.4 L424.6 180.3 L424.9 182.1 L425.3 183.7 L425.6 185.1 L425.9 186.4 L426.3 187.5 L426.6 188.3 L426.9 188.9 L427.3 189.3 L427.6 189.4 L428.0 189.3 L428.3 188.9 L428.6 188.2 L429.0 187.4 L429.3 186.3 L429.6 185.0 L430.0 183.6 L430.3 181.9 L430.6 180.2 L431.0 178.3 L431.3 176.3 L431.6 174.3 L432.0 172.2 L432.3 170.2 L432.6 168.2 L433.0 166.2 L433.3 164.3 L433.6 162.6 L434.0 160.9 L434.3 159.5 L434.7 158.2 L435.0 157.2 L435.3 156.4 L435.7 155.8 L436.0 155.4 L436.3 155.3 L436.7 155.5 L437.0 155.8 L437.3 156.5 L437.7 157.3 L438.0 158.4 L438.3 159.7 L438.7 161.2 L439.0 162.8 L439.3 164.6 L439.7 166.5 L440.0 168.5 L440.3 170.5 L440.7 172.5 L441.0 174.6 L441.4 176.6 L441.7 178.6 L442.0 180.5 L442.4 182.2 L442.7 183.8 L443.0 185.2 L443.4 186.5 L443.7 187.5 L444.0 188.4 L444.4 188.9 L444.7 189.3 L445.0 189.4 L445.4 189.2 L445.7 188.8 L446.0 188.2 L446.4 187.3 L446.7 186.2 L447.0 184.9 L447.4 183.4 L447.7 181.8 L448.1 180.0 L448.4 178.1 L448.7 176.2 L449.1 174.1 L449.4 172.1 L449.7 170.0 L450.1 168.0 L450.4 166.0 L450.7 164.2 L451.1 162.4 L451.4 160.8 L451.7 159.4 L452.1 158.1 L452.4 157.1 L452.7 156.3 L453.1 155.7 L453.4 155.4 L453.7 155.3 L454.1 155.5 L454.4 155.9 L454.8 156.5 L455.1 157.4 L455.4 158.5 L455.8 159.8 L456.1 161.3 L456.4 163.0 L456.8 164.7 L457.1 166.6 L457.4 168.6 L457.8 170.7 L458.1 172.7 L458.4 174.8 L458.8 176.8 L459.1 178.7 L459.4 180.6 L459.8 182.3 L460.1 183.9 L460.4 185.4 L460.8 186.6 L461.1 187.6 L461.5 188.4 L461.8 189.0 L462.1 189.3 L462.5 189.4 L462.8 189.2 L463.1 188.8 L463.5 188.1 L463.8 187.2 L464.1 186.1 L464.5 184.8 L464.8 183.3 L465.1 181.7 L465.5 179.9 L465.8 178.0 L466.1 176.0 L466.5 173.9 L466.8 171.9 L467.1 169.8 L467.5 167.8 L467.8 165.9 L468.2 164.0 L468.5 162.3 L468.8 160.7 L469.2 159.3 L469.5 158.1 L469.8 157.0 L470.2 156.2 L470.5 155.7 L470.8 155.4 L471.2 155.3 L471.5 155.5 L471.8 155.9 L472.2 156.6 L472.5 157.5 L472.8 158.6 L473.2 159.9 L473.5 161.4 L473.8 163.1 L474.2 164.9 L474.5 166.8 L474.9 168.8 L475.2 170.8 L475.5 172.9 L475.9 174.9 L476.2 177.0 L476.5 178.9 L476.9 180.8 L477.2 182.5 L477.5 184.1 L477.9 185.5 L478.2 186.7 L478.5 187.7 L478.9 188.5 L479.2 189.0 L479.5 189.3 L479.9 189.4 L480.2 189.2 L480.5 188.7 L480.9 188.1 L481.2 187.1 L481.6 186.0 L481.9 184.7 L482.2 183.2 L482.6 181.5 L482.9 179.7 L483.2 177.8 L483.6 175.8 L483.9 173.8 L484.2 171.7 L484.6 169.7 L484.9 167.7 L485.2 165.7 L485.6 163.9 L485.9 162.1 L486.2 160.6 L486.6 159.2 L486.9 158.0 L487.2 157.0 L487.6 156.2 L487.9 155.7 L488.3 155.4 L488.6 155.3 L488.9 155.5 L489.3 156.0 L489.6 156.7 L489.9 157.6 L490.3 158.7 L490.6 160.1 L490.9 161.6 L491.3 163.3 L491.6 165.1 L491.9 167.0 L492.3 169.0 L492.6 171.0 L492.9 173.1 L493.3 175.1 L493.6 177.1 L493.9 179.1 L494.3 180.9 L494.6 182.6 L495.0 184.2 L495.3 185.6 L495.6 186.8 L496.0 187.8 L496.3 188.5 L496.6 189.1 L497.0 189.3 L497.3 189.4 L497.6 189.2 L498.0 188.7 L498.3 188.0 L498.6 187.1 L499.0 185.9 L499.3 184.6 L499.6 183.0 L500.0 181.4 L500.3 179.6 L500.6 177.6 L501.0 175.6 L501.3 173.6 L501.7 171.5 L502.0 169.5 L502.3 167.5 L502.7 165.6 L503.0 163.7 L503.3 162.0 L503.7 160.4 L504.0 159.1 L504.3 157.9 L504.7 156.9 L505.0 156.1 L505.3 155.6 L505.7 155.4 L506.0 155.3 L506.3 155.6 L506.7 156.0 L507.0 156.7 L507.3 157.7 L507.7 158.8 L508.0 160.2 L508.3 161.7 L508.7 163.4 L509.0 165.2 L509.4 167.1 L509.7 169.1 L510.0 171.2 L510.4 173.2 L510.7 175.3 L511.0 177.3 L511.4 179.2 L511.7 181.0 L512.0 182.8 L512.4 184.3 L512.7 185.7 L513.0 186.9 L513.4 187.8 L513.7 188.6 L514.0 189.1 L514.4 189.3 L514.7 189.4 L515.0 189.1 L515.4 188.6 L515.7 187.9 L516.1 187.0 L516.4 185.8 L516.7 184.5 L517.1 182.9 L517.4 181.2 L517.7 179.4 L518.1 177.5 L518.4 175.5 L518.7 173.4 L519.1 171.4 L519.4 169.3 L519.7 167.3 L520.1 165.4 L520.4 163.6 L520.7 161.9 L521.1 160.3 L521.4 159.0 L521.7 157.8 L522.1 156.8 L522.4 156.1 L522.8 155.6 L523.1 155.3 L523.4 155.3 L523.8 155.6 L524.1 156.1 L524.4 156.8 L524.8 157.8 L525.1 158.9 L525.4 160.3 L525.8 161.8 L526.1 163.5 L526.4 165.4 L526.8 167.3 L527.1 169.3 L527.4 171.3 L527.8 173.4 L528.1 175.4 L528.4 177.4 L528.8 179.4 L529.1 181.2 L529.5 182.9 L529.8 184.4 L530.1 185.8 L530.5 187.0 L530.8 187.9 L531.1 188.6 L531.5 189.1 L531.8 189.4 L532.1 189.3 L532.5 189.1 L532.8 188.6 L533.1 187.8 L533.5 186.9 L533.8 185.7 L534.1 184.3 L534.5 182.8 L534.8 181.1 L535.1 179.2 L535.5 177.3 L535.8 175.3 L536.2 173.3 L536.5 171.2 L536.8 169.2 L537.2 167.2 L537.5 165.2 L537.8 163.4 L538.2 161.7 L538.5 160.2 L538.8 158.9 L539.2 157.7 L539.5 156.8 L539.8 156.0 L540.2 155.6 L540.5 155.3 L540.8 155.4 L541.2 155.6 L541.5 156.1 L541.8 156.9 L542.2 157.9 L542.5 159.0 L542.9 160.4 L543.2 162.0 L543.5 163.7 L543.9 165.5 L544.2 167.5 L544.5 169.5 L544.9 171.5 L545.2 173.6 L545.5 175.6 L545.9 177.6 L546.2 179.5 L546.5 181.3 L546.9 183.0 L547.2 184.5 L547.5 185.9 L547.9 187.0 L548.2 188.0 L548.5 188.7 L548.9 189.1 L549.2 189.4 L549.6 189.3 L549.9 189.1 L550.2 188.5 L550.6 187.8 L550.9 186.8 L551.2 185.6 L551.6 184.2 L551.9 182.6 L552.2 180.9 L552.6 179.1 L552.9 177.2 L553.2 175.1 L553.6 173.1 L553.9 171.0 L554.2 169.0 L554.6 167.0 L554.9 165.1 L555.2 163.3 L555.6 161.6 L555.9 160.1 L556.3 158.7 L556.6 157.6 L556.9 156.7 L557.3 156.0 L557.6 155.5 L557.9 155.3 L558.3 155.4 L558.6 155.7 L558.9 156.2 L559.3 157.0 L559.6 157.9 L559.9 159.1 L560.3 160.5 L560.6 162.1 L560.9 163.8 L561.3 165.7 L561.6 167.6 L561.9 169.6 L562.3 171.7 L562.6 173.7 L563.0 175.8 L563.3 177.8 L563.6 179.7 L564.0 181.5 L564.3 183.2 L564.6 184.7 L565.0 186.0 L565.3 187.1 L565.6 188.0 L566.0 188.7 L566.3 189.2 L566.6 189.4 L567.0 189.3 L567.3 189.0 L567.6 188.5 L568.0 187.7 L568.3 186.7 L568.6 185.5 L569.0 184.1 L569.3 182.5 L569.7 180.8 L570.0 178.9 L570.3 177.0 L570.7 175.0 L571.0 172.9 L571.3 170.9 L571.7 168.8 L572.0 166.8 L572.3 164.9 L572.7 163.1 L573.0 161.5 L573.3 160.0 L573.7 158.6 L574.0 157.5 L574.3 156.6 L574.7 155.9 L575.0 155.5 L575.3 155.3 L575.7 155.4 L576.0 155.7 L576.4 156.2 L576.7 157.0 L577.0 158.0 L577.4 159.3 L577.7 160.7 L578.0 162.3 L578.4 164.0 L578.7 165.8 L579.0 167.8 L579.4 169.8 L579.7 171.9 L580.0 173.9 L580.4 176.0 L580.7 177.9 L581.0 179.8 L581.4 181.6 L581.7 183.3 L582.0 184.8 L582.4 186.1 L582.7 187.2 L583.1 188.1 L583.4 188.8 L583.7 189.2 L584.1 189.4 L584.4 189.3 L584.7 189.0 L585.1 188.4 L585.4 187.6 L585.7 186.6 L586.1 185.4 L586.4 184.0 L586.7 182.4 L587.1 180.6 L587.4 178.8 L587.7 176.8 L588.1 174.8 L588.4 172.8 L588.7 170.7 L589.1 168.7 L589.4 166.7 L589.8 164.8 L590.1 163.0 L590.4 161.3 L590.8 159.9 L591.1 158.5 L591.4 157.4 L591.8 156.6 L592.1 155.9 L592.4 155.5 L592.8 155.3 L593.1 155.4 L593.4 155.7 L593.8 156.3 L594.1 157.1 L594.4 158.1 L594.8 159.4 L595.1 160.8 L595.4 162.4 L595.8 164.1 L596.1 166.0 L596.5 168.0 L596.8 170.0 L597.1 172.0 L597.5 174.1 L597.8 176.1 L598.1 178.1 L598.5 180.0 L598.8 181.8 L599.1 183.4 L599.5 184.9 L599.8 186.2 L600.1 187.3 L600.5 188.2 L600.8 188.8 L601.1 189.2 L601.5 189.4 L601.8 189.3 L602.1 189.0 L602.5 188.4 L602.8 187.6 L603.2 186.5 L603.5 185.3 L603.8 183.8 L604.2 182.2 L604.5 180.5 L604.8 178.6 L605.2 176.7 L605.5 174.6 L605.8 172.6 L606.2 170.5 L606.5 168.5 L606.8 166.5 L607.2 164.6 L607.5 162.8 L607.8 161.2 L608.2 159.7 L608.5 158.4 L608.8 157.4 L609.2 156.5 L609.5 155.9 L609.9 155.5 L610.2 155.3 L610.5 155.4 L610.9 155.8 L611.2 156.4 L611.5 157.2 L611.9 158.2 L612.2 159.5 L612.5 160.9 L612.9 162.5 L613.2 164.3 L613.5 166.2 L613.9 168.1 L614.2 170.1 L614.5 172.2 L614.9 174.3 L615.2 176.3 L615.5 178.3 L615.9 180.1 L616.2 181.9 L616.6 183.5 L616.9 185.0 L617.2 186.3 L617.6 187.4 L617.9 188.2 L618.2 188.9 L618.6 189.2 L618.9 189.4 L619.2 189.3 L619.6 188.9 L619.9 188.3 L620.2 187.5 L620.6 186.4 L620.9 185.2 L621.2 183.7 L621.6 182.1 L621.9 180.3 L622.2 178.5 L622.6 176.5 L622.9 174.5 L623.3 172.4 L623.6 170.4 L623.9 168.3 L624.3 166.4 L624.6 164.5 L624.9 162.7 L625.3 161.1 L625.6 159.6 L625.9 158.3 L626.3 157.3 L626.6 156.4 L626.9 155.8 L627.3 155.4 L627.6 155.3 L627.9 155.4 L628.3 155.8 L628.6 156.4 L628.9 157.3 L629.3 158.3 L629.6 159.6 L630.0 161.1 L630.3 162.7 L630.6 164.4 L631.0 166.3 L631.3 168.3 L631.6 170.3 L632.0 172.4 L632.3 174.4 L632.6 176.5 L633.0 178.4 L633.3 180.3 L633.6 182.1 L634.0 183.7 L634.3 185.1 L634.6 186.4 L635.0 187.5 L635.3 188.3 L635.6 188.9 L636.0 189.3 L636.3 189.4 L636.7 189.3 L637.0 188.9 L637.3 188.2 L637.7 187.4 L638.0 186.3 L638.3 185.0 L638.7 183.6 L639.0 181.9 L639.3 180.2 L639.7 178.3 L640.0 176.3 L640.3 174.3 L640.7 172.2 L641.0 170.2 L641.3 168.2 L641.7 166.2 L642.0 164.3 L642.3 162.6 L642.7 161.0 L643.0 159.5 L643.4 158.2 L643.7 157.2 L644.0 156.4 L644.4 155.8 L644.7 155.4 L645.0 155.3 L645.4 155.5 L645.7 155.8 L646.0 156.5 L646.4 157.3 L646.7 158.4 L647.0 159.7 L647.4 161.2 L647.7 162.8 L648.0 164.6 L648.4 166.5 L648.7 168.5 L649.0 170.5 L649.4 172.5 L649.7 174.6 L650.1 176.6 L650.4 178.6 L650.7 180.4 L651.1 182.2 L651.4 183.8 L651.7 185.2 L652.1 186.5 L652.4 187.5 L652.7 188.4 L653.1 188.9 L653.4 189.3 L653.7 189.4 L654.1 189.2 L654.4 188.8 L654.7 188.2 L655.1 187.3 L655.4 186.2 L655.7 184.9 L656.1 183.4 L656.4 181.8 L656.8 180.0 L657.1 178.1 L657.4 176.2 L657.8 174.1 L658.1 172.1 L658.4 170.0 L658.8 168.0 L659.1 166.0 L659.4 164.2 L659.8 162.4 L660.1 160.8 L660.4 159.4 L660.8 158.2 L661.1 157.1 L661.4 156.3 L661.8 155.7 L662.1 155.4 L662.4 155.3 L662.8 155.5 L663.1 155.9 L663.5 156.5 L663.8 157.4 L664.1 158.5 L664.5 159.8 L664.8 161.3 L665.1 163.0 L665.5 164.7 L665.8 166.6 L666.1 168.6 L666.5 170.7 L666.8 172.7 L667.1 174.8 L667.5 176.8 L667.8 178.7 L668.1 180.6 L668.5 182.3 L668.8 183.9 L669.1 185.4 L669.5 186.6 L669.8 187.6 L670.2 188.4 L670.5 189.0 L670.8 189.3 L671.2 189.4 L671.5 189.2 L671.8 188.8 L672.2 188.1 L672.5 187.2 L672.8 186.1 L673.2 184.8 L673.5 183.3 L673.8 181.7 L674.2 179.9 L674.5 178.0 L674.8 176.0 L675.2 174.0 L675.5 171.9 L675.8 169.8 L676.2 167.8 L676.5 165.9 L676.9 164.0 L677.2 162.3 L677.5 160.7 L677.9 159.3 L678.2 158.1 L678.5 157.0 L678.9 156.3 L679.2 155.7 L679.5 155.4 L679.9 155.3 L680.2 155.5 L680.5 155.9 L680.9 156.6 L681.2 157.5 L681.5 158.6 L681.9 159.9 L682.2 161.4 L682.5 163.1 L682.9 164.9 L683.2 166.8 L683.6 168.8 L683.9 170.8 L684.2 172.9 L684.6 174.9 L684.9 176.9 L685.2 178.9 L685.6 180.7 L685.9 182.5 L686.2 184.1 L686.6 185.5 L686.9 186.7 L687.2 187.7 L687.6 188.5 L687.9 189.0 L688.2 189.3 L688.6 189.4 L688.9 189.2 L689.2 188.7 L689.6 188.1 L689.9 187.1 L690.3 186.0 L690.6 184.7 L690.9 183.2 L691.3 181.5 L691.6 179.7 L691.9 177.8 L692.3 175.8 L692.6 173.8 L692.9 171.7 L693.3 169.7 L693.6 167.7 L693.9 165.7 L694.3 163.9 L694.6 162.1 L694.9 160.6 L695.3 159.2 L695.6 158.0 L695.9 157.0 L696.3 156.2 L696.6 155.7 L697.0 155.4 L697.3 155.3 L697.6 155.5 L698.0 156.0 L698.3 156.7 L698.6 157.6 L699.0 158.7 L699.3 160.1 L699.6 161.6 L700.0 163.2 L700.3 165.1 L700.6 167.0 L701.0 169.0 L701.3 171.0 L701.6 173.1 L702.0 175.1 L702.3 177.1 L702.6 179.1 L703.0 180.9 L703.3 182.6 L703.7 184.2 L704.0 185.6 L704.3 186.8 L704.7 187.8 L705.0 188.5 L705.3 189.1 L705.7 189.3 L706.0 189.4 L706.3 189.2 L706.7 188.7 L707.0 188.0 L707.3 187.1 L707.7 185.9 L708.0 184.6 L708.3 183.1 L708.7 181.4 L709.0 179.6 L709.3 177.6 L709.7 175.7 L710.0 173.6 L710.4 171.6 L710.7 169.5 L711.0 167.5 L711.4 165.6 L711.7 163.7 L712.0 162.0 L712.4 160.5 L712.7 159.1 L713.0 157.9 L713.4 156.9 L713.7 156.1 L714.0 155.6 L714.4 155.4 L714.7 155.3 L715.0 155.6 L715.4 156.0 L715.7 156.7 L716.0 157.7 L716.4 158.8 L716.7 160.2 L717.1 161.7 L717.4 163.4 L717.7 165.2 L718.1 167.1 L718.4 169.1 L718.7 171.2 L719.1 173.2 L719.4 175.3 L719.7 177.3 L720.1 179.2 L720.4 181.0 L720.7 182.7 L721.1 184.3 L721.4 185.7 L721.7 186.9 L722.1 187.8 L722.4 188.6 L722.7 189.1 L723.1 189.3 L723.4 189.4 L723.8 189.1 L724.1 188.6 L724.4 187.9 L724.8 187.0 L725.1 185.8 L725.4 184.5 L725.8 182.9 L726.1 181.2 L726.4 179.4 L726.8 177.5 L727.1 175.5 L727.4 173.4 L727.8 171.4 L728.1 169.3 L728.4 167.3 L728.8 165.4 L729.1 163.6 L729.4 161.9 L729.8 160.3 L730.1 159.0 L730.5 157.8 L730.8 156.8 L731.1 156.1 L731.5 155.6 L731.8 155.3 L732.1 155.3 L732.5 155.6 L732.8 156.1 L733.1 156.8 L733.5 157.8 L733.8 158.9 L734.1 160.3 L734.5 161.8 L734.8 163.5 L735.1 165.4 L735.5 167.3 L735.8 169.3 L736.1 171.3 L736.5 173.4 L736.8 175.4 L737.2 177.4 L737.5 179.4 L737.8 181.2 L738.2 182.9 L738.5 184.4 L738.8 185.8 L739.2 187.0 L739.5 187.9 L739.8 188.6 L740.2 189.1 L740.5 189.4 L740.8 189.3 L741.2 189.1 L741.5 188.6 L741.8 187.9 L742.2 186.9 L742.5 185.7 L742.8 184.3 L743.2 182.8 L743.5 181.1 L743.9 179.3 L744.2 177.3 L744.5 175.3 L744.9 173.3 L745.2 171.2 L745.5 169.2 L745.9 167.2 L746.2 165.2 L746.5 163.4 L746.9 161.7 L747.2 160.2 L747.5 158.9 L747.9 157.7 L748.2 156.8 L748.5 156.0 L748.9 155.6 L749.2 155.3 L749.5 155.3 L749.9 155.6 L750.2 156.1 L750.6 156.9 L750.9 157.9 L751.2 159.0 L751.6 160.4 L751.9 162.0 L752.2 163.7 L752.6 165.5 L752.9 167.5 L753.2 169.5 L753.6 171.5 L753.9 173.6 L754.2 175.6 L754.6 177.6 L754.9 179.5 L755.2 181.3 L755.6 183.0 L755.9 184.5 L756.2 185.9 L756.6 187.0 L756.9 188.0 L757.3 188.7 L757.6 189.1 L757.9 189.4 L758.3 189.3 L758.6 189.1 L758.9 188.5 L759.3 187.8 L759.6 186.8 L759.9 185.6 L760.3 184.2 L760.6 182.6 L760.9 180.9 L761.3 179.1 L761.6 177.2 L761.9 175.1 L762.3 173.1 L762.6 171.0 L762.9 169.0 L763.3 167.0 L763.6 165.1 L764.0 163.3 L764.3 161.6 L764.6 160.1 L765.0 158.8 L765.3 157.6 L765.6 156.7 L766.0 156.0 L766.3 155.5 L766.6 155.3 L767.0 155.4 L767.3 155.6 L767.6 156.2 L768.0 156.9 L768.3 157.9 L768.6 159.1 L769.0 160.5 L769.3 162.1 L769.6 163.8 L770.0 165.7 L770.3 167.6 L770.7 169.6 L771.0 171.7 L771.3 173.7 L771.7 175.8 L772.0 177.8 L772.3 179.7 L772.7 181.5 L773.0 183.2 L773.3 184.7 L773.7 186.0 L774.0 187.1 L774.3 188.0 L774.7 188.7 L775.0 189.2 L775.3 189.4 L775.7 189.3 L776.0 189.0 L776.3 188.5 L776.7 187.7 L777.0 186.7 L777.4 185.5 L777.7 184.1 L778.0 182.5 L778.4 180.8 L778.7 178.9 L779.0 177.0 L779.4 175.0 L779.7 172.9 L780.0 170.9 L780.4 168.8 L780.7 166.8 L781.0 164.9 L781.4 163.1 L781.7 161.5 L782.0 160.0 L782.4 158.6 L782.7 157.5 L783.0 156.6 L783.4 155.9 L783.7 155.5 L784.1 155.3 L784.4 155.4 L784.7 155.7 L785.1 156.2 L785.4 157.0 L785.7 158.0 L786.1 159.3 L786.4 160.7 L786.7 162.2 L787.1 164.0 L787.4 165.8 L787.7 167.8 L788.1 169.8 L788.4 171.8 L788.7 173.9 L789.1 175.9 L789.4 177.9 L789.7 179.8 L790.1 181.6 L790.4 183.3 L790.8 184.8 L791.1 186.1 L791.4 187.2 L791.8 188.1 L792.1 188.8 L792.4 189.2 L792.8 189.4 L793.1 189.3 L793.4 189.0 L793.8 188.4 L794.1 187.6 L794.4 186.6 L794.8 185.4 L795.1 184.0 L795.4 182.4 L795.8 180.6 L796.1 178.8 L796.4 176.8 L796.8 174.8 L797.1 172.8 L797.5 170.7 L797.8 168.7 L798.1 166.7 L798.5 164.8 L798.8 163.0 L799.1 161.3 L799.5 159.9 L799.8 158.5 L800.1 157.4 L800.5 156.6 L800.8 155.9 L801.1 155.5 L801.5 155.3 L801.8 155.4 L802.1 155.7 L802.5 156.3 L802.8 157.1 L803.1 158.1 L803.5 159.4 L803.8 160.8 L804.2 162.4 L804.5 164.1 L804.8 166.0 L805.2 167.9 L805.5 170.0 L805.8 172.0 L806.2 174.1 L806.5 176.1 L806.8 178.1 L807.2 180.0 L807.5 181.8 L807.8 183.4 L808.2 184.9 L808.5 186.2 L808.8 187.3 L809.2 188.2 L809.5 188.8 L809.8 189.2 L810.2 189.4 L810.5 189.3 L810.9 189.0 L811.2 188.4 L811.5 187.6 L811.9 186.5 L812.2 185.3 L812.5 183.8 L812.9 182.2 L813.2 180.5 L813.5 178.6 L813.9 176.7 L814.2 174.6 L814.5 172.6 L814.9 170.5 L815.2 168.5 L815.5 166.5 L815.9 164.6 L816.2 162.9 L816.5 161.2 L816.9 159.7 L817.2 158.4 L817.6 157.4 L817.9 156.5 L818.2 155.9 L818.6 155.5 L818.9 155.3 L819.2 155.4 L819.6 155.8 L819.9 156.4 L820.2 157.2 L820.6 158.2 L820.9 159.5 L821.2 160.9 L821.6 162.5 L821.9 164.3 L822.2 166.2 L822.6 168.1 L822.9 170.1 L823.2 172.2 L823.6 174.2 L823.9 176.3 L824.3 178.3 L824.6 180.1 L824.9 181.9 L825.3 183.5 L825.6 185.0 L825.9 186.3 L826.3 187.4 L826.6 188.2 L826.9 188.9 L827.3 189.2 L827.6 189.4 L827.9 189.3 L828.3 188.9 L828.6 188.3 L828.9 187.5 L829.3 186.4 L829.6 185.2 L829.9 183.7 L830.3 182.1 L830.6 180.3 L831.0 178.5 L831.3 176.5 L831.6 174.5 L832.0 172.4 L832.3 170.4 L832.6 168.3 L833.0 166.4 L833.3 164.5 L833.6 162.7 L834.0 161.1 L834.3 159.6 L834.6 158.3 L835.0 157.3 L835.3 156.4 L835.6 155.8 L836.0 155.4 L836.3 155.3 L836.6 155.4 L837.0 155.8 L837.3 156.4 L837.7 157.3 L838.0 158.3 L838.3 159.6 L838.7 161.0 L839.0 162.7 L839.3 164.4 L839.7 166.3 L840.0 168.3 L840.3 170.3 L840.7 172.4 L841.0 174.4 L841.3 176.4 L841.7 178.4 L842.0 180.3 L842.3 182.1 L842.7 183.7 L843.0 185.1 L843.3 186.4 L843.7 187.5 L844.0 188.3 L844.4 188.9 L844.7 189.3 L845.0 189.4 L845.4 189.3 L845.7 188.9 L846.0 188.3 L846.4 187.4 L846.7 186.3 L847.0 185.0 L847.4 183.6 L847.7 182.0 L848.0 180.2 L848.4 178.3 L848.7 176.3 L849.0 174.3 L849.4 172.2 L849.7 170.2 L850.0 168.2 L850.4 166.2 L850.7 164.3 L851.1 162.6 L851.4 161.0 L851.7 159.5 L852.1 158.3 L852.4 157.2 L852.7 156.4 L853.1 155.8 L853.4 155.4 L853.7 155.3 L854.1 155.5 L854.4 155.8 L854.7 156.5 L855.1 157.3 L855.4 158.4 L855.7 159.7 L856.1 161.2 L856.4 162.8 L856.7 164.6 L857.1 166.5 L857.4 168.4 L857.8 170.5 L858.1 172.5 L858.4 174.6 L858.8 176.6 L859.1 178.6 L859.4 180.4 L859.8 182.2 L860.1 183.8 L860.4 185.2 L860.8 186.5 L861.1 187.5 L861.4 188.4 L861.8 188.9 L862.1 189.3 L862.4 189.4 L862.8 189.2 L863.1 188.8 L863.4 188.2 L863.8 187.3 L864.1 186.2 L864.5 184.9 L864.8 183.5 L865.1 181.8 L865.5 180.0 L865.8 178.1 L866.1 176.2 L866.5 174.1 L866.8 172.1 L867.1 170.0 L867.5 168.0 L867.8 166.0 L868.1 164.2 L868.5 162.4 L868.8 160.8 L869.1 159.4 L869.5 158.2 L869.8 157.1 L870.1 156.3 L870.5 155.7 L870.8 155.4 L871.2 155.3 L871.5 155.5 L871.8 155.9 L872.2 156.5 L872.5 157.4" fill="none" stroke="#0000ff" stroke-width="1.1" stroke-linejoin="round" shape-rendering="crispEdges"/><path d="M1 213V243M2 208V225M3 222V243M4 208V228M5 208V243M6 216V243M7 208V243M8 208V243M9 220V230M10 208V243M11 216V243M12 208V230M13 222V243M14 208V226M15 208V243M16 211V243M17 208V243M18 208V234M19 209V243M20 208V241M21 210V243M22 208V234M23 218V243M24 208V238M25 218V243M26 208V239M27 211V243M28 208V243M29 208V241M30 211V243M31 208V239M32 216V243M33 208V233M34 222V243M35 208V243M36 208V238M37 222V230M38 208V243M39 208V236M40 216V243M41 208V227M42 208V243M43 208V238M44 222V243M45 208V233M46 208V243M47 212V243M48 208V238M49 214V243M50 208V243M51 208V243M52 216V235M53 208V243M54 217V231M55 208V243M56 208V228M57 212V243M58 208V228M59 210V243M60 208V243M61 216V240M62 208V243M63 209V243M64 208V243M65 208V243M66 208V242M67 208V243M68 208V243M69 217V241M70 208V243M71 208V243M72 209V243M73 215V243M74 208V243M75 214V226M76 208V239M77 208V243M78 208V243M79 211V243M80 208V243M81 208V229M82 208V243M83 213V235M84 208V239M85 208V243M86 219V240M87 208V243M88 215V229M89 208V243M90 218V234M91 208V243M92 221V238M93 208V243M94 213V243M95 208V227M96 208V243M97 208V241M98 212V243M99 208V243M100 211V243M101 208V238M102 208V243M103 208V242M104 208V243M105 208V243M106 208V243M107 208V237M108 210V243M109 208V243M110 217V243M111 208V243M112 208V243M113 214V243M114 208V233M115 209V243M116 208V243M117 218V232M118 211V243M119 208V243M120 215V243M121 208V229M122 208V243M123 208V243M124 210V241M125 208V243M126 208V243M127 208V243M128 208V243M129 208V243M130 223V243M131 208V229M132 221V243M133 208V243M134 208V227M135 208V243M136 208V241M137 208V241M138 208V243M139 208V239M140 213V243M141 208V241M142 208V243M143 208V243M144 213V243M145 208V243M146 208V243M147 208V243M148 211V243M149 208V243M150 208V239M151 223V243M152 208V230M153 208V243M154 209V240M155 208V243M156 208V243M157 209V243M158 208V232M159 208V243M160 213V243M161 208V243M162 218V243M163 208V241M164 210V241M165 208V243M166 208V243M167 208V243M168 208V239M169 208V243M170 208V238M171 208V243M172 208V243M173 208V233M174 209V243M175 208V228M176 208V243M177 208V243M178 208V243M179 208V243M180 212V243M181 208V229M182 223V243M183 208V238M184 222V243M185 208V243M186 208V243M187 208V243M188 209V243M189 223V227M190 208V243M191 216V227M192 208V243M193 208V243M194 209V235M195 217V243M196 214V243M197 208V242M198 209V243M199 208V243M200 209V233M201 208V243M202 216V242M203 208V243M204 212V241M205 208V243M206 216V243M207 208V243M208 210V239M209 214V243M210 208V240M211 217V243M212 221V243M213 208V243M214 210V243M215 208V235M216 219V243M217 208V243M218 217V240M219 208V243M220 222V243M221 208V227M222 219V243M223 217V243M224 208V236M225 208V231M226 210V243M227 208V235M228 208V243M229 208V235M230 223V243M231 208V243M232 215V234M233 208V243M234 217V229M235 208V243M236 208V234M237 208V243M238 208V242M239 214V243M240 214V239M241 208V243M242 208V240M243 208V243M244 213V243M245 208V236M246 208V243M247 208V243M248 208V243M249 208V240M250 208V243M251 210V243M252 208V243M253 210V243M254 208V243M255 208V235M256 208V243M257 222V243M258 208V243M259 209V243M260 208V243M261 211V233M262 208V243M263 222V242M264 208V243M265 208V243M266 217V243M267 208V243M268 210V243M269 208V243M270 211V243M271 208V243M272 208V243M273 208V234M274 208V243M275 222V243M276 208V239M277 208V243M278 209V241M279 208V243M280 208V243M281 209V243M282 217V225M283 208V242M284 210V243M285 208V243M286 220V243M287 208V243M288 209V226M289 208V231M290 208V243M291 211V238M292 208V243M293 215V243M294 208V243M295 209V243M296 208V227M297 209V243M298 208V243M299 209V227M300 208V243M301 208V227M302 217V236M303 208V243M304 210V230M305 208V243M306 209V239M307 208V243M308 208V227M309 220V243M310 208V243M311 208V228M312 208V243M313 208V243M314 212V240M315 208V242M316 222V241M317 208V243M318 210V243M319 208V241M320 213V243M321 208V243M322 208V229M323 208V243M324 209V243M325 208V230M326 210V243M327 208V243M328 208V243M329 217V243M330 208V241M331 208V243M332 208V243M333 208V225M334 208V243M335 218V241M336 208V243M337 208V243M338 208V243M339 208V236M340 208V243M341 218V235M342 208V243M343 208V225M344 223V243M345 208V243M346 208V243M347 208V243M348 223V243M349 208V242M350 212V243M351 215V243M352 208V232M353 221V243M354 208V243M355 221V243M356 208V243M357 208V238M358 208V243M359 217V243M360 208V243M361 208V243M362 212V243M363 208V225M364 208V243M365 221V243M366 208V243M367 208V227M368 217V243M369 208V243M370 220V229M371 208V243M372 208V243M373 220V243M374 208V242M375 208V243M376 208V243M377 214V243M378 208V243M379 216V243M380 208V238M381 210V243M382 208V243M383 208V235M384 208V243M385 223V229M386 208V243M387 208V243M388 219V243M389 208V243M390 208V236M391 208V243M392 215V243M393 208V243M394 216V242M395 208V225M396 219V243M397 208V243M398 220V239M399 208V243M400 217V243M401 208V243M402 220V227M403 208V243M404 208V243M405 208V243M406 223V243M407 208V225M408 211V243M409 208V243M410 208V242M411 212V243M412 208V242M413 217V243M414 208V229M415 208V243M416 213V230M417 208V243M418 218V242M419 208V239M420 223V243M421 213V243M422 208V227M423 211V243M424 208V243M425 209V227M426 208V240M427 208V243M428 218V231M429 208V243M430 208V243M431 209V243M432 208V243M433 212V243M434 208V243M435 212V243M436 208V225M437 220V227M438 208V243M439 208V243M440 208V243M441 215V243M442 208V229M443 208V243M444 216V243M445 208V243M446 208V233M447 216V243M448 208V243M449 208V243M450 208V243M451 212V229M452 208V243M453 208V243M454 214V242M455 208V243M456 208V243M457 217V227M458 208V235M459 208V243M460 208V226M461 208V243M462 208V227M463 211V243M464 208V225M465 208V243M466 218V243M467 208V243M468 209V243M469 208V231M470 208V229M471 209V243M472 208V241M473 216V243M474 216V243M475 208V243M476 208V243M477 210V243M478 208V243M479 220V243M480 208V230M481 214V243M482 208V243M483 208V229M484 209V243M485 208V243M486 217V233M487 208V243M488 219V243M489 208V243M490 208V228M491 222V243M492 208V243M493 215V243M494 208V242M495 213V243M496 208V242M497 208V243M498 208V239M499 211V243M500 208V230M501 208V241M502 216V243M503 208V243M504 208V238M505 218V243M506 208V228M507 209V243M508 208V243M509 220V233M510 208V242M511 221V226M512 215V243M513 208V225M514 217V243M515 208V243M516 215V243M517 208V242M518 208V243M519 210V231M520 208V243M521 209V243M522 208V242M523 208V243M524 208V243M525 208V242M526 223V243M527 208V240M528 208V243M529 210V230M530 208V243M531 211V239M532 208V243M533 211V242M534 208V243M535 210V243M536 208V231M537 210V243M538 208V243M539 208V226M540 215V243M541 208V233M542 214V243M543 208V239M544 208V243M545 223V237M546 208V225M547 223V243M548 208V243M549 208V243M550 208V243M551 219V243M552 215V243M553 208V239M554 208V243M555 208V227M556 219V243M557 208V243M558 210V243M559 211V233M560 208V243M561 222V239M562 208V243M563 208V243M564 210V229M565 208V243M566 208V243M567 209V243M568 208V241M569 223V231M570 208V243M571 223V241M572 208V243M573 208V240M574 208V229M575 208V243M576 209V243M577 209V243M578 208V229M579 211V243M580 208V229M581 208V243M582 208V243M583 215V232M584 208V232M585 215V243M586 208V243M587 208V243M588 223V238M589 208V243M590 208V231M591 208V243M592 208V239M593 208V243M594 223V242M595 208V227M596 223V243M597 208V225M598 208V243M599 221V243M600 208V240M601 208V243M602 208V243M603 213V233M604 208V243M605 217V239M606 208V243M607 208V233M608 208V243M609 215V243M610 211V243M611 208V243M612 208V243M613 223V236M614 208V243M615 221V243M616 208V243M617 210V236M618 208V243M619 212V243M620 208V243M621 213V230M622 208V243M623 219V243M624 208V233M625 208V238M626 208V240M627 213V243M628 208V234M629 208V240M630 220V243M631 208V243M632 218V243M633 208V234M634 220V243M635 208V241M636 219V243M637 208V227M638 208V243M639 210V243M640 208V236M641 211V243M642 208V243M643 213V237M644 208V243M645 208V238M646 208V243M647 208V229M648 208V243M649 222V225M650 208V243M651 210V233M652 208V243M653 209V243M654 208V235M655 213V243M656 208V229M657 216V243M658 208V243M659 209V241M660 208V243M661 208V243M662 212V240M663 208V240M664 208V243M665 218V242M666 208V243M667 209V239M668 208V243M669 209V243M670 208V243M671 208V243M672 208V243M673 218V241M674 208V243M675 213V232M676 208V243M677 208V243M678 210V235M679 210V229M680 208V242M681 208V243M682 208V243M683 213V243M684 208V243M685 208V243M686 208V243M687 208V243M688 219V243M689 208V241M690 218V243M691 208V242M692 208V243M693 208V229M694 211V243M695 213V243M696 208V226M697 223V243M698 208V225M699 214V243M700 222V241M701 208V231M702 209V243M703 208V243M704 208V242M705 211V243M706 208V243M707 208V238M708 216V243M709 208V243M710 217V240M711 208V243M712 216V243M713 208V231M714 221V243M715 208V238M716 214V243M717 208V243M718 211V237M719 208V243M720 208V232M721 217V243M722 208V243M723 218V243M724 208V243M725 208V243M726 208V235M727 208V243M728 216V243M729 208V226M730 208V243M731 208V241M732 220V243M733 208V233M734 208V243M735 209V243M736 208V228M737 209V243M738 208V243M739 222V243M740 208V233M741 208V243M742 208V243M743 208V243M744 208V239M745 216V243M746 208V226M747 208V243M748 208V243M749 208V243M750 217V243M751 222V239M752 208V243M753 217V243M754 208V241M755 211V243M756 208V243M757 222V243M758 208V237M759 210V243M760 208V241M761 208V243M762 210V242M763 208V243M764 208V238M765 218V243M766 208V237M767 208V243M768 216V231M769 208V243M770 213V230M771 208V243M772 208V243M773 208V228M774 208V243M775 215V237M776 208V243M777 208V225M778 208V243M779 208V243M780 220V243M781 208V234M782 208V243M783 208V243M784 211V238M785 208V243M786 215V243M787 208V243M788 208V243M789 213V232M790 208V243M791 216V243M792 213V232M793 208V243M794 208V239M795 211V243M796 208V231M797 208V243M798 216V240M799 208V243M800 208V243M801 208V236M802 222V243M803 208V243M804 208V233M805 208V243M806 208V243M807 212V240M808 208V243M809 208V243M810 210V243M811 208V237M812 208V243M813 212V243M814 208V240M815 218V243M816 208V243M817 208V234M818 209V243M819 208V228M820 208V243M821 208V242M822 208V243M823 209V228M824 208V243M825 208V225M826 208V243M827 208V243M828 208V236M829 216V243M830 208V226M831 208V243M832 208V228M833 208V243M834 208V231M835 215V243M836 208V243M837 208V243M838 215V240M839 208V243M840 208V243M841 209V239M842 208V243M843 208V243M844 208V230M845 208V243M846 210V243M847 222V240M848 208V234M849 220V243M850 208V241M851 208V243M852 211V237M853 211V243M854 208V234M855 210V243M856 208V243M857 218V243M858 216V243M859 208V235M860 208V243M861 218V243M862 208V241M863 217V243M864 208V232M865 221V243M866 208V233M867 222V243M868 208V241M869 223V243M870 208V243M871 208V228" stroke="#22ee00" stroke-width="1" transform="translate(0.5 0)" shape-rendering="crispEdges"/></svg>
<div style="position:absolute;left:62px;top:180px;width:5px;height:1px;background:#000;"></div>
<div class="t" style="right:1113px;text-align:right;top:175.69px;font-size:11px;line-height:11px;color:#1e1e1e;font-weight:normal;letter-spacing:0px;">5</div>
<div style="position:absolute;left:62px;top:205px;width:5px;height:1px;background:#000;"></div>
<div class="t" style="right:1113px;text-align:right;top:200.69px;font-size:11px;line-height:11px;color:#1e1e1e;font-weight:normal;letter-spacing:0px;">4</div>
<div style="position:absolute;left:62px;top:230px;width:5px;height:1px;background:#000;"></div>
<div class="t" style="right:1113px;text-align:right;top:225.69px;font-size:11px;line-height:11px;color:#1e1e1e;font-weight:normal;letter-spacing:0px;">3</div>
<div style="position:absolute;left:62px;top:254px;width:5px;height:1px;background:#000;"></div>
<div class="t" style="right:1113px;text-align:right;top:249.69px;font-size:11px;line-height:11px;color:#1e1e1e;font-weight:normal;letter-spacing:0px;">2</div>
<div style="position:absolute;left:62px;top:279px;width:5px;height:1px;background:#000;"></div>
<div class="t" style="right:1113px;text-align:right;top:274.69px;font-size:11px;line-height:11px;color:#1e1e1e;font-weight:normal;letter-spacing:0px;">1</div>
<div style="position:absolute;left:62px;top:304px;width:5px;height:1px;background:#000;"></div>
<div class="t" style="right:1113px;text-align:right;top:299.69px;font-size:11px;line-height:11px;color:#1e1e1e;font-weight:normal;letter-spacing:0px;">0</div>
<div style="position:absolute;left:62px;top:329px;width:5px;height:1px;background:#000;"></div>
<div class="t" style="right:1113px;text-align:right;top:324.69px;font-size:11px;line-height:11px;color:#1e1e1e;font-weight:normal;letter-spacing:0px;">-1</div>
<div style="position:absolute;left:62px;top:354px;width:5px;height:1px;background:#000;"></div>
<div class="t" style="right:1113px;text-align:right;top:349.69px;font-size:11px;line-height:11px;color:#1e1e1e;font-weight:normal;letter-spacing:0px;">-2</div>
<div style="position:absolute;left:62px;top:378px;width:5px;height:1px;background:#000;"></div>
<div class="t" style="right:1113px;text-align:right;top:373.69px;font-size:11px;line-height:11px;color:#1e1e1e;font-weight:normal;letter-spacing:0px;">-3</div>
<div style="position:absolute;left:62px;top:403px;width:5px;height:1px;background:#000;"></div>
<div class="t" style="right:1113px;text-align:right;top:398.69px;font-size:11px;line-height:11px;color:#1e1e1e;font-weight:normal;letter-spacing:0px;">-4</div>
<div style="position:absolute;left:62px;top:428px;width:5px;height:1px;background:#000;"></div>
<div class="t" style="right:1113px;text-align:right;top:423.69px;font-size:11px;line-height:11px;color:#1e1e1e;font-weight:normal;letter-spacing:0px;">-5</div>
<div style="position:absolute;left:69px;top:431px;width:1px;height:5px;background:#000;"></div>
<div class="t" style="left:-30.5px;width:200px;text-align:center;top:437.69px;font-size:11px;line-height:11px;color:#1e1e1e;font-weight:normal;letter-spacing:0px;">0</div>
<div style="position:absolute;left:156px;top:431px;width:1px;height:5px;background:#000;"></div>
<div class="t" style="left:56.5px;width:200px;text-align:center;top:437.69px;font-size:11px;line-height:11px;color:#1e1e1e;font-weight:normal;letter-spacing:0px;">1m</div>
<div style="position:absolute;left:243px;top:431px;width:1px;height:5px;background:#000;"></div>
<div class="t" style="left:143.5px;width:200px;text-align:center;top:437.69px;font-size:11px;line-height:11px;color:#1e1e1e;font-weight:normal;letter-spacing:0px;">2m</div>
<div style="position:absolute;left:330px;top:431px;width:1px;height:5px;background:#000;"></div>
<div class="t" style="left:230.5px;width:200px;text-align:center;top:437.69px;font-size:11px;line-height:11px;color:#1e1e1e;font-weight:normal;letter-spacing:0px;">3m</div>
<div style="position:absolute;left:417px;top:431px;width:1px;height:5px;background:#000;"></div>
<div class="t" style="left:317.5px;width:200px;text-align:center;top:437.69px;font-size:11px;line-height:11px;color:#1e1e1e;font-weight:normal;letter-spacing:0px;">4m</div>
<div style="position:absolute;left:504px;top:431px;width:1px;height:5px;background:#000;"></div>
<div class="t" style="left:404.5px;width:200px;text-align:center;top:437.69px;font-size:11px;line-height:11px;color:#1e1e1e;font-weight:normal;letter-spacing:0px;">5m</div>
<div style="position:absolute;left:591px;top:431px;width:1px;height:5px;background:#000;"></div>
<div class="t" style="left:491.5px;width:200px;text-align:center;top:437.69px;font-size:11px;line-height:11px;color:#1e1e1e;font-weight:normal;letter-spacing:0px;">6m</div>
<div style="position:absolute;left:678px;top:431px;width:1px;height:5px;background:#000;"></div>
<div class="t" style="left:578.5px;width:200px;text-align:center;top:437.69px;font-size:11px;line-height:11px;color:#1e1e1e;font-weight:normal;letter-spacing:0px;">7m</div>
<div style="position:absolute;left:765px;top:431px;width:1px;height:5px;background:#000;"></div>
<div class="t" style="left:665.5px;width:200px;text-align:center;top:437.69px;font-size:11px;line-height:11px;color:#1e1e1e;font-weight:normal;letter-spacing:0px;">8m</div>
<div style="position:absolute;left:852px;top:431px;width:1px;height:5px;background:#000;"></div>
<div class="t" style="left:752.5px;width:200px;text-align:center;top:437.69px;font-size:11px;line-height:11px;color:#1e1e1e;font-weight:normal;letter-spacing:0px;">9m</div>
<div style="position:absolute;left:939px;top:431px;width:1px;height:5px;background:#000;"></div>
<div class="t" style="left:840px;width:200px;text-align:center;top:437.69px;font-size:11px;line-height:11px;color:#1e1e1e;font-weight:normal;letter-spacing:-0.2px;">10.016m</div>
<div class="t" style="left:405px;width:200px;text-align:center;top:452.69px;font-size:11px;line-height:11px;color:#1e1e1e;font-weight:normal;letter-spacing:0px;">Time (s)</div>
<div style="position:absolute;left:957px;top:193px;width:10px;height:1px;background:#333;"></div>
<div style="position:absolute;left:961px;top:189px;width:1px;height:10px;background:#333;"></div>
<div style="position:absolute;left:957px;top:215px;width:10px;height:1px;background:#333;"></div>
<svg style="position:absolute;left:957.5px;top:230px;" width="8" height="16" viewBox="0 0 8 16"><path d="M1 4 L4 1 L7 4 M1 12 L4 15 L7 12" fill="none" stroke="#333" stroke-width="1.1"/><path d="M4 3 V13" stroke="#333" stroke-width="1" stroke-dasharray="1 2"/></svg>
<svg style="position:absolute;left:956px;top:251px;" width="10" height="17" viewBox="0 0 10 17"><path d="M1.5 1.5 H9 M1.5 15.5 H9" stroke="#f5a623" stroke-width="1.2"/><path d="M2.8 5.3 L5.3 2.8 L7.8 5.3 M2.8 11.7 L5.3 14.2 L7.8 11.7" fill="none" stroke="#333" stroke-width="1.2"/><path d="M5.3 5 V12" stroke="#333" stroke-width="1" stroke-dasharray="1 2"/></svg>
<svg style="position:absolute;left:957.5px;top:282px;" width="8" height="16" viewBox="0 0 8 16"><path d="M1 4 L4 1 L7 4" fill="none" stroke="#333" stroke-width="1.1"/><path d="M4 3 V15" stroke="#333" stroke-width="1" stroke-dasharray="1 2"/></svg>
<div class="t" style="left:861.5px;width:200px;text-align:center;top:305.15px;font-size:14px;line-height:14px;color:#333;font-weight:normal;letter-spacing:0px;">C</div>
<svg style="position:absolute;left:957.5px;top:326px;" width="8" height="16" viewBox="0 0 8 16"><path d="M1 11 L4 14 L7 11" fill="none" stroke="#333" stroke-width="1.1"/><path d="M4 0 V12" stroke="#333" stroke-width="1" stroke-dasharray="1 2"/></svg>
<div style="position:absolute;left:955px;top:355px;width:2px;height:2px;background:#1a1a1a;"></div>
<div style="position:absolute;left:960px;top:355px;width:2px;height:2px;background:#1a1a1a;"></div>
<div style="position:absolute;left:965px;top:355px;width:2px;height:2px;background:#1a1a1a;"></div>
<svg style="position:absolute;left:10px;top:455px;" width="12" height="8" viewBox="0 0 12 8"><path d="M1.5 6.5 L6 2 L10.5 6.5" fill="none" stroke="#222" stroke-width="2"/></svg>
<div class="t" style="left:29px;top:454.69px;font-size:11px;line-height:11px;color:#1e1e1e;font-weight:normal;letter-spacing:-0.3px;">PSD</div>
<div style="position:absolute;left:71px;top:481px;width:140px;height:17px;box-sizing:border-box;background:#fcfcfc;border:1px solid #a3a3a3;"></div>
<div class="t" style="left:74px;top:484.69px;font-size:11px;line-height:11px;color:#1e1e1e;font-weight:normal;letter-spacing:0px;">Ch 4: Input 5</div>
<svg style="position:absolute;left:213px;top:483.5px;" width="8" height="12" viewBox="0 0 8 12"><path d="M0.5 4.5 L4 1 L7.5 4.5 Z M0.5 7.5 L4 11 L7.5 7.5 Z" fill="#7f7f7f"/></svg>
<div style="position:absolute;left:225px;top:481px;width:60px;height:17px;background:#dcdcdc;"></div>
<div class="t" style="left:228px;top:484.69px;font-size:11px;line-height:11px;color:#1e1e1e;font-weight:normal;letter-spacing:-0.2px;">V/sqrt(Hz)</div>
<svg style="position:absolute;left:301px;top:484px;" width="12" height="14" viewBox="0 0 12 14"><circle cx="5.3" cy="2.6" r="2.6" fill="#262626"/><rect x="4.2" y="4" width="2.4" height="4" fill="#262626"/><path d="M1.3 8 H9.7 L10.2 11 H0.8 Z" fill="#262626"/><rect x="0.5" y="12" width="10" height="1.2" fill="#262626"/><circle cx="4.4" cy="2.3" r="0.8" fill="#e6e6e6"/></svg>
<svg style="position:absolute;left:321px;top:483px;" width="15" height="14" viewBox="0 0 15 14"><path d="M7 0 L10.3 4 H3.7 Z" fill="#262626"/><rect x="6" y="3.5" width="2" height="6.2" fill="#262626"/><path d="M1 9 V12.9 H13 V9" fill="none" stroke="#262626" stroke-width="2"/></svg>
<svg style="position:absolute;left:343px;top:483px;" width="14" height="15" viewBox="0 0 14 15"><path d="M4.7 2 V0.6 H9.4 V2" fill="none" stroke="#2a2a2a" stroke-width="1.2"/><rect x="0" y="2" width="14" height="2" fill="#2a2a2a"/><path d="M1.1 4 V13.9 H12.9 V4 Z M1.9 4.5 V13 H3.1 V4.5 Z M4.9 4.5 V13 H6.2 V4.5 Z M8 4.5 V13 H9.3 V4.5 Z M11 4.5 V13 H12.1 V4.5 Z" fill="#2a2a2a" fill-rule="evenodd"/></svg>
<div style="position:absolute;left:371px;top:481px;width:170px;height:17px;box-sizing:border-box;background:#d2d2d2;border:1px solid #9a9a9a;"></div>
<div class="t" style="left:374px;top:484.69px;font-size:11px;line-height:11px;color:#1e1e1e;font-weight:normal;letter-spacing:0px;">Input 2 (V)</div>
<svg style="position:absolute;left:554px;top:483px;" width="14" height="14" viewBox="0 0 14 14"><rect x="6" y="0" width="2" height="6.5" fill="#262626"/><path d="M3.7 6 H10.3 L7 10 Z" fill="#262626"/><path d="M1 8 V12.9 H13 V8" fill="none" stroke="#262626" stroke-width="2"/></svg>
<div style="position:absolute;left:579px;top:481px;width:40px;height:17px;box-sizing:border-box;background:#fcfcfc;border:1px solid #a3a3a3;"></div>
<div class="t" style="right:558px;text-align:right;top:484.69px;font-size:11px;line-height:11px;color:#1e1e1e;font-weight:normal;letter-spacing:0px;">8</div>
<svg style="position:absolute;left:624px;top:483px;" width="14" height="14" viewBox="0 0 14 14"><rect x="6" y="0" width="2" height="6.5" fill="#262626"/><path d="M3.7 6 H10.3 L7 10 Z" fill="#262626"/><path d="M1 8 V12.9 H13 V8" fill="none" stroke="#262626" stroke-width="2"/></svg>
<div style="position:absolute;left:855px;top:489px;width:10px;height:1px;background:#333;"></div>
<div style="position:absolute;left:859px;top:485px;width:1px;height:10px;background:#333;"></div>
<div style="position:absolute;left:877px;top:489px;width:10px;height:1px;background:#333;"></div>
<svg style="position:absolute;left:896px;top:485px;" width="16" height="9" viewBox="0 0 16 9"><path d="M3.5 1 L0.8 4.5 L3.5 8 M12.5 1 L15.2 4.5 L12.5 8" fill="none" stroke="#333" stroke-width="1.2"/><path d="M4 4.5 H12" stroke="#333" stroke-width="1" stroke-dasharray="1 2"/></svg>
<div style="position:absolute;left:920px;top:489px;width:2px;height:2px;background:#1a1a1a;"></div>
<div style="position:absolute;left:925px;top:489px;width:2px;height:2px;background:#1a1a1a;"></div>
<div style="position:absolute;left:930px;top:489px;width:2px;height:2px;background:#1a1a1a;"></div>
<div style="position:absolute;left:67px;top:508px;width:875px;height:1px;background:#f6f6f6;"></div>
<div style="position:absolute;left:67px;top:508px;width:1px;height:252px;background:#f6f6f6;"></div>
<div style="position:absolute;left:68px;top:509px;width:873px;height:250px;background:#000;"></div>
<div style="position:absolute;left:68px;top:757px;width:873px;height:1px;background:#404040;"></div>
<div style="position:absolute;left:941px;top:509px;width:1px;height:250px;background:#888;"></div>
<svg style="position:absolute;left:68px;top:509px;" width="873" height="250" viewBox="0 0 873 250"><path d="M1 16.5 H872" stroke="#404040" stroke-width="1"/><path d="M1 55.5 H872" stroke="#404040" stroke-width="1"/><path d="M1 93.5 H872" stroke="#404040" stroke-width="1"/><path d="M1 132.5 H872" stroke="#404040" stroke-width="1"/><path d="M1 171.5 H872" stroke="#404040" stroke-width="1"/><path d="M1 209.5 H872" stroke="#404040" stroke-width="1"/><path d="M45.5 0 V249" stroke="#404040" stroke-width="1"/><path d="M88.5 0 V249" stroke="#404040" stroke-width="1"/><path d="M132.5 0 V249" stroke="#404040" stroke-width="1"/><path d="M175.5 0 V249" stroke="#404040" stroke-width="1"/><path d="M219.5 0 V249" stroke="#404040" stroke-width="1"/><path d="M262.5 0 V249" stroke="#404040" stroke-width="1"/><path d="M306.5 0 V249" stroke="#404040" stroke-width="1"/><path d="M349.5 0 V249" stroke="#404040" stroke-width="1"/><path d="M393.5 0 V249" stroke="#404040" stroke-width="1"/><path d="M436.5 0 V249" stroke="#404040" stroke-width="1"/><path d="M480.5 0 V249" stroke="#404040" stroke-width="1"/><path d="M523.5 0 V249" stroke="#404040" stroke-width="1"/><path d="M567.5 0 V249" stroke="#404040" stroke-width="1"/><path d="M610.5 0 V249" stroke="#404040" stroke-width="1"/><path d="M654.5 0 V249" stroke="#404040" stroke-width="1"/><path d="M697.5 0 V249" stroke="#404040" stroke-width="1"/><path d="M741.5 0 V249" stroke="#404040" stroke-width="1"/><path d="M784.5 0 V249" stroke="#404040" stroke-width="1"/><path d="M828.5 0 V249" stroke="#404040" stroke-width="1"/><path d="M871.5 0 V249" stroke="#404040" stroke-width="1"/><path d="M1.5 1.3 L2.4 5.6 L3.2 105.2 L4.1 170.8 L5.0 176.6 L5.8 172.1 L6.7 152.8 L7.6 127.1 L8.5 101.3 L9.3 29.9 L10.2 20.3 L11.1 29.9 L11.9 101.3 L12.8 127.1 L13.7 152.8 L14.5 172.1 L15.4 176.6 L16.3 181.1 L17.2 185.6 L18.0 190.1 L18.9 193.1 L19.8 199.5 L20.6 204.3 L21.5 209.0 L22.4 213.7 L23.2 218.4 L24.1 223.1 L25.0 227.8 L25.9 235.0 L26.7 228.4 L27.6 195.5 L28.5 222.4 L29.3 239.1 L30.2 239.4 L31.1 240.7 L31.9 237.4 L32.8 237.9 L33.7 243.2 L34.6 245.7 L35.4 218.5 L36.3 188.4 L37.2 220.6 L38.0 232.8 L38.9 233.7 L39.8 232.3 L40.7 234.1 L41.5 233.5 L42.4 230.6 L43.3 231.7 L44.1 226.8 L45.0 197.2 L45.9 218.0 L46.7 233.9 L47.6 234.0 L48.5 233.4 L49.3 233.2 L50.2 230.9 L51.1 229.3 L52.0 231.3 L52.8 229.3 L53.7 188.4 L54.6 225.5 L55.4 234.2 L56.3 231.6 L57.2 231.7 L58.0 233.5 L58.9 236.9 L59.8 236.1 L60.7 234.2 L61.5 227.9 L62.4 205.9 L63.3 221.7 L64.1 236.0 L65.0 240.4 L65.9 241.8 L66.8 238.3 L67.6 237.0 L68.5 236.9 L69.4 236.9 L70.2 220.4 L71.1 184.4 L72.0 219.7 L72.8 236.8 L73.7 234.7 L74.6 234.7 L75.4 235.8 L76.3 232.3 L77.2 230.8 L78.1 235.0 L78.9 229.7 L79.8 190.5 L80.7 222.8 L81.5 238.5 L82.4 237.9 L83.3 234.1 L84.1 232.6 L85.0 236.1 L85.9 239.2 L86.8 236.4 L87.6 213.8 L88.5 209.6 L89.4 216.7 L90.2 233.1 L91.1 231.3 L92.0 232.5 L92.8 239.4 L93.7 242.8 L94.6 239.9 L95.5 240.0 L96.3 223.9 L97.2 188.5 L98.1 216.1 L98.9 232.5 L99.8 232.5 L100.7 234.3 L101.6 236.1 L102.4 236.1 L103.3 235.0 L104.2 238.0 L105.0 230.2 L105.9 201.6 L106.8 214.3 L107.6 236.8 L108.5 234.3 L109.4 234.6 L110.2 235.9 L111.1 237.9 L112.0 238.1 L112.9 233.4 L113.7 213.5 L114.6 214.4 L115.5 228.6 L116.3 230.9 L117.2 231.3 L118.1 233.9 L118.9 235.5 L119.8 235.4 L120.7 234.8 L121.6 233.8 L122.4 230.3 L123.3 211.6 L124.2 215.9 L125.0 234.5 L125.9 234.8 L126.8 235.4 L127.6 237.6 L128.5 240.6 L129.4 240.7 L130.3 235.0 L131.1 216.9 L132.0 208.1 L132.9 229.1 L133.7 232.4 L134.6 235.4 L135.5 239.4 L136.3 238.2 L137.2 235.2 L138.1 235.1 L139.0 236.5 L139.8 217.0 L140.7 204.6 L141.6 217.3 L142.4 236.3 L143.3 232.3 L144.2 233.7 L145.0 233.1 L145.9 229.8 L146.8 228.3 L147.7 231.0 L148.5 215.7 L149.4 199.1 L150.3 215.4 L151.1 235.7 L152.0 236.4 L152.9 236.8 L153.8 237.2 L154.6 236.2 L155.5 236.9 L156.4 233.6 L157.2 227.4 L158.1 204.9 L159.0 227.3 L159.8 233.8 L160.7 235.9 L161.6 235.7 L162.4 237.2 L163.3 239.2 L164.2 236.0 L165.1 233.1 L165.9 220.2 L166.8 188.9 L167.7 222.4 L168.5 237.2 L169.4 236.2 L170.3 233.8 L171.1 234.0 L172.0 236.8 L172.9 241.3 L173.8 239.6 L174.6 227.3 L175.5 202.6 L176.4 227.6 L177.2 236.6 L178.1 242.1 L179.0 242.7 L179.8 241.2 L180.7 240.3 L181.6 237.7 L182.5 236.7 L183.3 224.5 L184.2 202.6 L185.1 215.0 L185.9 241.3 L186.8 239.9 L187.7 238.0 L188.5 238.2 L189.4 243.1 L190.3 246.8 L191.2 236.8 L192.0 222.7 L192.9 191.1 L193.8 223.2 L194.6 232.1 L195.5 232.0 L196.4 233.1 L197.2 232.9 L198.1 236.8 L199.0 239.5 L199.9 232.7 L200.7 223.7 L201.6 195.8 L202.5 217.2 L203.3 237.3 L204.2 239.4 L205.1 237.1 L205.9 236.0 L206.8 239.6 L207.7 242.0 L208.6 240.5 L209.4 217.1 L210.3 212.1 L211.2 227.7 L212.0 234.5 L212.9 233.8 L213.8 234.0 L214.6 236.8 L215.5 236.1 L216.4 233.6 L217.3 234.8 L218.1 226.3 L219.0 194.9 L219.9 230.6 L220.7 231.9 L221.6 233.5 L222.5 234.5 L223.4 234.2 L224.2 233.9 L225.1 235.4 L226.0 235.5 L226.8 219.6 L227.7 202.2 L228.6 214.2 L229.4 233.3 L230.3 231.5 L231.2 231.3 L232.0 234.9 L232.9 241.8 L233.8 241.8 L234.7 237.5 L235.5 213.4 L236.4 195.7 L237.3 222.3 L238.1 233.4 L239.0 232.7 L239.9 232.2 L240.8 232.1 L241.6 232.4 L242.5 232.7 L243.4 235.9 L244.2 219.0 L245.1 193.2 L246.0 229.0 L246.8 236.9 L247.7 235.4 L248.6 238.0 L249.4 239.1 L250.3 240.0 L251.2 238.8 L252.1 238.8 L252.9 224.7 L253.8 207.7 L254.7 220.1 L255.5 236.4 L256.4 236.2 L257.3 234.1 L258.1 231.9 L259.0 234.0 L259.9 235.5 L260.8 234.9 L261.6 223.8 L262.5 211.2 L263.4 228.5 L264.2 241.1 L265.1 245.8 L266.0 244.2 L266.8 242.3 L267.7 236.2 L268.6 231.2 L269.5 233.0 L270.3 216.4 L271.2 190.8 L272.1 229.7 L272.9 231.6 L273.8 234.5 L274.7 242.2 L275.5 239.5 L276.4 232.0 L277.3 232.1 L278.2 238.0 L279.0 220.2 L279.9 210.4 L280.8 222.7 L281.6 236.1 L282.5 234.5 L283.4 234.3 L284.2 235.7 L285.1 237.5 L286.0 237.0 L286.9 231.9 L287.7 216.6 L288.6 186.0 L289.5 214.7 L290.3 234.4 L291.2 235.1 L292.1 238.1 L292.9 235.7 L293.8 230.7 L294.7 231.7 L295.6 237.9 L296.4 217.3 L297.3 197.4 L298.2 215.7 L299.0 232.7 L299.9 236.5 L300.8 235.9 L301.6 235.4 L302.5 238.8 L303.4 239.2 L304.3 237.1 L305.1 225.3 L306.0 214.4 L306.9 221.8 L307.7 237.8 L308.6 237.9 L309.5 237.2 L310.3 235.0 L311.2 233.4 L312.1 234.5 L313.0 236.9 L313.8 229.7 L314.7 201.5 L315.6 222.2 L316.4 236.6 L317.3 238.3 L318.2 232.9 L319.0 229.2 L319.9 233.1 L320.8 238.6 L321.7 236.8 L322.5 215.7 L323.4 212.8 L324.3 224.4 L325.1 227.9 L326.0 230.1 L326.9 233.0 L327.8 234.0 L328.6 234.7 L329.5 234.6 L330.4 235.4 L331.2 228.9 L332.1 196.2 L333.0 221.5 L333.8 240.3 L334.7 240.9 L335.6 238.5 L336.4 232.0 L337.3 230.7 L338.2 236.7 L339.1 241.0 L339.9 214.1 L340.8 194.3 L341.7 221.9 L342.5 231.6 L343.4 233.6 L344.3 235.2 L345.1 235.2 L346.0 235.6 L346.9 234.5 L347.8 235.2 L348.6 214.2 L349.5 194.0 L350.4 219.5 L351.2 235.3 L352.1 237.4 L353.0 235.9 L353.8 235.1 L354.7 237.3 L355.6 237.0 L356.5 234.1 L357.3 213.6 L358.2 209.0 L359.1 229.5 L359.9 234.2 L360.8 232.9 L361.7 236.7 L362.5 244.4 L363.4 244.1 L364.3 241.5 L365.2 241.6 L366.0 219.3 L366.9 185.5 L367.8 216.9 L368.6 234.4 L369.5 235.5 L370.4 237.3 L371.2 236.3 L372.1 236.1 L373.0 238.0 L373.9 239.1 L374.7 213.5 L375.6 199.7 L376.5 228.4 L377.3 237.3 L378.2 237.5 L379.1 239.9 L379.9 238.3 L380.8 236.0 L381.7 240.6 L382.6 243.7 L383.4 228.4 L384.3 201.4 L385.2 216.7 L386.0 234.6 L386.9 230.9 L387.8 234.1 L388.6 238.4 L389.5 238.7 L390.4 238.2 L391.3 235.2 L392.1 221.6 L393.0 216.8 L393.9 225.6 L394.7 237.7 L395.6 236.7 L396.5 234.2 L397.3 232.3 L398.2 235.2 L399.1 236.7 L400.0 233.4 L400.8 220.4 L401.7 197.7 L402.6 222.6 L403.4 239.9 L404.3 237.7 L405.2 235.5 L406.0 234.8 L406.9 232.9 L407.8 233.2 L408.7 234.5 L409.5 222.2 L410.4 208.1 L411.3 229.1 L412.1 233.6 L413.0 237.0 L413.9 240.7 L414.7 240.7 L415.6 238.3 L416.5 233.4 L417.4 229.4 L418.2 227.3 L419.1 194.9 L420.0 226.5 L420.8 233.3 L421.7 230.3 L422.6 231.6 L423.4 233.4 L424.3 231.8 L425.2 230.1 L426.1 228.4 L426.9 228.1 L427.8 204.3 L428.7 213.9 L429.5 240.3 L430.4 236.5 L431.3 233.7 L432.1 231.1 L433.0 227.0 L433.9 226.1 L434.8 229.5 L435.6 223.4 L436.5 189.2 L437.4 222.4 L438.2 238.4 L439.1 240.3 L440.0 239.0 L440.8 234.7 L441.7 235.8 L442.6 237.1 L443.5 234.1 L444.3 227.5 L445.2 188.5 L446.1 214.2 L446.9 234.0 L447.8 235.6 L448.7 235.9 L449.5 233.8 L450.4 233.2 L451.3 234.4 L452.2 236.7 L453.0 220.5 L453.9 194.4 L454.8 221.0 L455.6 234.7 L456.5 231.2 L457.4 230.3 L458.2 231.5 L459.1 231.9 L460.0 234.2 L460.9 239.5 L461.7 230.3 L462.6 184.9 L463.5 220.8 L464.3 229.9 L465.2 231.9 L466.1 234.3 L467.0 235.4 L467.8 235.3 L468.7 233.4 L469.6 232.3 L470.4 221.3 L471.3 209.7 L472.2 218.9 L473.0 236.8 L473.9 235.4 L474.8 234.8 L475.6 235.1 L476.5 236.8 L477.4 238.1 L478.3 238.1 L479.1 215.8 L480.0 212.8 L480.9 215.9 L481.7 233.4 L482.6 235.8 L483.5 238.9 L484.3 240.4 L485.2 235.7 L486.1 231.3 L487.0 233.9 L487.8 217.9 L488.7 225.3 L489.6 238.1 L490.4 241.3 L491.3 242.7 L492.2 241.2 L493.0 240.7 L493.9 240.0 L494.8 237.9 L495.7 237.1 L496.5 240.2 L497.4 224.8 L498.3 242.4 L499.1 241.4 L500.0 240.3 L500.9 239.5 L501.8 240.0 L502.6 239.7 L503.5 237.6 L504.4 236.4 L505.2 236.3 L506.1 222.4 L507.0 238.0 L507.8 239.5 L508.7 239.4 L509.6 239.7 L510.4 240.1 L511.3 238.4 L512.2 237.8 L513.1 239.7 L513.9 241.8 L514.8 232.2 L515.7 238.8 L516.5 236.7 L517.4 235.2 L518.3 236.1 L519.1 237.6 L520.0 237.4 L520.9 237.4 L521.8 235.3 L522.6 233.4 L523.5 227.0 L524.4 235.3 L525.2 238.5 L526.1 239.8 L527.0 239.7 L527.8 240.0 L528.7 241.2 L529.6 241.7 L530.5 238.3 L531.3 235.9 L532.2 225.8 L533.1 239.5 L533.9 240.5 L534.8 241.7 L535.7 243.6 L536.5 241.4 L537.4 239.0 L538.3 240.4 L539.2 241.0 L540.0 238.4 L540.9 228.9 L541.8 239.7 L542.6 240.5 L543.5 241.2 L544.4 241.3 L545.2 242.5 L546.1 241.6 L547.0 239.9 L547.9 240.8 L548.7 241.3 L549.6 236.1 L550.5 239.7 L551.3 240.3 L552.2 238.5 L553.1 236.2 L553.9 236.0 L554.8 237.4 L555.7 238.7 L556.6 238.1 L557.4 237.2 L558.3 234.5 L559.2 236.7 L560.0 237.5 L560.9 238.0 L561.8 237.4 L562.6 238.2 L563.5 240.6 L564.4 240.3 L565.3 238.4 L566.1 238.4 L567.0 227.4 L567.9 234.9 L568.7 238.0 L569.6 241.4 L570.5 240.6 L571.3 237.7 L572.2 235.1 L573.1 237.0 L574.0 240.8 L574.8 239.5 L575.7 234.0 L576.6 235.9 L577.4 237.3 L578.3 239.6 L579.2 242.6 L580.0 241.7 L580.9 239.1 L581.8 240.1 L582.7 239.8 L583.5 237.9 L584.4 233.3 L585.3 238.7 L586.1 240.9 L587.0 242.2 L587.9 240.0 L588.8 239.0 L589.6 241.0 L590.5 238.8 L591.4 235.1 L592.2 235.6 L593.1 226.2 L594.0 236.0 L594.8 238.4 L595.7 240.3 L596.6 242.0 L597.4 244.5 L598.3 243.3 L599.2 240.9 L600.1 239.5 L600.9 239.1 L601.8 235.0 L602.7 238.8 L603.5 237.7 L604.4 236.4 L605.3 235.7 L606.1 237.8 L607.0 239.2 L607.9 238.5 L608.8 238.3 L609.6 237.5 L610.5 227.2 L611.4 242.1 L612.2 238.2 L613.1 235.9 L614.0 238.0 L614.8 238.4 L615.7 237.4 L616.6 239.7 L617.5 240.4 L618.3 238.4 L619.2 234.8 L620.1 240.3 L620.9 238.7 L621.8 234.5 L622.7 235.4 L623.5 240.0 L624.4 241.3 L625.3 239.3 L626.2 237.9 L627.0 238.3 L627.9 229.2 L628.8 238.7 L629.6 237.5 L630.5 235.0 L631.4 236.9 L632.2 242.8 L633.1 242.6 L634.0 240.7 L634.9 242.1 L635.7 241.0 L636.6 224.4 L637.5 237.0 L638.3 238.9 L639.2 240.9 L640.1 238.1 L640.9 235.2 L641.8 236.0 L642.7 237.7 L643.6 237.7 L644.4 237.7 L645.3 227.9 L646.2 236.4 L647.0 238.6 L647.9 239.7 L648.8 237.7 L649.6 236.7 L650.5 237.0 L651.4 236.8 L652.3 236.9 L653.1 238.6 L654.0 233.3 L654.9 237.9 L655.7 238.8 L656.6 240.4 L657.5 243.9 L658.3 243.7 L659.2 241.5 L660.1 241.8 L661.0 240.9 L661.8 239.6 L662.7 224.3 L663.6 233.2 L664.4 233.6 L665.3 237.4 L666.2 239.1 L667.0 238.8 L667.9 236.5 L668.8 235.1 L669.7 238.4 L670.5 243.1 L671.4 235.5 L672.3 239.8 L673.1 239.5 L674.0 240.0 L674.9 238.3 L675.8 237.4 L676.6 237.6 L677.5 236.5 L678.4 235.1 L679.2 235.9 L680.1 221.5 L681.0 237.1 L681.8 237.0 L682.7 239.4 L683.6 240.7 L684.4 240.2 L685.3 239.6 L686.2 238.1 L687.1 238.4 L687.9 240.0 L688.8 234.8 L689.7 238.9 L690.5 238.3 L691.4 236.6 L692.3 235.6 L693.1 237.2 L694.0 237.7 L694.9 237.6 L695.8 239.8 L696.6 241.2 L697.5 223.8 L698.4 236.7 L699.2 236.7 L700.1 235.6 L701.0 235.9 L701.8 236.3 L702.7 235.8 L703.6 237.0 L704.5 236.8 L705.3 236.2 L706.2 226.2 L707.1 239.6 L707.9 238.7 L708.8 235.2 L709.7 235.1 L710.5 237.5 L711.4 239.8 L712.3 242.6 L713.2 240.9 L714.0 237.9 L714.9 225.4 L715.8 237.0 L716.6 237.9 L717.5 239.0 L718.4 238.0 L719.2 237.3 L720.1 236.9 L721.0 237.4 L721.9 239.4 L722.7 238.9 L723.6 221.9 L724.5 239.1 L725.3 244.1 L726.2 242.3 L727.1 238.3 L727.9 235.4 L728.8 234.0 L729.7 234.9 L730.6 238.6 L731.4 240.8 L732.3 225.7 L733.2 237.9 L734.0 238.8 L734.9 238.9 L735.8 238.7 L736.6 236.8 L737.5 235.2 L738.4 235.7 L739.3 237.5 L740.1 238.4 L741.0 229.3 L741.9 236.7 L742.7 236.5 L743.6 237.6 L744.5 235.6 L745.3 233.7 L746.2 237.0 L747.1 242.4 L748.0 241.7 L748.8 239.4 L749.7 229.7 L750.6 239.8 L751.4 243.5 L752.3 242.7 L753.2 239.1 L754.0 238.6 L754.9 239.5 L755.8 238.3 L756.7 237.2 L757.5 238.8 L758.4 226.9 L759.3 239.1 L760.1 238.5 L761.0 239.9 L761.9 239.1 L762.7 237.0 L763.6 236.5 L764.5 236.4 L765.4 233.8 L766.2 231.7 L767.1 228.8 L768.0 235.8 L768.8 237.5 L769.7 237.3 L770.6 238.7 L771.4 239.5 L772.3 238.1 L773.2 237.1 L774.1 237.9 L774.9 237.0 L775.8 231.6 L776.7 236.6 L777.5 239.2 L778.4 240.8 L779.3 238.4 L780.1 235.8 L781.0 236.3 L781.9 239.8 L782.8 239.1 L783.6 235.2 L784.5 231.4 L785.4 239.6 L786.2 240.2 L787.1 239.1 L788.0 239.0 L788.8 237.7 L789.7 235.7 L790.6 236.2 L791.5 239.4 L792.3 240.7 L793.2 222.4 L794.1 236.7 L794.9 237.1 L795.8 237.7 L796.7 236.9 L797.5 237.5 L798.4 238.3 L799.3 237.1 L800.2 235.1 L801.0 234.0 L801.9 224.6 L802.8 239.5 L803.6 240.6 L804.5 239.2 L805.4 236.4 L806.2 234.7 L807.1 236.2 L808.0 238.7 L808.9 238.2 L809.7 236.8 L810.6 227.7 L811.5 240.3 L812.3 238.6 L813.2 235.0 L814.1 234.6 L814.9 237.0 L815.8 239.7 L816.7 241.0 L817.6 243.0 L818.4 243.4 L819.3 230.4 L820.2 239.7 L821.0 236.5 L821.9 234.7 L822.8 235.9 L823.6 238.4 L824.5 239.0 L825.4 239.1 L826.3 238.9 L827.1 237.3 L828.0 228.8 L828.9 237.7 L829.7 236.1 L830.6 236.4 L831.5 238.2 L832.3 237.9 L833.2 236.1 L834.1 236.5 L835.0 239.2 L835.8 238.6 L836.7 221.8 L837.6 234.9 L838.4 236.8 L839.3 239.2 L840.2 239.5 L841.0 238.0 L841.9 237.5 L842.8 236.5 L843.7 235.1 L844.5 236.3 L845.4 225.8 L846.3 239.3 L847.1 238.2 L848.0 238.8 L848.9 239.2 L849.7 240.1 L850.6 241.8 L851.5 238.9 L852.4 236.5 L853.2 238.0 L854.1 221.2 L855.0 238.6 L855.8 236.2 L856.7 235.0 L857.6 237.5 L858.4 239.5 L859.3 237.9 L860.2 236.9 L861.1 236.8 L861.9 235.8 L862.8 231.3 L863.7 236.0 L864.5 235.4 L865.4 234.8 L866.3 236.0 L867.1 238.3 L868.0 238.6 L868.9 236.8 L869.8 235.7 L870.6 236.6 L871.5 228.5" fill="none" stroke="#8e7e00" stroke-width="1.0" stroke-linejoin="round" shape-rendering="crispEdges"/><path d="M1.5 120.6 L2.4 166.9 L3.2 194.0 L4.1 209.4 L5.0 191.7 L5.8 212.6 L6.7 228.8 L7.6 229.5 L8.5 235.3 L9.3 237.6 L10.2 232.8 L11.1 230.0 L11.9 233.7 L12.8 237.7 L13.7 235.5 L14.5 234.5 L15.4 225.5 L16.3 213.2 L17.2 219.7 L18.0 228.6 L18.9 233.7 L19.8 234.1 L20.6 231.2 L21.5 230.3 L22.4 230.3 L23.2 231.6 L24.1 236.3 L25.0 234.4 L25.9 230.1 L26.7 233.0 L27.6 238.1 L28.5 236.1 L29.3 221.3 L30.2 209.6 L31.1 223.2 L31.9 213.8 L32.8 194.6 L33.7 213.7 L34.6 227.2 L35.4 229.9 L36.3 223.9 L37.2 212.0 L38.0 221.0 L38.9 229.5 L39.8 232.0 L40.7 232.7 L41.5 229.9 L42.4 226.9 L43.3 227.0 L44.1 229.2 L45.0 216.3 L45.9 200.8 L46.7 217.8 L47.6 231.3 L48.5 229.7 L49.3 226.7 L50.2 228.2 L51.1 229.8 L52.0 228.6 L52.8 231.1 L53.7 234.0 L54.6 233.5 L55.4 234.0 L56.3 232.9 L57.2 230.8 L58.0 225.0 L58.9 219.1 L59.8 228.0 L60.7 232.1 L61.5 230.0 L62.4 233.3 L63.3 235.4 L64.1 230.4 L65.0 226.6 L65.9 225.2 L66.8 220.2 L67.6 215.2 L68.5 210.2 L69.4 205.1 L70.2 200.1 L71.1 195.1 L72.0 190.1 L72.8 186.2 L73.7 182.4 L74.6 178.5 L75.4 174.7 L76.3 170.8 L77.2 165.5 L78.1 160.2 L78.9 154.9 L79.8 149.6 L80.7 101.3 L81.5 73.1 L82.4 55.2 L83.3 60.6 L84.1 84.4 L85.0 120.6 L85.9 120.0 L86.8 77.8 L87.6 49.6 L88.5 36.1 L89.4 49.6 L90.2 77.8 L91.1 120.0 L92.0 120.6 L92.8 84.4 L93.7 60.6 L94.6 55.2 L95.5 73.1 L96.3 101.3 L97.2 149.6 L98.1 154.9 L98.9 160.2 L99.8 165.5 L100.7 170.8 L101.6 174.7 L102.4 178.5 L103.3 182.4 L104.2 186.2 L105.0 190.1 L105.9 195.1 L106.8 200.1 L107.6 205.1 L108.5 210.2 L109.4 192.6 L110.2 212.2 L111.1 225.2 L112.0 229.6 L112.9 231.8 L113.7 230.0 L114.6 226.9 L115.5 226.0 L116.3 226.1 L117.2 229.5 L118.1 221.2 L118.9 207.0 L119.8 225.2 L120.7 241.3 L121.6 234.1 L122.4 230.4 L123.3 230.7 L124.2 231.5 L125.0 233.5 L125.9 235.4 L126.8 233.7 L127.6 231.1 L128.5 231.2 L129.4 233.7 L130.3 234.9 L131.1 233.9 L132.0 235.8 L132.9 221.3 L133.7 195.9 L134.6 214.1 L135.5 234.0 L136.3 235.3 L137.2 219.6 L138.1 203.9 L139.0 221.1 L139.8 221.7 L140.7 228.9 L141.6 232.1 L142.4 228.6 L143.3 228.0 L144.2 230.2 L145.0 235.1 L145.9 238.8 L146.8 237.6 L147.7 236.1 L148.5 235.7 L149.4 235.0 L150.3 234.3 L151.1 233.2 L152.0 231.3 L152.9 230.7 L153.8 233.2 L154.6 237.5 L155.5 238.1 L156.4 222.8 L157.2 204.0 L158.1 215.2 L159.0 226.9 L159.8 230.5 L160.7 234.6 L161.6 230.8 L162.4 225.0 L163.3 225.5 L164.2 223.1 L165.1 212.9 L165.9 218.9 L166.8 228.8 L167.7 230.8 L168.5 219.2 L169.4 205.5 L170.3 218.1 L171.1 229.9 L172.0 232.1 L172.9 233.8 L173.8 234.2 L174.6 231.2 L175.5 228.3 L176.4 228.2 L177.2 222.8 L178.1 217.3 L179.0 225.1 L179.8 229.4 L180.7 228.4 L181.6 228.8 L182.5 232.1 L183.3 236.8 L184.2 237.2 L185.1 234.4 L185.9 233.0 L186.8 230.7 L187.7 229.3 L188.5 230.4 L189.4 229.0 L190.3 226.7 L191.2 229.2 L192.0 233.7 L192.9 231.5 L193.8 230.0 L194.6 230.9 L195.5 228.5 L196.4 227.5 L197.2 228.1 L198.1 227.3 L199.0 227.7 L199.9 229.4 L200.7 229.8 L201.6 230.8 L202.5 234.4 L203.3 236.8 L204.2 235.9 L205.1 225.7 L205.9 213.8 L206.8 222.0 L207.7 228.1 L208.6 227.1 L209.4 227.9 L210.3 228.7 L211.2 231.7 L212.0 237.6 L212.9 239.3 L213.8 231.8 L214.6 227.6 L215.5 229.4 L216.4 232.2 L217.3 235.2 L218.1 233.3 L219.0 226.6 L219.9 224.7 L220.7 228.9 L221.6 231.9 L222.5 229.6 L223.4 229.1 L224.2 231.5 L225.1 230.7 L226.0 228.0 L226.8 230.3 L227.7 232.6 L228.6 229.6 L229.4 227.3 L230.3 228.7 L231.2 230.0 L232.0 231.4 L232.9 233.2 L233.8 230.5 L234.7 229.1 L235.5 230.3 L236.4 229.2 L237.3 229.0 L238.1 232.6 L239.0 211.9 L239.9 225.8 L240.8 229.5 L241.6 231.2 L242.5 233.3 L243.4 233.5 L244.2 215.6 L245.1 200.8 L246.0 220.0 L246.8 231.6 L247.7 234.0 L248.6 235.5 L249.4 225.9 L250.3 198.7 L251.2 196.0 L252.1 222.5 L252.9 239.9 L253.8 235.8 L254.7 233.8 L255.5 209.1 L256.4 182.0 L257.3 190.5 L258.1 219.0 L259.0 207.4 L259.9 220.0 L260.8 212.9 L261.6 183.9 L262.5 166.6 L263.4 183.9 L264.2 212.9 L265.1 211.1 L266.0 222.2 L266.8 218.0 L267.7 192.2 L268.6 186.4 L269.5 209.9 L270.3 227.9 L271.2 230.0 L272.1 231.9 L272.9 220.9 L273.8 194.7 L274.7 200.2 L275.5 225.5 L276.4 228.5 L277.3 232.4 L278.2 232.0 L279.0 221.1 L279.9 201.2 L280.8 218.1 L281.6 231.4 L282.5 223.8 L283.4 212.1 L284.2 224.5 L285.1 222.3 L286.0 214.7 L286.9 230.4 L287.7 231.1 L288.6 234.1 L289.5 237.0 L290.3 232.0 L291.2 228.4 L292.1 229.7 L292.9 231.1 L293.8 230.5 L294.7 233.6 L295.6 238.2 L296.4 236.7 L297.3 234.7 L298.2 234.4 L299.0 223.0 L299.9 210.2 L300.8 222.6 L301.6 231.0 L302.5 233.0 L303.4 237.0 L304.3 235.0 L305.1 227.8 L306.0 225.7 L306.9 231.1 L307.7 227.7 L308.6 215.4 L309.5 218.9 L310.3 205.6 L311.2 220.1 L312.1 227.4 L313.0 223.7 L313.8 225.8 L314.7 230.2 L315.6 231.3 L316.4 232.3 L317.3 233.2 L318.2 234.3 L319.0 223.7 L319.9 209.7 L320.8 223.7 L321.7 232.8 L322.5 232.0 L323.4 234.2 L324.3 235.1 L325.1 233.5 L326.0 228.4 L326.9 225.1 L327.8 227.1 L328.6 229.8 L329.5 216.9 L330.4 201.2 L331.2 214.2 L332.1 227.0 L333.0 229.0 L333.8 228.2 L334.7 228.7 L335.6 228.1 L336.4 227.0 L337.3 230.0 L338.2 233.9 L339.1 235.5 L339.9 231.5 L340.8 227.2 L341.7 227.1 L342.5 226.5 L343.4 226.0 L344.3 227.3 L345.1 228.1 L346.0 230.7 L346.9 231.8 L347.8 230.7 L348.6 232.6 L349.5 233.6 L350.4 233.5 L351.2 229.1 L352.1 225.0 L353.0 227.1 L353.8 230.8 L354.7 229.5 L355.6 229.3 L356.5 232.6 L357.3 233.7 L358.2 234.1 L359.1 236.1 L359.9 233.9 L360.8 232.2 L361.7 234.6 L362.5 234.7 L363.4 230.8 L364.3 230.3 L365.2 231.6 L366.0 228.8 L366.9 226.1 L367.8 227.4 L368.6 232.1 L369.5 231.6 L370.4 228.2 L371.2 228.3 L372.1 223.5 L373.0 216.5 L373.9 225.6 L374.7 232.2 L375.6 230.3 L376.5 229.3 L377.3 229.9 L378.2 222.6 L379.1 211.6 L379.9 222.1 L380.8 231.4 L381.7 232.1 L382.6 234.9 L383.4 234.1 L384.3 228.8 L385.2 228.3 L386.0 232.1 L386.9 233.5 L387.8 233.6 L388.6 236.0 L389.5 237.0 L390.4 233.7 L391.3 233.1 L392.1 233.5 L393.0 229.8 L393.9 229.9 L394.7 233.9 L395.6 233.7 L396.5 231.7 L397.3 232.5 L398.2 233.6 L399.1 231.3 L400.0 230.1 L400.8 231.1 L401.7 231.4 L402.6 233.3 L403.4 234.3 L404.3 232.4 L405.2 232.8 L406.0 233.7 L406.9 220.7 L407.8 219.5 L408.7 229.6 L409.5 229.3 L410.4 228.0 L411.3 226.6 L412.1 228.1 L413.0 209.2 L413.9 224.4 L414.7 232.1 L415.6 220.7 L416.5 207.7 L417.4 222.7 L418.2 217.3 L419.1 206.9 L420.0 222.7 L420.8 226.1 L421.7 225.4 L422.6 228.8 L423.4 232.8 L424.3 206.7 L425.2 202.0 L426.1 227.6 L426.9 239.0 L427.8 232.1 L428.7 230.6 L429.5 219.5 L430.4 193.7 L431.3 201.7 L432.1 233.4 L433.0 231.5 L433.9 224.8 L434.8 218.3 L435.6 198.6 L436.5 181.2 L437.4 198.6 L438.2 227.5 L439.1 234.5 L440.0 233.9 L440.8 231.6 L441.7 201.3 L442.6 195.3 L443.5 218.4 L444.3 232.0 L445.2 232.7 L446.1 234.9 L446.9 229.7 L447.8 203.2 L448.7 203.3 L449.5 232.5 L450.4 234.9 L451.3 234.9 L452.2 233.6 L453.0 226.9 L453.9 206.0 L454.8 216.9 L455.6 232.9 L456.5 230.4 L457.4 231.2 L458.2 232.1 L459.1 223.0 L460.0 211.0 L460.9 231.8 L461.7 233.1 L462.6 234.3 L463.5 233.6 L464.3 230.8 L465.2 216.4 L466.1 217.1 L467.0 235.8 L467.8 233.2 L468.7 230.5 L469.6 231.1 L470.4 234.0 L471.3 237.7 L472.2 235.0 L473.0 231.1 L473.9 231.8 L474.8 232.4 L475.6 229.2 L476.5 227.5 L477.4 229.0 L478.3 232.3 L479.1 235.0 L480.0 233.4 L480.9 232.0 L481.7 232.8 L482.6 232.0 L483.5 228.6 L484.3 227.2 L485.2 231.2 L486.1 237.0 L487.0 235.0 L487.8 234.3 L488.7 235.1 L489.6 234.4 L490.4 232.7 L491.3 232.6 L492.2 233.7 L493.0 232.8 L493.9 232.8 L494.8 236.9 L495.7 237.9 L496.5 233.0 L497.4 230.5 L498.3 231.0 L499.1 232.8 L500.0 230.9 L500.9 229.1 L501.8 232.3 L502.6 234.8 L503.5 231.7 L504.4 231.9 L505.2 234.5 L506.1 234.8 L507.0 232.7 L507.8 230.0 L508.7 230.9 L509.6 233.8 L510.4 234.0 L511.3 234.0 L512.2 233.6 L513.1 233.7 L513.9 233.3 L514.8 231.8 L515.7 232.2 L516.5 232.9 L517.4 232.2 L518.3 231.9 L519.1 230.8 L520.0 229.7 L520.9 230.4 L521.8 230.6 L522.6 230.8 L523.5 233.6 L524.4 236.0 L525.2 233.2 L526.1 230.7 L527.0 231.7 L527.8 231.8 L528.7 231.6 L529.6 230.0 L530.5 225.4 L531.3 228.0 L532.2 231.7 L533.1 234.5 L533.9 235.3 L534.8 233.3 L535.7 233.9 L536.5 234.1 L537.4 234.9 L538.3 236.0 L539.2 234.4 L540.0 233.9 L540.9 231.1 L541.8 229.0 L542.6 231.4 L543.5 232.8 L544.4 231.9 L545.2 232.1 L546.1 232.2 L547.0 232.1 L547.9 230.5 L548.7 229.6 L549.6 231.7 L550.5 235.6 L551.3 235.9 L552.2 233.3 L553.1 232.1 L553.9 232.0 L554.8 232.7 L555.7 235.6 L556.6 234.0 L557.4 231.0 L558.3 232.7 L559.2 233.1 L560.0 230.7 L560.9 231.7 L561.8 232.5 L562.6 229.7 L563.5 228.6 L564.4 230.3 L565.3 234.2 L566.1 234.9 L567.0 231.3 L567.9 230.1 L568.7 231.2 L569.6 233.1 L570.5 232.2 L571.3 228.4 L572.2 228.7 L573.1 233.4 L574.0 235.0 L574.8 232.9 L575.7 233.6 L576.6 236.2 L577.4 236.7 L578.3 234.8 L579.2 234.7 L580.0 235.8 L580.9 236.7 L581.8 239.2 L582.7 236.1 L583.5 232.0 L584.4 232.2 L585.3 234.7 L586.1 235.9 L587.0 235.3 L587.9 236.0 L588.8 235.0 L589.6 232.6 L590.5 232.2 L591.4 231.5 L592.2 231.7 L593.1 233.0 L594.0 233.1 L594.8 232.2 L595.7 231.6 L596.6 231.8 L597.4 231.8 L598.3 218.3 L599.2 211.6 L600.1 231.6 L600.9 229.7 L601.8 226.3 L602.7 226.5 L603.5 206.7 L604.4 186.2 L605.3 191.8 L606.1 218.2 L607.0 231.0 L607.9 230.6 L608.8 224.1 L609.6 195.1 L610.5 177.7 L611.4 195.1 L612.2 224.1 L613.1 235.8 L614.0 234.7 L614.8 218.1 L615.7 191.9 L616.6 182.6 L617.5 209.4 L618.3 232.8 L619.2 234.5 L620.1 230.7 L620.9 223.8 L621.8 213.0 L622.7 213.6 L623.5 230.3 L624.4 229.3 L625.3 230.7 L626.2 232.2 L627.0 232.8 L627.9 233.5 L628.8 234.5 L629.6 235.4 L630.5 232.5 L631.4 231.2 L632.2 234.4 L633.1 234.8 L634.0 233.3 L634.9 233.7 L635.7 234.2 L636.6 236.6 L637.5 237.9 L638.3 234.7 L639.2 232.0 L640.1 233.3 L640.9 237.7 L641.8 235.4 L642.7 231.6 L643.6 233.1 L644.4 236.2 L645.3 233.5 L646.2 231.1 L647.0 231.0 L647.9 230.6 L648.8 232.2 L649.6 234.5 L650.5 233.0 L651.4 233.1 L652.3 235.6 L653.1 237.4 L654.0 234.9 L654.9 232.7 L655.7 234.3 L656.6 235.6 L657.5 235.9 L658.3 238.3 L659.2 236.5 L660.1 233.7 L661.0 234.9 L661.8 235.8 L662.7 233.6 L663.6 232.4 L664.4 233.7 L665.3 235.7 L666.2 235.0 L667.0 232.0 L667.9 230.8 L668.8 232.5 L669.7 232.2 L670.5 230.1 L671.4 229.9 L672.3 229.2 L673.1 229.1 L674.0 231.7 L674.9 233.4 L675.8 231.9 L676.6 232.2 L677.5 234.7 L678.4 237.2 L679.2 234.5 L680.1 230.9 L681.0 232.0 L681.8 234.9 L682.7 233.6 L683.6 232.7 L684.4 233.0 L685.3 233.5 L686.2 235.0 L687.1 235.2 L687.9 234.4 L688.8 234.3 L689.7 232.9 L690.5 232.5 L691.4 234.7 L692.3 236.0 L693.1 234.7 L694.0 234.1 L694.9 234.5 L695.8 233.9 L696.6 227.4 L697.5 220.2 L698.4 225.6 L699.2 230.5 L700.1 231.2 L701.0 232.7 L701.8 234.4 L702.7 234.8 L703.6 235.1 L704.5 236.7 L705.3 236.1 L706.2 233.5 L707.1 233.2 L707.9 235.6 L708.8 236.9 L709.7 235.3 L710.5 232.7 L711.4 231.5 L712.3 232.4 L713.2 233.1 L714.0 227.9 L714.9 221.3 L715.8 226.6 L716.6 232.0 L717.5 233.3 L718.4 233.3 L719.2 232.9 L720.1 233.5 L721.0 236.3 L721.9 235.7 L722.7 232.8 L723.6 233.2 L724.5 232.7 L725.3 232.2 L726.2 235.5 L727.1 236.3 L727.9 231.3 L728.8 228.7 L729.7 229.5 L730.6 231.5 L731.4 231.3 L732.3 230.2 L733.2 230.1 L734.0 231.4 L734.9 233.8 L735.8 234.8 L736.6 234.1 L737.5 234.6 L738.4 235.3 L739.3 235.0 L740.1 234.8 L741.0 234.2 L741.9 233.8 L742.7 234.8 L743.6 233.7 L744.5 232.4 L745.3 234.7 L746.2 236.8 L747.1 234.9 L748.0 232.9 L748.8 231.1 L749.7 231.4 L750.6 228.0 L751.4 220.2 L752.3 226.7 L753.2 230.7 L754.0 225.9 L754.9 225.0 L755.8 227.3 L756.7 230.0 L757.5 231.3 L758.4 231.0 L759.3 229.9 L760.1 231.0 L761.0 234.3 L761.9 236.0 L762.7 234.6 L763.6 233.0 L764.5 231.9 L765.4 232.1 L766.2 234.8 L767.1 234.9 L768.0 232.0 L768.8 230.7 L769.7 231.2 L770.6 230.3 L771.4 230.1 L772.3 218.8 L773.2 217.1 L774.1 236.0 L774.9 234.5 L775.8 233.3 L776.7 234.5 L777.5 219.6 L778.4 195.1 L779.3 205.9 L780.1 233.6 L781.0 230.6 L781.9 228.3 L782.8 226.8 L783.6 207.1 L784.5 189.7 L785.4 207.1 L786.2 232.9 L787.1 232.7 L788.0 232.4 L788.8 229.5 L789.7 201.2 L790.6 194.2 L791.5 220.3 L792.3 228.0 L793.2 228.7 L794.1 232.3 L794.9 234.4 L795.8 216.9 L796.7 224.8 L797.5 231.8 L798.4 236.6 L799.3 236.9 L800.2 235.9 L801.0 237.1 L801.9 236.3 L802.8 235.7 L803.6 233.9 L804.5 232.2 L805.4 232.1 L806.2 231.7 L807.1 231.3 L808.0 230.8 L808.9 232.0 L809.7 234.2 L810.6 233.3 L811.5 232.8 L812.3 232.8 L813.2 232.5 L814.1 234.4 L814.9 237.2 L815.8 236.1 L816.7 233.7 L817.6 232.4 L818.4 231.4 L819.3 231.5 L820.2 233.5 L821.0 234.7 L821.9 233.8 L822.8 234.0 L823.6 234.3 L824.5 231.6 L825.4 230.8 L826.3 232.5 L827.1 233.5 L828.0 231.4 L828.9 228.8 L829.7 229.1 L830.6 229.8 L831.5 230.3 L832.3 232.1 L833.2 233.6 L834.1 233.8 L835.0 233.4 L835.8 234.0 L836.7 235.4 L837.6 235.5 L838.4 234.4 L839.3 234.7 L840.2 232.8 L841.0 230.0 L841.9 231.3 L842.8 234.3 L843.7 233.7 L844.5 232.1 L845.4 225.9 L846.3 218.7 L847.1 225.7 L848.0 232.7 L848.9 233.4 L849.7 232.4 L850.6 230.3 L851.5 230.7 L852.4 233.0 L853.2 233.4 L854.1 233.2 L855.0 233.8 L855.8 236.1 L856.7 236.8 L857.6 233.7 L858.4 233.1 L859.3 233.2 L860.2 232.4 L861.1 232.3 L861.9 232.5 L862.8 232.9 L863.7 233.1 L864.5 234.0 L865.4 232.8 L866.3 232.0 L867.1 233.7 L868.0 231.6 L868.9 228.6 L869.8 222.6 L870.6 217.4 L871.5 225.9" fill="none" stroke="#ff0000" stroke-width="1.0" stroke-linejoin="round" shape-rendering="crispEdges"/><path d="M63.5 1 V249" stroke="#80e0f8" stroke-width="1" stroke-dasharray="2 2"/><path d="M110.5 1 V249" stroke="#f8a070" stroke-width="1" stroke-dasharray="2 2"/><circle cx="63.5" cy="219.5" r="3" fill="none" stroke="#80e0f8" stroke-width="1.2"/><path d="M56.5 219.5 H60.5 M66.5 219.5 H70.5" stroke="#80e0f8" stroke-width="1"/><circle cx="110.5" cy="219.5" r="3" fill="none" stroke="#f8a070" stroke-width="1.2"/><path d="M103.5 219.5 H107.5 M113.5 219.5 H117.5" stroke="#f8a070" stroke-width="1"/></svg>
<div style="position:absolute;left:62px;top:510px;width:5px;height:1px;background:#000;"></div>
<div class="t" style="right:1113px;text-align:right;top:505.69px;font-size:11px;line-height:11px;color:#1e1e1e;font-weight:normal;letter-spacing:-0.2px;">245.91m</div>
<div style="position:absolute;left:62px;top:525px;width:5px;height:1px;background:#000;"></div>
<div class="t" style="right:1113px;text-align:right;top:520.69px;font-size:11px;line-height:11px;color:#1e1e1e;font-weight:normal;letter-spacing:-0.2px;">100m</div>
<div style="position:absolute;left:62px;top:564px;width:5px;height:1px;background:#000;"></div>
<div class="t" style="right:1113px;text-align:right;top:559.69px;font-size:11px;line-height:11px;color:#1e1e1e;font-weight:normal;letter-spacing:-0.2px;">10m</div>
<div style="position:absolute;left:62px;top:602px;width:5px;height:1px;background:#000;"></div>
<div class="t" style="right:1113px;text-align:right;top:597.69px;font-size:11px;line-height:11px;color:#1e1e1e;font-weight:normal;letter-spacing:-0.2px;">1m</div>
<div style="position:absolute;left:62px;top:641px;width:5px;height:1px;background:#000;"></div>
<div class="t" style="right:1113px;text-align:right;top:636.69px;font-size:11px;line-height:11px;color:#1e1e1e;font-weight:normal;letter-spacing:-0.2px;">100u</div>
<div style="position:absolute;left:62px;top:680px;width:5px;height:1px;background:#000;"></div>
<div class="t" style="right:1113px;text-align:right;top:675.69px;font-size:11px;line-height:11px;color:#1e1e1e;font-weight:normal;letter-spacing:-0.2px;">10u</div>
<div style="position:absolute;left:62px;top:718px;width:5px;height:1px;background:#000;"></div>
<div class="t" style="right:1113px;text-align:right;top:713.69px;font-size:11px;line-height:11px;color:#1e1e1e;font-weight:normal;letter-spacing:-0.2px;">1u</div>
<div style="position:absolute;left:62px;top:757px;width:5px;height:1px;background:#000;"></div>
<div class="t" style="right:1113px;text-align:right;top:752.69px;font-size:11px;line-height:11px;color:#1e1e1e;font-weight:normal;letter-spacing:-0.2px;">93.829n</div>
<div style="position:absolute;left:69px;top:762px;width:1px;height:5px;background:#000;"></div>
<div class="t" style="left:-30.5px;width:200px;text-align:center;top:768.69px;font-size:11px;line-height:11px;color:#1e1e1e;font-weight:normal;letter-spacing:-0.2px;">0</div>
<div style="position:absolute;left:113px;top:762px;width:1px;height:5px;background:#000;"></div>
<div class="t" style="left:13.5px;width:200px;text-align:center;top:768.69px;font-size:11px;line-height:11px;color:#1e1e1e;font-weight:normal;letter-spacing:-0.2px;">5k</div>
<div style="position:absolute;left:156px;top:762px;width:1px;height:5px;background:#000;"></div>
<div class="t" style="left:56.5px;width:200px;text-align:center;top:768.69px;font-size:11px;line-height:11px;color:#1e1e1e;font-weight:normal;letter-spacing:-0.2px;">10k</div>
<div style="position:absolute;left:200px;top:762px;width:1px;height:5px;background:#000;"></div>
<div class="t" style="left:100.5px;width:200px;text-align:center;top:768.69px;font-size:11px;line-height:11px;color:#1e1e1e;font-weight:normal;letter-spacing:-0.2px;">15k</div>
<div style="position:absolute;left:243px;top:762px;width:1px;height:5px;background:#000;"></div>
<div class="t" style="left:143.5px;width:200px;text-align:center;top:768.69px;font-size:11px;line-height:11px;color:#1e1e1e;font-weight:normal;letter-spacing:-0.2px;">20k</div>
<div style="position:absolute;left:287px;top:762px;width:1px;height:5px;background:#000;"></div>
<div class="t" style="left:187.5px;width:200px;text-align:center;top:768.69px;font-size:11px;line-height:11px;color:#1e1e1e;font-weight:normal;letter-spacing:-0.2px;">25k</div>
<div style="position:absolute;left:330px;top:762px;width:1px;height:5px;background:#000;"></div>
<div class="t" style="left:230.5px;width:200px;text-align:center;top:768.69px;font-size:11px;line-height:11px;color:#1e1e1e;font-weight:normal;letter-spacing:-0.2px;">30k</div>
<div style="position:absolute;left:374px;top:762px;width:1px;height:5px;background:#000;"></div>
<div class="t" style="left:274.5px;width:200px;text-align:center;top:768.69px;font-size:11px;line-height:11px;color:#1e1e1e;font-weight:normal;letter-spacing:-0.2px;">35k</div>
<div style="position:absolute;left:417px;top:762px;width:1px;height:5px;background:#000;"></div>
<div class="t" style="left:317.5px;width:200px;text-align:center;top:768.69px;font-size:11px;line-height:11px;color:#1e1e1e;font-weight:normal;letter-spacing:-0.2px;">40k</div>
<div style="position:absolute;left:461px;top:762px;width:1px;height:5px;background:#000;"></div>
<div class="t" style="left:361.5px;width:200px;text-align:center;top:768.69px;font-size:11px;line-height:11px;color:#1e1e1e;font-weight:normal;letter-spacing:-0.2px;">45k</div>
<div style="position:absolute;left:504px;top:762px;width:1px;height:5px;background:#000;"></div>
<div class="t" style="left:404.5px;width:200px;text-align:center;top:768.69px;font-size:11px;line-height:11px;color:#1e1e1e;font-weight:normal;letter-spacing:-0.2px;">50k</div>
<div style="position:absolute;left:548px;top:762px;width:1px;height:5px;background:#000;"></div>
<div class="t" style="left:448.5px;width:200px;text-align:center;top:768.69px;font-size:11px;line-height:11px;color:#1e1e1e;font-weight:normal;letter-spacing:-0.2px;">55k</div>
<div style="position:absolute;left:591px;top:762px;width:1px;height:5px;background:#000;"></div>
<div class="t" style="left:491.5px;width:200px;text-align:center;top:768.69px;font-size:11px;line-height:11px;color:#1e1e1e;font-weight:normal;letter-spacing:-0.2px;">60k</div>
<div style="position:absolute;left:635px;top:762px;width:1px;height:5px;background:#000;"></div>
<div class="t" style="left:535.5px;width:200px;text-align:center;top:768.69px;font-size:11px;line-height:11px;color:#1e1e1e;font-weight:normal;letter-spacing:-0.2px;">65k</div>
<div style="position:absolute;left:678px;top:762px;width:1px;height:5px;background:#000;"></div>
<div class="t" style="left:578.5px;width:200px;text-align:center;top:768.69px;font-size:11px;line-height:11px;color:#1e1e1e;font-weight:normal;letter-spacing:-0.2px;">70k</div>
<div style="position:absolute;left:722px;top:762px;width:1px;height:5px;background:#000;"></div>
<div class="t" style="left:622.5px;width:200px;text-align:center;top:768.69px;font-size:11px;line-height:11px;color:#1e1e1e;font-weight:normal;letter-spacing:-0.2px;">75k</div>
<div style="position:absolute;left:765px;top:762px;width:1px;height:5px;background:#000;"></div>
<div class="t" style="left:665.5px;width:200px;text-align:center;top:768.69px;font-size:11px;line-height:11px;color:#1e1e1e;font-weight:normal;letter-spacing:-0.2px;">80k</div>
<div style="position:absolute;left:809px;top:762px;width:1px;height:5px;background:#000;"></div>
<div class="t" style="left:709.5px;width:200px;text-align:center;top:768.69px;font-size:11px;line-height:11px;color:#1e1e1e;font-weight:normal;letter-spacing:-0.2px;">85k</div>
<div style="position:absolute;left:852px;top:762px;width:1px;height:5px;background:#000;"></div>
<div class="t" style="left:752.5px;width:200px;text-align:center;top:768.69px;font-size:11px;line-height:11px;color:#1e1e1e;font-weight:normal;letter-spacing:-0.2px;">90k</div>
<div style="position:absolute;left:896px;top:762px;width:1px;height:5px;background:#000;"></div>
<div class="t" style="left:796.5px;width:200px;text-align:center;top:768.69px;font-size:11px;line-height:11px;color:#1e1e1e;font-weight:normal;letter-spacing:-0.2px;">95k</div>
<div style="position:absolute;left:939px;top:762px;width:1px;height:5px;background:#000;"></div>
<div class="t" style="left:839.5px;width:200px;text-align:center;top:768.69px;font-size:11px;line-height:11px;color:#1e1e1e;font-weight:normal;letter-spacing:-0.2px;">100k</div>
<div class="t" style="left:432px;width:200px;text-align:center;top:782.69px;font-size:11px;line-height:11px;color:#1e1e1e;font-weight:normal;letter-spacing:-0.2px;">Frequency (Hz)</div>
<div style="position:absolute;left:957px;top:523px;width:10px;height:1px;background:#333;"></div>
<div style="position:absolute;left:961px;top:519px;width:1px;height:10px;background:#333;"></div>
<div style="position:absolute;left:957px;top:545px;width:10px;height:1px;background:#333;"></div>
<svg style="position:absolute;left:956px;top:559px;" width="11" height="16" viewBox="0 0 11 16"><path d="M2 4 L5.5 1 L9 4 M2 12 L5.5 15 L9 12" fill="none" stroke="#333" stroke-width="1.2"/><path d="M3.8 6.5 Q5.5 3.5 7.2 6.5" fill="none" stroke="#333" stroke-width="1"/><rect x="3" y="6.5" width="5" height="4" fill="#333"/></svg>
<svg style="position:absolute;left:957.5px;top:590px;" width="8" height="16" viewBox="0 0 8 16"><path d="M1 4 L4 1 L7 4" fill="none" stroke="#333" stroke-width="1.1"/><path d="M4 3 V15" stroke="#333" stroke-width="1" stroke-dasharray="1 2"/></svg>
<div class="t" style="left:861.5px;width:200px;text-align:center;top:613.15px;font-size:14px;line-height:14px;color:#333;font-weight:normal;letter-spacing:0px;">C</div>
<svg style="position:absolute;left:957.5px;top:633px;" width="8" height="16" viewBox="0 0 8 16"><path d="M1 11 L4 14 L7 11" fill="none" stroke="#333" stroke-width="1.1"/><path d="M4 0 V12" stroke="#333" stroke-width="1" stroke-dasharray="1 2"/></svg>
<div style="position:absolute;left:955px;top:663px;width:2px;height:2px;background:#1a1a1a;"></div>
<div style="position:absolute;left:960px;top:663px;width:2px;height:2px;background:#1a1a1a;"></div>
<div style="position:absolute;left:965px;top:663px;width:2px;height:2px;background:#1a1a1a;"></div>
<div style="position:absolute;left:982px;top:43px;width:2px;height:753px;background:#cdcdcd;"></div>
<svg style="position:absolute;left:1148px;top:44px;" width="14" height="12" viewBox="0 0 14 12"><rect x="0" y="0" width="14" height="2" fill="#1a1a1a"/><rect x="0" y="5" width="14" height="2" fill="#1a1a1a"/><rect x="0" y="10" width="14" height="2" fill="#1a1a1a"/></svg>
<div class="t" style="left:993px;top:55.00px;font-size:13px;line-height:13px;color:#262626;font-weight:bold;letter-spacing:-0.3px;">Acquisition</div>
<div class="t" style="right:83px;text-align:right;top:76.69px;font-size:11px;line-height:11px;color:#1e1e1e;font-weight:normal;letter-spacing:-0.2px;">Points</div>
<div style="position:absolute;left:1093px;top:73px;width:60px;height:17px;box-sizing:border-box;background:#fcfcfc;border:1px solid #a3a3a3;"></div>
<div class="t" style="right:24px;text-align:right;top:75.69px;font-size:11px;line-height:11px;color:#1e1e1e;font-weight:normal;letter-spacing:0px;">10016</div>
<div class="t" style="right:83px;text-align:right;top:96.69px;font-size:11px;line-height:11px;color:#1e1e1e;font-weight:normal;letter-spacing:-0.35px;">Time Base (s)</div>
<div style="position:absolute;left:1093px;top:93px;width:60px;height:17px;box-sizing:border-box;background:#fcfcfc;border:1px solid #a3a3a3;"></div>
<div class="t" style="right:24px;text-align:right;top:96.69px;font-size:11px;line-height:11px;color:#1e1e1e;font-weight:normal;letter-spacing:-0.1px;">10.016m</div>
<div class="t" style="right:119px;text-align:right;top:116.69px;font-size:11px;line-height:11px;color:#1e1e1e;font-weight:normal;letter-spacing:-0.1px;">Rate (Hz)</div>
<div style="position:absolute;left:1057px;top:113px;width:96px;height:17px;box-sizing:border-box;background:#fcfcfc;border:1px solid #a3a3a3;"></div>
<div class="t" style="right:59px;text-align:right;top:116.69px;font-size:11px;line-height:11px;color:#1e1e1e;font-weight:normal;letter-spacing:0px;">1 M</div>
<div class="t" style="right:24px;text-align:right;top:116.69px;font-size:11px;line-height:11px;color:#1e1e1e;font-weight:normal;letter-spacing:0px;">(1x)</div>
<svg style="position:absolute;left:1155px;top:115.5px;" width="8" height="12" viewBox="0 0 8 12"><path d="M0.5 4.5 L4 1 L7.5 4.5 Z M0.5 7.5 L4 11 L7.5 7.5 Z" fill="#7f7f7f"/></svg>
<div class="t" style="left:996px;top:159.00px;font-size:13px;line-height:13px;color:#1e8ac4;font-weight:bold;letter-spacing:-0.3px;">Trigger</div>
<div class="t" style="left:1066px;top:159.00px;font-size:13px;line-height:13px;color:#262626;font-weight:bold;letter-spacing:-0.3px;">Measure</div>
<div style="position:absolute;left:994px;top:181px;width:169px;height:2px;background:#d2d2d2;"></div>
<div class="t" style="right:119px;text-align:right;top:196.69px;font-size:11px;line-height:11px;color:#1e1e1e;font-weight:normal;letter-spacing:-0.2px;">Mode</div>
<div style="position:absolute;left:1057px;top:193px;width:96px;height:17px;box-sizing:border-box;background:#fcfcfc;border:1px solid #a3a3a3;"></div>
<div class="t" style="left:1059px;top:196.69px;font-size:11px;line-height:11px;color:#1e1e1e;font-weight:normal;letter-spacing:-0.2px;">Immediate</div>
<svg style="position:absolute;left:1155px;top:195.5px;" width="8" height="12" viewBox="0 0 8 12"><path d="M0.5 4.5 L4 1 L7.5 4.5 Z M0.5 7.5 L4 11 L7.5 7.5 Z" fill="#7f7f7f"/></svg>
<div class="t" style="right:119px;text-align:right;top:222.69px;font-size:11px;line-height:11px;color:#a3a3a3;font-weight:normal;letter-spacing:-0.2px;">Channel</div>
<div style="position:absolute;left:1057px;top:219px;width:96px;height:17px;box-sizing:border-box;background:#ebebeb;border:1px solid #cfcfcf;"></div>
<div class="t" style="left:1060px;top:222.69px;font-size:11px;line-height:11px;color:#a3a3a3;font-weight:normal;letter-spacing:-0.2px;">Current (A)</div>
<svg style="position:absolute;left:1155px;top:221.5px;" width="8" height="12" viewBox="0 0 8 12"><path d="M0.5 4.5 L4 1 L7.5 4.5 Z M0.5 7.5 L4 11 L7.5 7.5 Z" fill="#c4c4c4"/></svg>
<div class="t" style="right:119px;text-align:right;top:242.69px;font-size:11px;line-height:11px;color:#a3a3a3;font-weight:normal;letter-spacing:-0.3px;">Raw</div>
<div style="position:absolute;left:1057px;top:241px;width:13px;height:13px;box-sizing:border-box;border:1px solid #c6c6c6;background:transparent;"></div>
<div class="t" style="right:119px;text-align:right;top:265.69px;font-size:11px;line-height:11px;color:#a3a3a3;font-weight:normal;letter-spacing:-0.2px;">Slope</div>
<div style="position:absolute;left:1057px;top:263px;width:96px;height:16px;box-sizing:border-box;background:#ebebeb;border:1px solid #cfcfcf;"></div>
<div class="t" style="left:1060px;top:265.69px;font-size:11px;line-height:11px;color:#a3a3a3;font-weight:normal;letter-spacing:-0.2px;">Rising</div>
<svg style="position:absolute;left:1155px;top:265px;" width="8" height="12" viewBox="0 0 8 12"><path d="M0.5 4.5 L4 1 L7.5 4.5 Z M0.5 7.5 L4 11 L7.5 7.5 Z" fill="#c4c4c4"/></svg>
<div class="t" style="right:83px;text-align:right;top:292.69px;font-size:11px;line-height:11px;color:#a3a3a3;font-weight:normal;letter-spacing:-0.35px;">Trigger Level (A)</div>
<div style="position:absolute;left:1093px;top:290px;width:60px;height:16px;box-sizing:border-box;background:#ebebeb;border:1px solid #cfcfcf;"></div>
<div class="t" style="right:24px;text-align:right;top:292.69px;font-size:11px;line-height:11px;color:#a3a3a3;font-weight:normal;letter-spacing:-0.1px;">1.0000p</div>
<div class="t" style="right:83px;text-align:right;top:314.69px;font-size:11px;line-height:11px;color:#a3a3a3;font-weight:normal;letter-spacing:-0.35px;">Hysteresis (A)</div>
<div style="position:absolute;left:1093px;top:312px;width:60px;height:16px;box-sizing:border-box;background:#ebebeb;border:1px solid #cfcfcf;"></div>
<div class="t" style="right:24px;text-align:right;top:314.69px;font-size:11px;line-height:11px;color:#a3a3a3;font-weight:normal;letter-spacing:-0.1px;">0.0000</div>
<div class="t" style="right:83px;text-align:right;top:338.69px;font-size:11px;line-height:11px;color:#a3a3a3;font-weight:normal;letter-spacing:-0.35px;">Pre-Trigger (s)</div>
<div style="position:absolute;left:1093px;top:336px;width:60px;height:16px;box-sizing:border-box;background:#ebebeb;border:1px solid #cfcfcf;"></div>
<div class="t" style="right:24px;text-align:right;top:338.69px;font-size:11px;line-height:11px;color:#a3a3a3;font-weight:normal;letter-spacing:-0.1px;">0.0000</div>
<div class="t" style="right:119px;text-align:right;top:378.69px;font-size:11px;line-height:11px;color:#1e1e1e;font-weight:normal;letter-spacing:-0.2px;">Arming</div>
<div style="position:absolute;left:1057px;top:375px;width:96px;height:17px;box-sizing:border-box;background:#fcfcfc;border:1px solid #a3a3a3;"></div>
<div class="t" style="left:1059px;top:378.69px;font-size:11px;line-height:11px;color:#1e1e1e;font-weight:normal;letter-spacing:-0.2px;">Single shot</div>
<svg style="position:absolute;left:1155px;top:377.5px;" width="8" height="12" viewBox="0 0 8 12"><path d="M0.5 4.5 L4 1 L7.5 4.5 Z M0.5 7.5 L4 11 L7.5 7.5 Z" fill="#7f7f7f"/></svg>
<div style="position:absolute;left:1057px;top:398px;width:96px;height:19px;box-sizing:border-box;border:1px solid #9a9a9a;border-radius:3px;background:#e8e8e8;"></div>
<div class="t" style="left:1002.5px;width:200px;text-align:center;top:402.69px;font-size:11px;line-height:11px;color:#1e1e1e;font-weight:normal;letter-spacing:-0.2px;">Rearm</div>
<div class="t" style="right:119px;text-align:right;top:435.69px;font-size:11px;line-height:11px;color:#1e1e1e;font-weight:normal;letter-spacing:-0.3px;">Savename</div>
<div style="position:absolute;left:1057px;top:432px;width:96px;height:19px;box-sizing:border-box;background:#fcfcfc;border:1px solid #a3a3a3;"></div>
<div class="t" style="left:1060px;top:435.69px;font-size:11px;line-height:11px;color:#1e1e1e;font-weight:normal;letter-spacing:-0.2px;">P10m</div>
<div style="position:absolute;left:992px;top:479px;width:171px;height:2px;background:#d2d2d2;"></div>
<div class="t" style="left:995px;top:490.00px;font-size:13px;line-height:13px;color:#262626;font-weight:bold;letter-spacing:-0.4px;">FFT</div>
<div class="t" style="right:122px;text-align:right;top:516.69px;font-size:11px;line-height:11px;color:#1e1e1e;font-weight:normal;letter-spacing:-0.3px;">Window</div>
<div style="position:absolute;left:1053px;top:514px;width:96px;height:17px;box-sizing:border-box;background:#fcfcfc;border:1px solid #a3a3a3;"></div>
<div class="t" style="left:1055px;top:516.69px;font-size:11px;line-height:11px;color:#1e1e1e;font-weight:normal;letter-spacing:-0.2px;">Hanning</div>
<svg style="position:absolute;left:1151px;top:516.5px;" width="8" height="12" viewBox="0 0 8 12"><path d="M0.5 4.5 L4 1 L7.5 4.5 Z M0.5 7.5 L4 11 L7.5 7.5 Z" fill="#7f7f7f"/></svg>
<div style="position:absolute;left:992px;top:540px;width:171px;height:2px;background:#d2d2d2;"></div>
<div class="t" style="left:995px;top:551.00px;font-size:13px;line-height:13px;color:#262626;font-weight:bold;letter-spacing:-0.4px;">Averaging</div>
<div class="t" style="right:122px;text-align:right;top:580.69px;font-size:11px;line-height:11px;color:#1e1e1e;font-weight:normal;letter-spacing:-0.2px;">Type</div>
<div style="position:absolute;left:1053px;top:578px;width:96px;height:17px;box-sizing:border-box;background:#fcfcfc;border:1px solid #a3a3a3;"></div>
<div class="t" style="left:1055px;top:580.69px;font-size:11px;line-height:11px;color:#1e1e1e;font-weight:normal;letter-spacing:-0.2px;">RMS</div>
<svg style="position:absolute;left:1151px;top:580.5px;" width="8" height="12" viewBox="0 0 8 12"><path d="M0.5 4.5 L4 1 L7.5 4.5 Z M0.5 7.5 L4 11 L7.5 7.5 Z" fill="#7f7f7f"/></svg>
<div class="t" style="right:122px;text-align:right;top:600.69px;font-size:11px;line-height:11px;color:#1e1e1e;font-weight:normal;letter-spacing:-0.3px;">Weighting</div>
<div style="position:absolute;left:1053px;top:598px;width:96px;height:17px;box-sizing:border-box;background:#fcfcfc;border:1px solid #a3a3a3;"></div>
<div class="t" style="left:1055px;top:600.69px;font-size:11px;line-height:11px;color:#1e1e1e;font-weight:normal;letter-spacing:-0.2px;">Exponential</div>
<svg style="position:absolute;left:1151px;top:600.5px;" width="8" height="12" viewBox="0 0 8 12"><path d="M0.5 4.5 L4 1 L7.5 4.5 Z M0.5 7.5 L4 11 L7.5 7.5 Z" fill="#7f7f7f"/></svg>
<div class="t" style="right:122px;text-align:right;top:621.69px;font-size:11px;line-height:11px;color:#1e1e1e;font-weight:normal;letter-spacing:-0.2px;">Count</div>
<div style="position:absolute;left:1053px;top:618px;width:42px;height:17px;box-sizing:border-box;background:#fcfcfc;border:1px solid #a3a3a3;"></div>
<div class="t" style="right:82px;text-align:right;top:621.69px;font-size:11px;line-height:11px;color:#1e1e1e;font-weight:normal;letter-spacing:0px;">10</div>
<div style="position:absolute;left:1099px;top:618px;width:50px;height:17px;box-sizing:border-box;background:#d4d4d4;border:1px solid #a0a0a0;"></div>
<div class="t" style="right:28px;text-align:right;top:621.69px;font-size:11px;line-height:11px;color:#1e1e1e;font-weight:normal;letter-spacing:0px;">1441</div>
<div class="t" style="left:1154px;top:621.69px;font-size:11px;line-height:11px;color:#1e1e1e;font-weight:normal;letter-spacing:0px;">i</div>
<div style="position:absolute;left:1053px;top:649px;width:96px;height:19px;box-sizing:border-box;border:1px solid #9a9a9a;border-radius:3px;background:#e8e8e8;"></div>
<div class="t" style="left:998.5px;width:200px;text-align:center;top:653.69px;font-size:11px;line-height:11px;color:#1e1e1e;font-weight:normal;letter-spacing:-0.2px;">Restart</div>
<div class="t" style="right:122px;text-align:right;top:681.69px;font-size:11px;line-height:11px;color:#1e1e1e;font-weight:normal;letter-spacing:-0.3px;">Savename</div>
<div style="position:absolute;left:1053px;top:678px;width:96px;height:17px;box-sizing:border-box;background:#fcfcfc;border:1px solid #a3a3a3;"></div>
<div class="t" style="left:1056px;top:681.69px;font-size:11px;line-height:11px;color:#1e1e1e;font-weight:normal;letter-spacing:-0.3px;">OSCI_Spectrum</div>
<div style="position:absolute;left:992px;top:703px;width:171px;height:2px;background:#d2d2d2;"></div>
<div class="t" style="left:995px;top:712.00px;font-size:13px;line-height:13px;color:#262626;font-weight:bold;letter-spacing:-0.4px;">Cursors</div>
<div style="position:absolute;left:995px;top:731px;width:104px;height:52px;background:#000;"></div>
<div class="t" style="right:105px;text-align:right;top:735.69px;font-size:11px;line-height:11px;color:#f2e266;font-weight:normal;letter-spacing:-0.1px;word-spacing:0.5px;">RMS = 449m</div>
<div class="t" style="right:104px;text-align:right;top:751.69px;font-size:11px;line-height:11px;color:#f2e266;font-weight:normal;letter-spacing:0.1px;word-spacing:2px;">df = 5.39k</div>
<div class="t" style="right:104px;text-align:right;top:767.69px;font-size:11px;line-height:11px;color:#f2e266;font-weight:normal;letter-spacing:0.1px;word-spacing:2px;">x1 = 7.09k</div>
<svg style="position:absolute;left:1090px;top:763px;" width="3" height="14" viewBox="0 0 3 14"><rect x="0" y="0" width="2" height="2" fill="#fff"/><rect x="0" y="5" width="2" height="2" fill="#fff"/><rect x="0" y="10" width="2" height="2" fill="#fff"/></svg>
</body></html>
